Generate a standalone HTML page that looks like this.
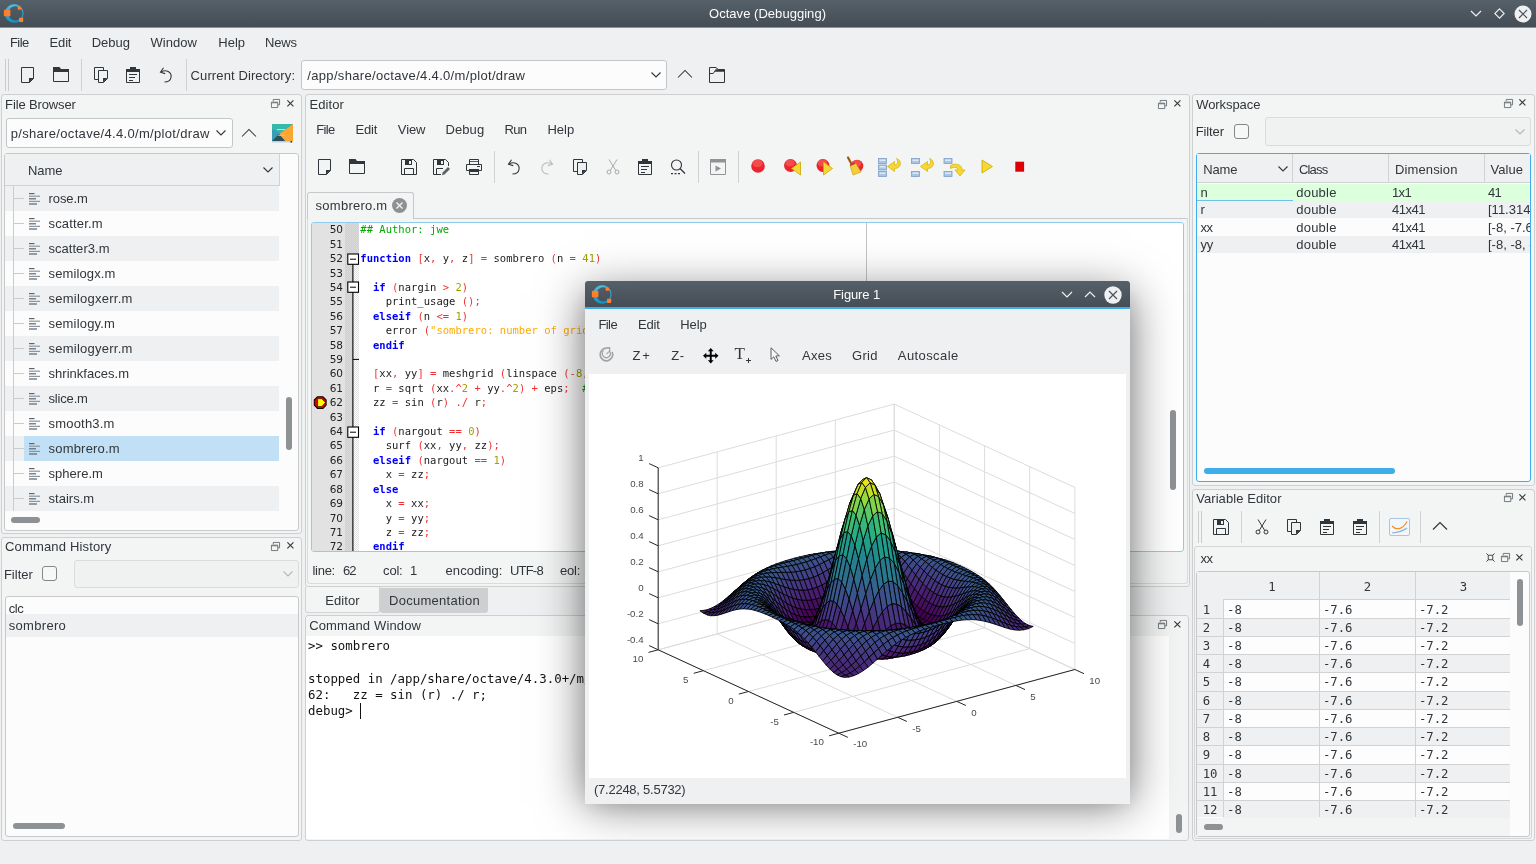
<!DOCTYPE html><html><head><meta charset="utf-8"><title>Octave (Debugging)</title><style>
html,body{margin:0;padding:0;}
body{width:1536px;height:864px;overflow:hidden;background:#eff0f1;position:relative;font-family:"Liberation Sans",sans-serif;font-size:13px;color:#31363b;}
#root{position:absolute;left:0;top:0;width:1536px;height:864px;overflow:hidden;transform:translateZ(0);will-change:transform;}
.t{position:absolute;white-space:pre;}
.m{font-family:"DejaVu Sans Mono","Liberation Mono",monospace;}
.w{color:#fcfcfc;}
.dock{position:absolute;border:1px solid #cdcfd0;border-radius:3px;background:#f3f4f4;box-sizing:border-box;}
.view{position:absolute;border:1px solid #c6c8c9;border-radius:3px;background:#fcfcfc;box-sizing:border-box;overflow:hidden;}
.sep{position:absolute;width:1px;background:#cfd1d2;}
.sb{position:absolute;background:#8f9294;border-radius:3px;}
</style></head><body><div id="root">
<div style="position:absolute;left:0px;top:0px;width:1536px;height:27px;background:linear-gradient(#566069,#444d55);"></div><div style="position:absolute;left:0px;top:27px;width:1536px;height:1px;background:#3daee9;"></div><svg style="position:absolute;left:0px;top:0px" width="28" height="28" viewBox="0 0 28 28"><defs><linearGradient id="olg" x1="0" y1="0" x2="0" y2="1"><stop offset="0" stop-color="#52bde2"/><stop offset="1" stop-color="#0d93c6"/></linearGradient></defs><path fill-rule="evenodd" fill="url(#olg)" d="M14.2,4.2 a9.3,9.3 0 1 0 0.01,0 Z M15.4,6.3 a7.1,7.1 0 1 1 -0.01,0 Z"/><rect x="3.9" y="9.7" width="6.5" height="6.5" rx="0.7" fill="#ff7f2a"/><rect x="17.7" y="6.5" width="3.3" height="3.3" rx="0.8" fill="#ff7f2a"/><rect x="19" y="17.7" width="4.2" height="4.2" rx="0.6" fill="#ff7f2a"/></svg><div class="t w" style="left:709.00px;top:4px;height:20px;line-height:20px;letter-spacing:0.038px;">Octave (Debugging)</div><svg style="position:absolute;left:1470.4px;top:10px;overflow:visible" width="12" height="8" viewBox="0 0 12 8" ><path d="M1,1 L6,6 L11,1" stroke="#eff0f1" stroke-width="1.2" fill="none" /></svg><svg style="position:absolute;left:1494px;top:8px;overflow:visible" width="11" height="11" viewBox="0 0 11 11" ><path d="M5.5,0.8 L10.2,5.5 L5.5,10.2 L0.8,5.5 Z" stroke="#eff0f1" stroke-width="1.1" fill="none" /></svg><svg style="position:absolute;left:1513.6px;top:4.5px;overflow:visible" width="18" height="18" viewBox="0 0 18 18" ><circle cx="9" cy="9" r="8.5" fill="#eff0f1"/><path d="M5,5 L13,13 M13,5 L5,13" stroke="#4a535b" stroke-width="1.2" fill="none" /></svg>
<div class="t " style="left:10.00px;top:33px;height:20px;line-height:20px;letter-spacing:-0.577px;">File</div><div class="t " style="left:49.60px;top:33px;height:20px;line-height:20px;letter-spacing:-0.175px;">Edit</div><div class="t " style="left:91.70px;top:33px;height:20px;line-height:20px;">Debug</div><div class="t " style="left:150.50px;top:33px;height:20px;line-height:20px;letter-spacing:0.044px;">Window</div><div class="t " style="left:218.30px;top:33px;height:20px;line-height:20px;letter-spacing:-0.005px;">Help</div><div class="t " style="left:265.00px;top:33px;height:20px;line-height:20px;letter-spacing:-0.167px;">News</div>
<div style="position:absolute;left:5px;top:59px;width:1px;height:32px;background:#c9cbcd;"></div><div style="position:absolute;left:8px;top:59px;width:1px;height:32px;background:#c9cbcd;"></div><svg style="position:absolute;left:20px;top:67px;overflow:visible" width="16" height="16" viewBox="0 0 16 16" ><path d="M1.5,0.5 H13.5 V11.5 L9.5,15.5 H1.5 Z" stroke="#31363b" stroke-width="1" fill="none" /><path d="M13.5,11 H9 V15.5 Z" fill="#31363b" /><path d="M9.5,15.5 V11.5 H13.5" stroke="#31363b" stroke-width="1" fill="none" /></svg><svg style="position:absolute;left:53px;top:67px;overflow:visible" width="16" height="16" viewBox="0 0 16 16" ><path d="M0,0 H6.5 L8,2 H16 V5 H0 Z" fill="#31363b" /><path d="M0.5,4 V14.5 H15.5 V4" stroke="#31363b" stroke-width="1" fill="none" /></svg><div style="position:absolute;left:81px;top:59px;width:1px;height:32px;background:#cfd1d2;"></div><svg style="position:absolute;left:93px;top:67px;overflow:visible" width="16" height="16" viewBox="0 0 16 16" ><path d="M1.5,0.5 H10.5 V3 M5,12.5 H1.5 V0.5" stroke="#31363b" stroke-width="1" fill="none" /><path d="M5.5,3.5 H14.5 V11.5 L10.5,15.5 H5.5 Z" stroke="#31363b" stroke-width="1" fill="#eff0f1" /><path d="M14.5,11 H10 V15.5 Z" fill="#31363b" /></svg><svg style="position:absolute;left:125px;top:67px;overflow:visible" width="16" height="16" viewBox="0 0 16 16" ><path d="M1.5,2.5 V15.5 H14.5 V2.5" stroke="#31363b" stroke-width="1" fill="none" /><path d="M1,2 H5 V0 H11 V2 H15 V5 H1 Z" fill="#31363b" /><path d="M4,7.5 H12 M4,10.5 H10 M4,13.5 H8" stroke="#31363b" stroke-width="1" fill="none" /></svg><svg style="position:absolute;left:158px;top:67px;overflow:visible" width="16" height="16" viewBox="0 0 16 16" ><path d="M3,5 C8,2 14,5 13,10.5 C12.5,13 10,15 6.5,15" stroke="#31363b" stroke-width="1.1" fill="none" /><path d="M5.5,0.8 L2.5,5.2 L7.2,6.6" stroke="#31363b" stroke-width="1.1" fill="none" /></svg><div style="position:absolute;left:186px;top:59px;width:1px;height:32px;background:#cfd1d2;"></div><div class="t " style="left:190.60px;top:66px;height:20px;line-height:20px;letter-spacing:0.108px;">Current Directory:</div><div style="position:absolute;left:301px;top:60px;width:366px;height:30px;background:#fcfcfc;border:1px solid #c3c5c6;border-radius:3px;box-sizing:border-box;"></div><div class="t " style="left:307.30px;top:66px;height:20px;line-height:20px;letter-spacing:0.324px;">/app/share/octave/4.4.0/m/plot/draw</div><svg style="position:absolute;left:651px;top:72px;overflow:visible" width="10" height="6" viewBox="0 0 10 6" ><path d="M0.5,0.5 L5,5 L9.5,0.5" stroke="#31363b" stroke-width="1.1" fill="none" /></svg><svg style="position:absolute;left:676.5px;top:66.3px;overflow:visible" width="16" height="16" viewBox="0 0 16 16" ><path d="M1,11.5 L8,4.5 L15,11.5" stroke="#31363b" stroke-width="1.05" fill="none" /></svg><svg style="position:absolute;left:709px;top:67px;overflow:visible" width="16" height="16" viewBox="0 0 16 16" ><path d="M0.5,0.5 H7.2 L9.2,2.5 H15.5 V15.5 H0.5 Z" stroke="#31363b" stroke-width="1" fill="none" /><path d="M7.6,2.2 H15.5 V4.8 H5.6 Z" fill="#31363b" /><path d="M7.6,1.6 L4.2,6.5 H0.5" stroke="#31363b" stroke-width="1" fill="none" /></svg>
<div class="dock" style="left:1px;top:94px;width:301px;height:440px"></div><div class="t " style="left:5.10px;top:94.5px;height:20px;line-height:20px;letter-spacing:-0.129px;">File Browser</div><svg style="position:absolute;left:270.8px;top:99px;overflow:visible" width="9" height="9" viewBox="0 0 10 10" ><path d="M2.5,2.5 V0.5 H9.5 V6.5 H7.5" stroke="#686d72" stroke-width="1" fill="none" /><path d="M0.5,3.5 H7.5 V9.5 H0.5 Z" stroke="#686d72" stroke-width="1" fill="none" /><path d="M0.5,4.2 H7.5" stroke="#686d72" stroke-width="1" fill="none" /></svg><svg style="position:absolute;left:286.7px;top:99.7px;overflow:visible" width="6.8" height="6.8" viewBox="0 0 9 9" ><path d="M0.5,0.5 L8.5,8.5 M8.5,0.5 L0.5,8.5" stroke="#33383d" stroke-width="1.5" fill="none" /></svg><div style="position:absolute;left:6px;top:118px;width:227px;height:30px;background:#fcfcfc;border:1px solid #c3c5c6;border-radius:3px;box-sizing:border-box;"></div><div class="t " style="left:10.70px;top:124px;height:20px;line-height:20px;letter-spacing:0.325px;">p/share/octave/4.4.0/m/plot/draw</div><svg style="position:absolute;left:216px;top:130px;overflow:visible" width="10" height="6" viewBox="0 0 10 6" ><path d="M0.5,0.5 L5,5 L9.5,0.5" stroke="#31363b" stroke-width="1.1" fill="none" /></svg><svg style="position:absolute;left:241px;top:124.5px;overflow:visible" width="16" height="16" viewBox="0 0 16 16" ><path d="M1,11.5 L8,4.5 L15,11.5" stroke="#31363b" stroke-width="1.05" fill="none" /></svg><svg style="position:absolute;left:272px;top:124px;overflow:visible" width="21" height="19" viewBox="0 0 21 19" ><rect x="0" y="0" width="21" height="17" fill="#3a9db5"/><path d="M0,0 H21 L8,9 L0,5 Z" fill="#35b9ab"/><path d="M21,0 V17 H13 L7,10 Z" fill="#f9a633"/><path d="M0,17 L7,10 L13,17 Z" fill="#2e4f5e"/><rect x="0" y="17" width="21" height="1.5" fill="#b7d3dd"/><rect x="18.5" y="17" width="1.5" height="1.5" fill="#31363b"/><rect x="5" y="5" width="8" height="1" fill="#d8f0ea" opacity=".8"/><rect x="6" y="11" width="7" height="1" fill="#d8c9a0" opacity=".7"/></svg><div class="view" style="left:4px;top:153px;width:295px;height:378px"></div><div style="position:absolute;left:5px;top:154px;width:274px;height:31px;background:#eff0f1;border-bottom:1px solid #d0d2d3;border-right:1px solid #d0d2d3;box-sizing:content-box;"></div><div class="t " style="left:28.00px;top:161px;height:20px;line-height:20px;letter-spacing:-0.103px;">Name</div><svg style="position:absolute;left:263px;top:167px;overflow:visible" width="10" height="6" viewBox="0 0 10 6" ><path d="M0.5,0.5 L5,5 L9.5,0.5" stroke="#31363b" stroke-width="1.1" fill="none" /></svg><div style="position:absolute;left:5px;top:186px;width:274px;height:25px;background:#eff0f1;"></div><div style="position:absolute;left:14px;top:198px;width:10px;height:1px;background:#c9cbcc;"></div><svg style="position:absolute;left:29px;top:193px;overflow:visible" width="12" height="12" viewBox="0 0 12 12" ><rect x="0" y="0" width="5.5" height="1.2" fill="#5c6670"/><rect x="0" y="2.6" width="11" height="1.2" fill="#8c96a0"/><rect x="0" y="5.2" width="7" height="1.2" fill="#5c6670"/><rect x="0" y="7.8" width="11" height="1.2" fill="#8c96a0"/><rect x="0" y="10.4" width="8" height="1.2" fill="#5c6670"/></svg><div class="t " style="left:48.50px;top:189px;height:20px;line-height:20px;letter-spacing:-0.063px;">rose.m</div><div style="position:absolute;left:14px;top:223px;width:10px;height:1px;background:#c9cbcc;"></div><svg style="position:absolute;left:29px;top:218px;overflow:visible" width="12" height="12" viewBox="0 0 12 12" ><rect x="0" y="0" width="5.5" height="1.2" fill="#5c6670"/><rect x="0" y="2.6" width="11" height="1.2" fill="#8c96a0"/><rect x="0" y="5.2" width="7" height="1.2" fill="#5c6670"/><rect x="0" y="7.8" width="11" height="1.2" fill="#8c96a0"/><rect x="0" y="10.4" width="8" height="1.2" fill="#5c6670"/></svg><div class="t " style="left:48.50px;top:214px;height:20px;line-height:20px;letter-spacing:0.173px;">scatter.m</div><div style="position:absolute;left:5px;top:236px;width:274px;height:25px;background:#eff0f1;"></div><div style="position:absolute;left:14px;top:248px;width:10px;height:1px;background:#c9cbcc;"></div><svg style="position:absolute;left:29px;top:243px;overflow:visible" width="12" height="12" viewBox="0 0 12 12" ><rect x="0" y="0" width="5.5" height="1.2" fill="#5c6670"/><rect x="0" y="2.6" width="11" height="1.2" fill="#8c96a0"/><rect x="0" y="5.2" width="7" height="1.2" fill="#5c6670"/><rect x="0" y="7.8" width="11" height="1.2" fill="#8c96a0"/><rect x="0" y="10.4" width="8" height="1.2" fill="#5c6670"/></svg><div class="t " style="left:48.50px;top:239px;height:20px;line-height:20px;letter-spacing:0.032px;">scatter3.m</div><div style="position:absolute;left:14px;top:273px;width:10px;height:1px;background:#c9cbcc;"></div><svg style="position:absolute;left:29px;top:268px;overflow:visible" width="12" height="12" viewBox="0 0 12 12" ><rect x="0" y="0" width="5.5" height="1.2" fill="#5c6670"/><rect x="0" y="2.6" width="11" height="1.2" fill="#8c96a0"/><rect x="0" y="5.2" width="7" height="1.2" fill="#5c6670"/><rect x="0" y="7.8" width="11" height="1.2" fill="#8c96a0"/><rect x="0" y="10.4" width="8" height="1.2" fill="#5c6670"/></svg><div class="t " style="left:48.50px;top:264px;height:20px;line-height:20px;letter-spacing:0.132px;">semilogx.m</div><div style="position:absolute;left:5px;top:286px;width:274px;height:25px;background:#eff0f1;"></div><div style="position:absolute;left:14px;top:298px;width:10px;height:1px;background:#c9cbcc;"></div><svg style="position:absolute;left:29px;top:293px;overflow:visible" width="12" height="12" viewBox="0 0 12 12" ><rect x="0" y="0" width="5.5" height="1.2" fill="#5c6670"/><rect x="0" y="2.6" width="11" height="1.2" fill="#8c96a0"/><rect x="0" y="5.2" width="7" height="1.2" fill="#5c6670"/><rect x="0" y="7.8" width="11" height="1.2" fill="#8c96a0"/><rect x="0" y="10.4" width="8" height="1.2" fill="#5c6670"/></svg><div class="t " style="left:48.50px;top:289px;height:20px;line-height:20px;letter-spacing:0.248px;">semilogxerr.m</div><div style="position:absolute;left:14px;top:323px;width:10px;height:1px;background:#c9cbcc;"></div><svg style="position:absolute;left:29px;top:318px;overflow:visible" width="12" height="12" viewBox="0 0 12 12" ><rect x="0" y="0" width="5.5" height="1.2" fill="#5c6670"/><rect x="0" y="2.6" width="11" height="1.2" fill="#8c96a0"/><rect x="0" y="5.2" width="7" height="1.2" fill="#5c6670"/><rect x="0" y="7.8" width="11" height="1.2" fill="#8c96a0"/><rect x="0" y="10.4" width="8" height="1.2" fill="#5c6670"/></svg><div class="t " style="left:48.50px;top:314px;height:20px;line-height:20px;letter-spacing:0.177px;">semilogy.m</div><div style="position:absolute;left:5px;top:336px;width:274px;height:25px;background:#eff0f1;"></div><div style="position:absolute;left:14px;top:348px;width:10px;height:1px;background:#c9cbcc;"></div><svg style="position:absolute;left:29px;top:343px;overflow:visible" width="12" height="12" viewBox="0 0 12 12" ><rect x="0" y="0" width="5.5" height="1.2" fill="#5c6670"/><rect x="0" y="2.6" width="11" height="1.2" fill="#8c96a0"/><rect x="0" y="5.2" width="7" height="1.2" fill="#5c6670"/><rect x="0" y="7.8" width="11" height="1.2" fill="#8c96a0"/><rect x="0" y="10.4" width="8" height="1.2" fill="#5c6670"/></svg><div class="t " style="left:48.50px;top:339px;height:20px;line-height:20px;letter-spacing:0.248px;">semilogyerr.m</div><div style="position:absolute;left:14px;top:373px;width:10px;height:1px;background:#c9cbcc;"></div><svg style="position:absolute;left:29px;top:368px;overflow:visible" width="12" height="12" viewBox="0 0 12 12" ><rect x="0" y="0" width="5.5" height="1.2" fill="#5c6670"/><rect x="0" y="2.6" width="11" height="1.2" fill="#8c96a0"/><rect x="0" y="5.2" width="7" height="1.2" fill="#5c6670"/><rect x="0" y="7.8" width="11" height="1.2" fill="#8c96a0"/><rect x="0" y="10.4" width="8" height="1.2" fill="#5c6670"/></svg><div class="t " style="left:48.50px;top:364px;height:20px;line-height:20px;letter-spacing:0.032px;">shrinkfaces.m</div><div style="position:absolute;left:5px;top:386px;width:274px;height:25px;background:#eff0f1;"></div><div style="position:absolute;left:14px;top:398px;width:10px;height:1px;background:#c9cbcc;"></div><svg style="position:absolute;left:29px;top:393px;overflow:visible" width="12" height="12" viewBox="0 0 12 12" ><rect x="0" y="0" width="5.5" height="1.2" fill="#5c6670"/><rect x="0" y="2.6" width="11" height="1.2" fill="#8c96a0"/><rect x="0" y="5.2" width="7" height="1.2" fill="#5c6670"/><rect x="0" y="7.8" width="11" height="1.2" fill="#8c96a0"/><rect x="0" y="10.4" width="8" height="1.2" fill="#5c6670"/></svg><div class="t " style="left:48.50px;top:389px;height:20px;line-height:20px;letter-spacing:-0.172px;">slice.m</div><div style="position:absolute;left:14px;top:423px;width:10px;height:1px;background:#c9cbcc;"></div><svg style="position:absolute;left:29px;top:418px;overflow:visible" width="12" height="12" viewBox="0 0 12 12" ><rect x="0" y="0" width="5.5" height="1.2" fill="#5c6670"/><rect x="0" y="2.6" width="11" height="1.2" fill="#8c96a0"/><rect x="0" y="5.2" width="7" height="1.2" fill="#5c6670"/><rect x="0" y="7.8" width="11" height="1.2" fill="#8c96a0"/><rect x="0" y="10.4" width="8" height="1.2" fill="#5c6670"/></svg><div class="t " style="left:48.50px;top:414px;height:20px;line-height:20px;letter-spacing:0.202px;">smooth3.m</div><div style="position:absolute;left:5px;top:436px;width:274px;height:25px;background:#eff0f1;"></div><div style="position:absolute;left:24px;top:436px;width:255px;height:25px;background:#c2e0f5;"></div><div style="position:absolute;left:14px;top:448px;width:10px;height:1px;background:#c9cbcc;"></div><svg style="position:absolute;left:29px;top:443px;overflow:visible" width="12" height="12" viewBox="0 0 12 12" ><rect x="0" y="0" width="5.5" height="1.2" fill="#5c6670"/><rect x="0" y="2.6" width="11" height="1.2" fill="#8c96a0"/><rect x="0" y="5.2" width="7" height="1.2" fill="#5c6670"/><rect x="0" y="7.8" width="11" height="1.2" fill="#8c96a0"/><rect x="0" y="10.4" width="8" height="1.2" fill="#5c6670"/></svg><div class="t " style="left:48.50px;top:439px;height:20px;line-height:20px;letter-spacing:0.205px;">sombrero.m</div><div style="position:absolute;left:14px;top:473px;width:10px;height:1px;background:#c9cbcc;"></div><svg style="position:absolute;left:29px;top:468px;overflow:visible" width="12" height="12" viewBox="0 0 12 12" ><rect x="0" y="0" width="5.5" height="1.2" fill="#5c6670"/><rect x="0" y="2.6" width="11" height="1.2" fill="#8c96a0"/><rect x="0" y="5.2" width="7" height="1.2" fill="#5c6670"/><rect x="0" y="7.8" width="11" height="1.2" fill="#8c96a0"/><rect x="0" y="10.4" width="8" height="1.2" fill="#5c6670"/></svg><div class="t " style="left:48.50px;top:464px;height:20px;line-height:20px;letter-spacing:0.027px;">sphere.m</div><div style="position:absolute;left:5px;top:486px;width:274px;height:25px;background:#eff0f1;"></div><div style="position:absolute;left:14px;top:498px;width:10px;height:1px;background:#c9cbcc;"></div><svg style="position:absolute;left:29px;top:493px;overflow:visible" width="12" height="12" viewBox="0 0 12 12" ><rect x="0" y="0" width="5.5" height="1.2" fill="#5c6670"/><rect x="0" y="2.6" width="11" height="1.2" fill="#8c96a0"/><rect x="0" y="5.2" width="7" height="1.2" fill="#5c6670"/><rect x="0" y="7.8" width="11" height="1.2" fill="#8c96a0"/><rect x="0" y="10.4" width="8" height="1.2" fill="#5c6670"/></svg><div class="t " style="left:48.50px;top:489px;height:20px;line-height:20px;letter-spacing:0.029px;">stairs.m</div><div style="position:absolute;left:13px;top:186px;width:1px;height:325px;background:#c9cbcc;"></div><div class="sb" style="left:286px;top:397px;width:6px;height:53px"></div><div class="sb" style="left:11px;top:517px;width:29px;height:6px"></div>
<div class="dock" style="left:1px;top:537px;width:301px;height:304px"></div><div class="t " style="left:5.00px;top:537px;height:20px;line-height:20px;letter-spacing:0.164px;">Command History</div><svg style="position:absolute;left:270.8px;top:541.5px;overflow:visible" width="9" height="9" viewBox="0 0 10 10" ><path d="M2.5,2.5 V0.5 H9.5 V6.5 H7.5" stroke="#686d72" stroke-width="1" fill="none" /><path d="M0.5,3.5 H7.5 V9.5 H0.5 Z" stroke="#686d72" stroke-width="1" fill="none" /><path d="M0.5,4.2 H7.5" stroke="#686d72" stroke-width="1" fill="none" /></svg><svg style="position:absolute;left:286.7px;top:542.2px;overflow:visible" width="6.8" height="6.8" viewBox="0 0 9 9" ><path d="M0.5,0.5 L8.5,8.5 M8.5,0.5 L0.5,8.5" stroke="#33383d" stroke-width="1.5" fill="none" /></svg><div class="t " style="left:3.90px;top:565px;height:20px;line-height:20px;letter-spacing:0.028px;">Filter</div><div style="position:absolute;left:42px;top:566px;width:15px;height:15px;border:1px solid #83878a;border-radius:3px;box-sizing:border-box;background:#f6f7f7;"></div><div style="position:absolute;left:74px;top:560px;width:225px;height:28px;background:#f0f1f1;border:1px solid #d9dbdc;border-radius:3px;box-sizing:border-box;"></div><svg style="position:absolute;left:283px;top:571.0px;overflow:visible" width="10" height="6" viewBox="0 0 10 6" ><path d="M0.5,0.5 L5,5 L9.5,0.5" stroke="#b4b7b9" stroke-width="1.1" fill="none" /></svg><div class="view" style="left:5px;top:596px;width:294px;height:241px"></div><div style="position:absolute;left:6px;top:614px;width:292px;height:23px;background:#eff0f1;"></div><div class="t " style="left:8.80px;top:599px;height:20px;line-height:20px;letter-spacing:-0.480px;">clc</div><div class="t " style="left:8.80px;top:616px;height:20px;line-height:20px;letter-spacing:0.296px;">sombrero</div><div class="sb" style="left:13px;top:823px;width:52px;height:6px"></div>
<div class="dock" style="left:305px;top:94px;width:885px;height:493px"></div><div style="position:absolute;left:307px;top:218px;width:881px;height:366px;border:1px solid #d9dbdc;border-top:none;border-radius:0 0 3px 3px;box-sizing:border-box;"></div><div class="t " style="left:309.60px;top:95px;height:20px;line-height:20px;letter-spacing:0.044px;">Editor</div><svg style="position:absolute;left:1158.2px;top:99.5px;overflow:visible" width="9" height="9" viewBox="0 0 10 10" ><path d="M2.5,2.5 V0.5 H9.5 V6.5 H7.5" stroke="#686d72" stroke-width="1" fill="none" /><path d="M0.5,3.5 H7.5 V9.5 H0.5 Z" stroke="#686d72" stroke-width="1" fill="none" /><path d="M0.5,4.2 H7.5" stroke="#686d72" stroke-width="1" fill="none" /></svg><svg style="position:absolute;left:1174.1000000000001px;top:100.2px;overflow:visible" width="6.8" height="6.8" viewBox="0 0 9 9" ><path d="M0.5,0.5 L8.5,8.5 M8.5,0.5 L0.5,8.5" stroke="#33383d" stroke-width="1.5" fill="none" /></svg><div class="t " style="left:316.30px;top:119.5px;height:20px;line-height:20px;letter-spacing:-0.677px;">File</div><div class="t " style="left:355.60px;top:119.5px;height:20px;line-height:20px;letter-spacing:-0.242px;">Edit</div><div class="t " style="left:397.80px;top:119.5px;height:20px;line-height:20px;letter-spacing:-0.083px;">View</div><div class="t " style="left:445.40px;top:119.5px;height:20px;line-height:20px;letter-spacing:0.104px;">Debug</div><div class="t " style="left:504.50px;top:119.5px;height:20px;line-height:20px;letter-spacing:-0.627px;">Run</div><div class="t " style="left:547.40px;top:119.5px;height:20px;line-height:20px;letter-spacing:0.028px;">Help</div><svg style="position:absolute;left:316.5px;top:159px;overflow:visible" width="16" height="16" viewBox="0 0 16 16" ><path d="M1.5,0.5 H13.5 V11.5 L9.5,15.5 H1.5 Z" stroke="#31363b" stroke-width="1" fill="none" /><path d="M13.5,11 H9 V15.5 Z" fill="#31363b" /><path d="M9.5,15.5 V11.5 H13.5" stroke="#31363b" stroke-width="1" fill="none" /></svg><svg style="position:absolute;left:349px;top:159px;overflow:visible" width="16" height="16" viewBox="0 0 16 16" ><path d="M0,0 H6.5 L8,2 H16 V5 H0 Z" fill="#31363b" /><path d="M0.5,4 V14.5 H15.5 V4" stroke="#31363b" stroke-width="1" fill="none" /></svg><svg style="position:absolute;left:401px;top:159px;overflow:visible" width="16" height="16" viewBox="0 0 16 16" ><path d="M0.5,0.5 H12.5 L15.5,3.5 V15.5 H0.5 Z" stroke="#31363b" stroke-width="1" fill="none" /><path d="M3.5,15.5 V9.5 H12.5 V15.5" stroke="#31363b" stroke-width="1" fill="none" /><path d="M4,1 H11 V6 H4 Z M8,2 V5 H10 V2 Z" fill="#31363b" fill-rule="evenodd"/></svg><svg style="position:absolute;left:433px;top:159px;overflow:visible" width="16" height="16" viewBox="0 0 16 16" ><path d="M8,15.5 H0.5 V0.5 H12.5 L15.5,3.5 V7" stroke="#31363b" stroke-width="1" fill="none" /><path d="M3.5,15.5 V9.5 H10" stroke="#31363b" stroke-width="1" fill="none" /><path d="M4,1 H11 V6 H4 Z M8,2 V5 H10 V2 Z" fill="#31363b" fill-rule="evenodd"/><path d="M15,8 L17,10 L11.5,15.5 L9,16.2 L9.6,13.5 Z" fill="#5d6165" /></svg><svg style="position:absolute;left:466px;top:159px;overflow:visible" width="16" height="16" viewBox="0 0 16 16" ><path d="M3.5,5 V0.5 H12.5 V5" stroke="#31363b" stroke-width="1" fill="none" /><path d="M3.5,2.5 H12.5" stroke="#31363b" stroke-width="0.8" fill="none" /><path d="M3.5,11.5 H0.5 V5.5 H15.5 V11.5 H12.5" stroke="#31363b" stroke-width="1" fill="none" /><path d="M3,10 H13 V13 H3 Z" fill="#31363b" /><path d="M3.5,13 V15.5 H12.5 V13" stroke="#31363b" stroke-width="1" fill="none" /><path d="M11,7 H14 V8 H11 Z" fill="#31363b" /></svg><div style="position:absolute;left:494px;top:151px;width:1px;height:32px;background:#cfd1d2;"></div><svg style="position:absolute;left:506px;top:159px;overflow:visible" width="16" height="16" viewBox="0 0 16 16" ><path d="M3,5 C8,2 14,5 13,10.5 C12.5,13 10,15 6.5,15" stroke="#31363b" stroke-width="1.1" fill="none" /><path d="M5.5,0.8 L2.5,5.2 L7.2,6.6" stroke="#31363b" stroke-width="1.1" fill="none" /></svg><svg style="position:absolute;left:539px;top:159px;overflow:visible" width="16" height="16" viewBox="0 0 16 16" ><path d="M13,5 C8,2 2,5 3,10.5 C3.5,13 6,15 9.5,15" stroke="#b9bcbe" stroke-width="1.1" fill="none" /><path d="M10.5,0.8 L13.5,5.2 L8.8,6.6" stroke="#b9bcbe" stroke-width="1.1" fill="none" /></svg><svg style="position:absolute;left:572px;top:159px;overflow:visible" width="16" height="16" viewBox="0 0 16 16" ><path d="M1.5,0.5 H10.5 V3 M5,12.5 H1.5 V0.5" stroke="#31363b" stroke-width="1" fill="none" /><path d="M5.5,3.5 H14.5 V11.5 L10.5,15.5 H5.5 Z" stroke="#31363b" stroke-width="1" fill="#eff0f1" /><path d="M14.5,11 H10 V15.5 Z" fill="#31363b" /></svg><svg style="position:absolute;left:604.5px;top:159px;overflow:visible" width="16" height="16" viewBox="0 0 16 16" ><path d="M4,0.5 L10.8,11.5 M12,0.5 L5.2,11.5" stroke="#a6a9ab" stroke-width="1" fill="none" /><circle cx="4" cy="13" r="2" stroke="#a6a9ab" fill="none"/><circle cx="12" cy="13" r="2" stroke="#a6a9ab" fill="none"/></svg><svg style="position:absolute;left:637px;top:159px;overflow:visible" width="16" height="16" viewBox="0 0 16 16" ><path d="M1.5,2.5 V15.5 H14.5 V2.5" stroke="#31363b" stroke-width="1" fill="none" /><path d="M1,2 H5 V0 H11 V2 H15 V5 H1 Z" fill="#31363b" /><path d="M4,7.5 H12 M4,10.5 H10 M4,13.5 H8" stroke="#31363b" stroke-width="1" fill="none" /></svg><svg style="position:absolute;left:669.5px;top:159px;overflow:visible" width="16" height="16" viewBox="0 0 16 16" ><circle cx="6.5" cy="6" r="5" stroke="#31363b" fill="none" stroke-width="1.1"/><path d="M10,9.5 L15,14.5" stroke="#31363b" stroke-width="1.2" fill="none" /><path d="M1,14 h2 v1.2 h-2 z M4.5,14 h2 v1.2 h-2 z M8,14 h2 v1.2 h-2 z" fill="#31363b" /></svg><div style="position:absolute;left:698px;top:151px;width:1px;height:32px;background:#cfd1d2;"></div><svg style="position:absolute;left:710px;top:159px;overflow:visible" width="16" height="16" viewBox="0 0 16 16" ><path d="M0.5,0.5 H15.5 V15.5 H0.5 Z" stroke="#909396" stroke-width="1" fill="none" /><path d="M0,0 H16 V3.5 H0 Z" fill="#909396" /><path d="M5.5,6.5 V12.5 L11,9.5 Z" fill="#909396" /></svg><div style="position:absolute;left:738px;top:151px;width:1px;height:32px;background:#cfd1d2;"></div><svg style="position:absolute;left:745px;top:155px;overflow:visible" width="290" height="24" viewBox="0 0 290 24" ><circle cx="13" cy="11" r="6.8" fill="#e8262c"/><ellipse cx="12.5" cy="8.5" rx="5.1" ry="3.74" fill="#ff6a6a" opacity=".55"/><circle cx="45.5" cy="10.5" r="6.5" fill="#e8262c"/><ellipse cx="45.0" cy="8.0" rx="4.875" ry="3.575" fill="#ff6a6a" opacity=".55"/><polygon points="55.5,7 55.5,20 46.5,13.5" fill="#f5d832" stroke="#c9a800" stroke-width="0.8" stroke-linejoin="round"/><circle cx="78" cy="10.5" r="6.5" fill="#e8262c"/><ellipse cx="77.5" cy="8.0" rx="4.875" ry="3.575" fill="#ff6a6a" opacity=".55"/><polygon points="78.5,7 78.5,20 87.5,13.5" fill="#f5d832" stroke="#c9a800" stroke-width="0.8" stroke-linejoin="round"/><circle cx="112" cy="11" r="6.3" fill="#e8262c"/><ellipse cx="111.5" cy="8.5" rx="4.725" ry="3.4650000000000003" fill="#ff6a6a" opacity=".55"/><path d="M103,2.5 L107,10" stroke="#a05a14" stroke-width="2.2" stroke-linecap="round"/><path d="M105,10.5 L110.5,8 L116,17 L108,20 Z" fill="#f2cf3a" stroke="#c9a21a" stroke-width="0.7"/><path d="M105.2,10.2 L110.2,8" stroke="#c0392b" stroke-width="1.8"/><rect x="133.5" y="3.5" width="8" height="5" fill="#a9c4e4" stroke="#7f9fc8" stroke-width="0.8"/><rect x="134.5" y="4.5" width="6" height="1.5" fill="#dbe8f6"/><rect x="133.5" y="10" width="8" height="5" fill="#a9c4e4" stroke="#7f9fc8" stroke-width="0.8"/><rect x="134.5" y="11" width="6" height="1.5" fill="#dbe8f6"/><rect x="133.5" y="16.5" width="8" height="5" fill="#a9c4e4" stroke="#7f9fc8" stroke-width="0.8"/><rect x="134.5" y="17.5" width="6" height="1.5" fill="#dbe8f6"/><path d="M151.5,3.5 C157.5,5.5 156.5,13.5 149.5,13.5 L149.5,16.5 L142.5,11.5 L149.5,6.5 L149.5,10.0 C153.0,10.0 153.5,6.5 151.5,3.5 Z" fill="#f5d832" stroke="#d4ae10" stroke-width="0.7" stroke-linejoin="round"/><rect x="166.5" y="3.5" width="8" height="5" fill="#a9c4e4" stroke="#7f9fc8" stroke-width="0.8"/><rect x="167.5" y="4.5" width="6" height="1.5" fill="#dbe8f6"/><rect x="166.5" y="16.5" width="8" height="5" fill="#a9c4e4" stroke="#7f9fc8" stroke-width="0.8"/><rect x="167.5" y="17.5" width="6" height="1.5" fill="#dbe8f6"/><path d="M184.5,3.5 C190.5,5.5 189.5,13.5 182.5,13.5 L182.5,16.5 L175.5,11.5 L182.5,6.5 L182.5,10.0 C186.0,10.0 186.5,6.5 184.5,3.5 Z" fill="#f5d832" stroke="#d4ae10" stroke-width="0.7" stroke-linejoin="round"/><rect x="199" y="3.5" width="8" height="5" fill="#a9c4e4" stroke="#7f9fc8" stroke-width="0.8"/><rect x="200" y="4.5" width="6" height="1.5" fill="#dbe8f6"/><rect x="199" y="16.5" width="8" height="5" fill="#a9c4e4" stroke="#7f9fc8" stroke-width="0.8"/><rect x="200" y="17.5" width="6" height="1.5" fill="#dbe8f6"/><path d="M205.5,10.5 C212.5,7 217.5,11 217.0,15 L220.0,15 L215.0,21 L210.0,15 L213.0,15 C213.0,12.5 209.5,11.5 205.5,13.5 Z" fill="#f5d832" stroke="#d4ae10" stroke-width="0.7" stroke-linejoin="round"/><polygon points="237,5 237,18 247.5,11.5" fill="#f5d832" stroke="#c9a800" stroke-width="0.8" stroke-linejoin="round"/><rect x="270.29999999999995" y="6.699999999999989" width="8.8" height="10" fill="#dd0000"/></svg><div style="position:absolute;left:307px;top:218px;width:880px;height:1px;background:#c6c8c9;"></div><div style="position:absolute;left:307px;top:192px;width:107px;height:27px;border:1px solid #c6c8c9;border-bottom:none;border-radius:3px 3px 0 0;background:#f3f4f4;box-sizing:border-box;"></div><div class="t " style="left:315.60px;top:196px;height:20px;line-height:20px;letter-spacing:0.249px;">sombrero.m</div><svg style="position:absolute;left:392px;top:198px;overflow:visible" width="15" height="15" viewBox="0 0 15 15" ><circle cx="7.5" cy="7.5" r="7.5" fill="#8e9193"/><path d="M4.5,4.5 L10.5,10.5 M10.5,4.5 L4.5,10.5" stroke="#f3f4f4" stroke-width="1.3" fill="none" /></svg><div style="position:absolute;left:311px;top:222px;width:873px;height:330px;border:1px solid #8fcbea;border-radius:3px;box-sizing:border-box;background:#fff;overflow:hidden"><div style="position:absolute;left:0;top:0;width:871px;height:328px;overflow:hidden"><div style="position:absolute;left:0px;top:0px;width:34px;height:330px;background:#e2e2e2;"></div><div style="position:absolute;left:33px;top:0px;width:14px;height:330px;background:repeating-conic-gradient(#cfcfcf 0% 25%, #dadada 0% 50%) 0 0/2px 2px;"></div><div style="position:absolute;left:41px;top:37px;width:6px;height:293px;background:repeating-conic-gradient(#dedede 0% 25%, #ffffff 0% 50%) 0 0/2px 2px;"></div><div style="position:absolute;left:554px;top:0px;width:1px;height:330px;background:#c4c4c4;"></div><div class="t" style="font-family:'DejaVu Sans',sans-serif;left:0;width:31px;text-align:right;top:-1.70px;height:16px;line-height:16px;font-size:10.5px;color:#222">50</div><div class="t m" style="left:48.3px;top:-1.70px;height:16px;line-height:16px;font-size:10.5px;letter-spacing:0.02px;color:#1a1a1a"><span style="color:#00a800">## Author: jwe</span></div><div class="t" style="font-family:'DejaVu Sans',sans-serif;left:0;width:31px;text-align:right;top:12.71px;height:16px;line-height:16px;font-size:10.5px;color:#222">51</div><div class="t" style="font-family:'DejaVu Sans',sans-serif;left:0;width:31px;text-align:right;top:27.12px;height:16px;line-height:16px;font-size:10.5px;color:#222">52</div><div class="t m" style="left:48.3px;top:27.12px;height:16px;line-height:16px;font-size:10.5px;letter-spacing:0.02px;color:#1a1a1a"><b style="color:#0000ff">function</b> <span style="color:#f03030">[</span>x<span style="color:#f03030">,</span> y<span style="color:#f03030">,</span> z<span style="color:#f03030">]</span> <span style="color:#f03030">=</span> sombrero <span style="color:#f03030">(</span>n <span style="color:#f03030">=</span> <span style="color:#a0a000">41</span><span style="color:#f03030">)</span></div><div class="t" style="font-family:'DejaVu Sans',sans-serif;left:0;width:31px;text-align:right;top:41.53px;height:16px;line-height:16px;font-size:10.5px;color:#222">53</div><div class="t" style="font-family:'DejaVu Sans',sans-serif;left:0;width:31px;text-align:right;top:55.94px;height:16px;line-height:16px;font-size:10.5px;color:#222">54</div><div class="t m" style="left:48.3px;top:55.94px;height:16px;line-height:16px;font-size:10.5px;letter-spacing:0.02px;color:#1a1a1a">  <b style="color:#0000ff">if</b> <span style="color:#f03030">(</span>nargin <span style="color:#f03030">&gt;</span> <span style="color:#a0a000">2</span><span style="color:#f03030">)</span></div><div class="t" style="font-family:'DejaVu Sans',sans-serif;left:0;width:31px;text-align:right;top:70.35px;height:16px;line-height:16px;font-size:10.5px;color:#222">55</div><div class="t m" style="left:48.3px;top:70.35px;height:16px;line-height:16px;font-size:10.5px;letter-spacing:0.02px;color:#1a1a1a">    print_usage <span style="color:#f03030">();</span></div><div class="t" style="font-family:'DejaVu Sans',sans-serif;left:0;width:31px;text-align:right;top:84.76px;height:16px;line-height:16px;font-size:10.5px;color:#222">56</div><div class="t m" style="left:48.3px;top:84.76px;height:16px;line-height:16px;font-size:10.5px;letter-spacing:0.02px;color:#1a1a1a">  <b style="color:#0000ff">elseif</b> <span style="color:#f03030">(</span>n <span style="color:#f03030">&lt;=</span> <span style="color:#a0a000">1</span><span style="color:#f03030">)</span></div><div class="t" style="font-family:'DejaVu Sans',sans-serif;left:0;width:31px;text-align:right;top:99.17px;height:16px;line-height:16px;font-size:10.5px;color:#222">57</div><div class="t m" style="left:48.3px;top:99.17px;height:16px;line-height:16px;font-size:10.5px;letter-spacing:0.02px;color:#1a1a1a">    error <span style="color:#f03030">(</span><span style="color:#ffaa00">&quot;sombrero: number of grid points N must be greater than 1&quot;</span><span style="color:#f03030">);</span></div><div class="t" style="font-family:'DejaVu Sans',sans-serif;left:0;width:31px;text-align:right;top:113.58px;height:16px;line-height:16px;font-size:10.5px;color:#222">58</div><div class="t m" style="left:48.3px;top:113.58px;height:16px;line-height:16px;font-size:10.5px;letter-spacing:0.02px;color:#1a1a1a">  <b style="color:#0000ff">endif</b></div><div class="t" style="font-family:'DejaVu Sans',sans-serif;left:0;width:31px;text-align:right;top:127.99px;height:16px;line-height:16px;font-size:10.5px;color:#222">59</div><div class="t" style="font-family:'DejaVu Sans',sans-serif;left:0;width:31px;text-align:right;top:142.40px;height:16px;line-height:16px;font-size:10.5px;color:#222">60</div><div class="t m" style="left:48.3px;top:142.40px;height:16px;line-height:16px;font-size:10.5px;letter-spacing:0.02px;color:#1a1a1a">  <span style="color:#f03030">[</span>xx<span style="color:#f03030">,</span> yy<span style="color:#f03030">]</span> <span style="color:#f03030">=</span> meshgrid <span style="color:#f03030">(</span>linspace <span style="color:#f03030">(-</span><span style="color:#a0a000">8</span><span style="color:#f03030">,</span> <span style="color:#a0a000">8</span><span style="color:#f03030">,</span> n<span style="color:#f03030">));</span></div><div class="t" style="font-family:'DejaVu Sans',sans-serif;left:0;width:31px;text-align:right;top:156.81px;height:16px;line-height:16px;font-size:10.5px;color:#222">61</div><div class="t m" style="left:48.3px;top:156.81px;height:16px;line-height:16px;font-size:10.5px;letter-spacing:0.02px;color:#1a1a1a">  r <span style="color:#f03030">=</span> sqrt <span style="color:#f03030">(</span>xx<span style="color:#f03030">.^</span><span style="color:#a0a000">2</span> <span style="color:#f03030">+</span> yy<span style="color:#f03030">.^</span><span style="color:#a0a000">2</span><span style="color:#f03030">)</span> <span style="color:#f03030">+</span> eps<span style="color:#f03030">;</span>  <span style="color:#00a800"># eps prevents div/0 errors</span></div><div class="t" style="font-family:'DejaVu Sans',sans-serif;left:0;width:31px;text-align:right;top:171.22px;height:16px;line-height:16px;font-size:10.5px;color:#222">62</div><div class="t m" style="left:48.3px;top:171.22px;height:16px;line-height:16px;font-size:10.5px;letter-spacing:0.02px;color:#1a1a1a">  zz <span style="color:#f03030">=</span> sin <span style="color:#f03030">(</span>r<span style="color:#f03030">)</span> <span style="color:#f03030">./</span> r<span style="color:#f03030">;</span></div><div class="t" style="font-family:'DejaVu Sans',sans-serif;left:0;width:31px;text-align:right;top:185.63px;height:16px;line-height:16px;font-size:10.5px;color:#222">63</div><div class="t" style="font-family:'DejaVu Sans',sans-serif;left:0;width:31px;text-align:right;top:200.04px;height:16px;line-height:16px;font-size:10.5px;color:#222">64</div><div class="t m" style="left:48.3px;top:200.04px;height:16px;line-height:16px;font-size:10.5px;letter-spacing:0.02px;color:#1a1a1a">  <b style="color:#0000ff">if</b> <span style="color:#f03030">(</span>nargout <span style="color:#f03030">==</span> <span style="color:#a0a000">0</span><span style="color:#f03030">)</span></div><div class="t" style="font-family:'DejaVu Sans',sans-serif;left:0;width:31px;text-align:right;top:214.45px;height:16px;line-height:16px;font-size:10.5px;color:#222">65</div><div class="t m" style="left:48.3px;top:214.45px;height:16px;line-height:16px;font-size:10.5px;letter-spacing:0.02px;color:#1a1a1a">    surf <span style="color:#f03030">(</span>xx<span style="color:#f03030">,</span> yy<span style="color:#f03030">,</span> zz<span style="color:#f03030">);</span></div><div class="t" style="font-family:'DejaVu Sans',sans-serif;left:0;width:31px;text-align:right;top:228.86px;height:16px;line-height:16px;font-size:10.5px;color:#222">66</div><div class="t m" style="left:48.3px;top:228.86px;height:16px;line-height:16px;font-size:10.5px;letter-spacing:0.02px;color:#1a1a1a">  <b style="color:#0000ff">elseif</b> <span style="color:#f03030">(</span>nargout <span style="color:#f03030">==</span> <span style="color:#a0a000">1</span><span style="color:#f03030">)</span></div><div class="t" style="font-family:'DejaVu Sans',sans-serif;left:0;width:31px;text-align:right;top:243.27px;height:16px;line-height:16px;font-size:10.5px;color:#222">67</div><div class="t m" style="left:48.3px;top:243.27px;height:16px;line-height:16px;font-size:10.5px;letter-spacing:0.02px;color:#1a1a1a">    x <span style="color:#f03030">=</span> zz<span style="color:#f03030">;</span></div><div class="t" style="font-family:'DejaVu Sans',sans-serif;left:0;width:31px;text-align:right;top:257.68px;height:16px;line-height:16px;font-size:10.5px;color:#222">68</div><div class="t m" style="left:48.3px;top:257.68px;height:16px;line-height:16px;font-size:10.5px;letter-spacing:0.02px;color:#1a1a1a">  <b style="color:#0000ff">else</b></div><div class="t" style="font-family:'DejaVu Sans',sans-serif;left:0;width:31px;text-align:right;top:272.09px;height:16px;line-height:16px;font-size:10.5px;color:#222">69</div><div class="t m" style="left:48.3px;top:272.09px;height:16px;line-height:16px;font-size:10.5px;letter-spacing:0.02px;color:#1a1a1a">    x <span style="color:#f03030">=</span> xx<span style="color:#f03030">;</span></div><div class="t" style="font-family:'DejaVu Sans',sans-serif;left:0;width:31px;text-align:right;top:286.50px;height:16px;line-height:16px;font-size:10.5px;color:#222">70</div><div class="t m" style="left:48.3px;top:286.50px;height:16px;line-height:16px;font-size:10.5px;letter-spacing:0.02px;color:#1a1a1a">    y <span style="color:#f03030">=</span> yy<span style="color:#f03030">;</span></div><div class="t" style="font-family:'DejaVu Sans',sans-serif;left:0;width:31px;text-align:right;top:300.91px;height:16px;line-height:16px;font-size:10.5px;color:#222">71</div><div class="t m" style="left:48.3px;top:300.91px;height:16px;line-height:16px;font-size:10.5px;letter-spacing:0.02px;color:#1a1a1a">    z <span style="color:#f03030">=</span> zz<span style="color:#f03030">;</span></div><div class="t" style="font-family:'DejaVu Sans',sans-serif;left:0;width:31px;text-align:right;top:315.32px;height:16px;line-height:16px;font-size:10.5px;color:#222">72</div><div class="t m" style="left:48.3px;top:315.32px;height:16px;line-height:16px;font-size:10.5px;letter-spacing:0.02px;color:#1a1a1a">  <b style="color:#0000ff">endif</b></div><svg style="position:absolute;left:0;top:0" width="60" height="330" viewBox="0 0 60 330"><path d="M40.9,35.1 V330" stroke="#000" stroke-width="1.1"/><path d="M40.9,136.4 H47" stroke="#000" stroke-width="1"/><rect x="35.8" y="31.0" width="10.7" height="10.3" fill="#fff" stroke="#000" stroke-width="1.1"/><path d="M38,36.2 H44" stroke="#000" stroke-width="1"/><rect x="35.8" y="59.0" width="10.7" height="10.3" fill="#fff" stroke="#000" stroke-width="1.1"/><path d="M38,64.2 H44" stroke="#000" stroke-width="1"/><rect x="35.8" y="204.0" width="10.7" height="10.3" fill="#fff" stroke="#000" stroke-width="1.1"/><path d="M38,209.2 H44" stroke="#000" stroke-width="1"/><polygon points="5.6,173.7 10.8,173.7 14.1,177.0 14.1,182.2 10.8,185.5 5.6,185.5 2.3,182.2 2.3,177.0" fill="#dd0000" stroke="#1a0000" stroke-width="1.1" stroke-linejoin="round"/><path d="M5.6,175.72000000000003 H9.799999999999999 L13.399999999999999,179.62000000000003 L9.799999999999999,183.52000000000004 H5.6 Z" fill="#ffff00" stroke="#2a1a00" stroke-width="0.7" stroke-linejoin="round"/></svg><div class="sb" style="left:858px;top:187px;width:6px;height:80px"></div></div></div><div class="t " style="left:312.50px;top:560.7px;height:20px;line-height:20px;letter-spacing:-0.289px;">line:</div><div class="t " style="left:342.90px;top:560.7px;height:20px;line-height:20px;letter-spacing:-0.800px;">62</div><div class="t " style="left:383.10px;top:560.7px;height:20px;line-height:20px;letter-spacing:-0.205px;">col:</div><div class="t " style="left:410.00px;top:560.7px;height:20px;line-height:20px;">1</div><div class="t " style="left:445.60px;top:560.7px;height:20px;line-height:20px;letter-spacing:0.043px;">encoding:</div><div class="t " style="left:510.00px;top:560.7px;height:20px;line-height:20px;letter-spacing:-0.800px;">UTF-8</div><div class="t " style="left:560.00px;top:560.7px;height:20px;line-height:20px;letter-spacing:-0.177px;">eol:</div><div style="position:absolute;left:305px;top:587px;width:75px;height:26px;border:1px solid #d0d2d3;border-top:none;border-radius:0 0 3px 3px;box-sizing:border-box;background:#f3f4f4;"></div><div style="position:absolute;left:380px;top:588px;width:108px;height:25px;border-radius:0 0 3px 3px;background:#cdcfd0;"></div><div class="t " style="left:325.20px;top:591px;height:20px;line-height:20px;letter-spacing:0.094px;">Editor</div><div class="t " style="left:389.10px;top:591px;height:20px;line-height:20px;letter-spacing:0.265px;">Documentation</div><div class="dock" style="left:305px;top:615px;width:884px;height:226px"></div><div class="t " style="left:309.20px;top:615.5px;height:20px;line-height:20px;letter-spacing:0.150px;">Command Window</div><svg style="position:absolute;left:1158.2px;top:620px;overflow:visible" width="9" height="9" viewBox="0 0 10 10" ><path d="M2.5,2.5 V0.5 H9.5 V6.5 H7.5" stroke="#686d72" stroke-width="1" fill="none" /><path d="M0.5,3.5 H7.5 V9.5 H0.5 Z" stroke="#686d72" stroke-width="1" fill="none" /><path d="M0.5,4.2 H7.5" stroke="#686d72" stroke-width="1" fill="none" /></svg><svg style="position:absolute;left:1174.1000000000001px;top:620.7px;overflow:visible" width="6.8" height="6.8" viewBox="0 0 9 9" ><path d="M0.5,0.5 L8.5,8.5 M8.5,0.5 L0.5,8.5" stroke="#33383d" stroke-width="1.5" fill="none" /></svg><div style="position:absolute;left:306px;top:636px;width:880px;height:203px;background:#ffffff;"></div><div style="position:absolute;left:1169px;top:636px;width:17px;height:203px;background:#f3f4f4;"></div><div class="t m" style="left:308px;top:637.0px;height:18px;line-height:18px;font-size:12.4px;color:#111">&gt;&gt; sombrero</div><div class="t m" style="left:308px;top:653.3px;height:18px;line-height:18px;font-size:12.4px;color:#111"></div><div class="t m" style="left:308px;top:669.6px;height:18px;line-height:18px;font-size:12.4px;color:#111">stopped in /app/share/octave/4.3.0+/m/plot/draw/sombrero.m at line 62</div><div class="t m" style="left:308px;top:685.9px;height:18px;line-height:18px;font-size:12.4px;color:#111">62:   zz = sin (r) ./ r;</div><div class="t m" style="left:308px;top:702.2px;height:18px;line-height:18px;font-size:12.4px;color:#111">debug&gt; </div><div style="position:absolute;left:360px;top:703px;width:1px;height:16px;background:#111;"></div><div class="sb" style="left:1176px;top:814px;width:6px;height:19px"></div>
<div class="dock" style="left:1192px;top:94px;width:343px;height:392px"></div><div class="t " style="left:1196.20px;top:95px;height:20px;line-height:20px;letter-spacing:-0.076px;">Workspace</div><svg style="position:absolute;left:1504px;top:98.5px;overflow:visible" width="9" height="9" viewBox="0 0 10 10" ><path d="M2.5,2.5 V0.5 H9.5 V6.5 H7.5" stroke="#686d72" stroke-width="1" fill="none" /><path d="M0.5,3.5 H7.5 V9.5 H0.5 Z" stroke="#686d72" stroke-width="1" fill="none" /><path d="M0.5,4.2 H7.5" stroke="#686d72" stroke-width="1" fill="none" /></svg><svg style="position:absolute;left:1519.3px;top:99.3px;overflow:visible" width="6.8" height="6.8" viewBox="0 0 9 9" ><path d="M0.5,0.5 L8.5,8.5 M8.5,0.5 L0.5,8.5" stroke="#33383d" stroke-width="1.5" fill="none" /></svg><div class="t " style="left:1195.80px;top:122px;height:20px;line-height:20px;letter-spacing:-0.132px;">Filter</div><div style="position:absolute;left:1233.5px;top:124px;width:15px;height:15px;border:1px solid #83878a;border-radius:3px;box-sizing:border-box;background:#f6f7f7;"></div><div style="position:absolute;left:1265px;top:117px;width:266px;height:29px;background:#f0f1f1;border:1px solid #d9dbdc;border-radius:3px;box-sizing:border-box;"></div><svg style="position:absolute;left:1515px;top:128.5px;overflow:visible" width="10" height="6" viewBox="0 0 10 6" ><path d="M0.5,0.5 L5,5 L9.5,0.5" stroke="#b4b7b9" stroke-width="1.1" fill="none" /></svg><div style="position:absolute;left:1196px;top:153px;width:335px;height:329px;border:1px solid #3daee9;border-radius:3px;box-sizing:border-box;background:#fcfcfc;"></div><div style="position:absolute;left:1197px;top:154px;width:333px;height:28px;background:#eff0f1;border-bottom:1px solid #d0d2d3;"></div><div style="position:absolute;left:1292px;top:154px;width:1px;height:28px;background:#d0d2d3;"></div><div style="position:absolute;left:1388px;top:154px;width:1px;height:28px;background:#d0d2d3;"></div><div style="position:absolute;left:1484px;top:154px;width:1px;height:28px;background:#d0d2d3;"></div><div class="t " style="left:1203.20px;top:160px;height:20px;line-height:20px;letter-spacing:-0.137px;">Name</div><div class="t " style="left:1298.90px;top:160px;height:20px;line-height:20px;letter-spacing:-0.775px;">Class</div><div class="t " style="left:1395.00px;top:160px;height:20px;line-height:20px;letter-spacing:0.122px;">Dimension</div><div class="t " style="left:1490.50px;top:160px;height:20px;line-height:20px;letter-spacing:0.049px;">Value</div><svg style="position:absolute;left:1277.5px;top:166px;overflow:visible" width="10" height="6" viewBox="0 0 10 6" ><path d="M0.5,0.5 L5,5 L9.5,0.5" stroke="#31363b" stroke-width="1.1" fill="none" /></svg><div style="position:absolute;left:1197px;top:154px;width:333px;height:327px;overflow:hidden"><div style="position:absolute;left:0px;top:30px;width:333px;height:17px;background:#dcffdc;"></div><div class="t " style="left:3.50px;top:29px;height:20px;line-height:20px;">n</div><div class="t " style="left:99.30px;top:29px;height:20px;line-height:20px;letter-spacing:0.207px;">double</div><div class="t " style="left:195.00px;top:29px;height:20px;line-height:20px;letter-spacing:-0.615px;">1x1</div><div class="t " style="left:291.00px;top:29px;height:20px;line-height:20px;letter-spacing:-0.800px;">41</div><div style="position:absolute;left:0px;top:47px;width:333px;height:17px;background:#eff0f1;"></div><div class="t " style="left:3.50px;top:46.3px;height:20px;line-height:20px;">r</div><div class="t " style="left:99.30px;top:46.3px;height:20px;line-height:20px;letter-spacing:0.207px;">double</div><div class="t " style="left:195.00px;top:46.3px;height:20px;line-height:20px;letter-spacing:-0.456px;">41x41</div><div class="t " style="left:291.00px;top:46.3px;height:20px;line-height:20px;">[11.314, 11.03</div><div class="t " style="left:3.50px;top:63.6px;height:20px;line-height:20px;letter-spacing:-0.600px;">xx</div><div class="t " style="left:99.30px;top:63.6px;height:20px;line-height:20px;letter-spacing:0.207px;">double</div><div class="t " style="left:195.00px;top:63.6px;height:20px;line-height:20px;letter-spacing:-0.456px;">41x41</div><div class="t " style="left:291.00px;top:63.6px;height:20px;line-height:20px;">[-8, -7.6, -7.2</div><div style="position:absolute;left:0px;top:82px;width:333px;height:17px;background:#eff0f1;"></div><div class="t " style="left:3.50px;top:80.9px;height:20px;line-height:20px;letter-spacing:-0.300px;">yy</div><div class="t " style="left:99.30px;top:80.9px;height:20px;line-height:20px;letter-spacing:0.207px;">double</div><div class="t " style="left:195.00px;top:80.9px;height:20px;line-height:20px;letter-spacing:-0.456px;">41x41</div><div class="t " style="left:291.00px;top:80.9px;height:20px;line-height:20px;">[-8, -8, -8, -8</div><div style="position:absolute;left:0px;top:46px;width:96px;height:1px;background:#6fc0ea;"></div></div><div class="sb" style="left:1204px;top:468px;width:191px;height:6px;background:#3daee9"></div><div class="dock" style="left:1192px;top:489px;width:343px;height:352px"></div><div class="t " style="left:1196.20px;top:489px;height:20px;line-height:20px;letter-spacing:0.071px;">Variable Editor</div><svg style="position:absolute;left:1504px;top:492.5px;overflow:visible" width="9" height="9" viewBox="0 0 10 10" ><path d="M2.5,2.5 V0.5 H9.5 V6.5 H7.5" stroke="#686d72" stroke-width="1" fill="none" /><path d="M0.5,3.5 H7.5 V9.5 H0.5 Z" stroke="#686d72" stroke-width="1" fill="none" /><path d="M0.5,4.2 H7.5" stroke="#686d72" stroke-width="1" fill="none" /></svg><svg style="position:absolute;left:1519.3px;top:493.5px;overflow:visible" width="6.8" height="6.8" viewBox="0 0 9 9" ><path d="M0.5,0.5 L8.5,8.5 M8.5,0.5 L0.5,8.5" stroke="#33383d" stroke-width="1.5" fill="none" /></svg><div style="position:absolute;left:1198px;top:511px;width:1px;height:32px;background:#c9cbcd;"></div><div style="position:absolute;left:1201px;top:511px;width:1px;height:32px;background:#c9cbcd;"></div><svg style="position:absolute;left:1213px;top:519px;overflow:visible" width="16" height="16" viewBox="0 0 16 16" ><path d="M0.5,0.5 H12.5 L15.5,3.5 V15.5 H0.5 Z" stroke="#31363b" stroke-width="1" fill="none" /><path d="M3.5,15.5 V9.5 H12.5 V15.5" stroke="#31363b" stroke-width="1" fill="none" /><path d="M4,1 H11 V6 H4 Z M8,2 V5 H10 V2 Z" fill="#31363b" fill-rule="evenodd"/></svg><div style="position:absolute;left:1241px;top:511px;width:1px;height:32px;background:#cfd1d2;"></div><svg style="position:absolute;left:1253.5px;top:519px;overflow:visible" width="16" height="16" viewBox="0 0 16 16" ><path d="M4,0.5 L10.8,11.5 M12,0.5 L5.2,11.5" stroke="#31363b" stroke-width="1" fill="none" /><circle cx="4" cy="13" r="2" stroke="#31363b" fill="none"/><circle cx="12" cy="13" r="2" stroke="#31363b" fill="none"/></svg><svg style="position:absolute;left:1286px;top:519px;overflow:visible" width="16" height="16" viewBox="0 0 16 16" ><path d="M1.5,0.5 H10.5 V3 M5,12.5 H1.5 V0.5" stroke="#31363b" stroke-width="1" fill="none" /><path d="M5.5,3.5 H14.5 V11.5 L10.5,15.5 H5.5 Z" stroke="#31363b" stroke-width="1" fill="#eff0f1" /><path d="M14.5,11 H10 V15.5 Z" fill="#31363b" /></svg><svg style="position:absolute;left:1319px;top:519px;overflow:visible" width="16" height="16" viewBox="0 0 16 16" ><path d="M1.5,2.5 V15.5 H14.5 V2.5" stroke="#31363b" stroke-width="1" fill="none" /><path d="M1,2 H5 V0 H11 V2 H15 V5 H1 Z" fill="#31363b" /><path d="M4,7.5 H12 M4,10.5 H10 M4,13.5 H8" stroke="#31363b" stroke-width="1" fill="none" /></svg><svg style="position:absolute;left:1351.5px;top:519px;overflow:visible" width="16" height="16" viewBox="0 0 16 16" ><path d="M1.5,2.5 V15.5 H14.5 V2.5" stroke="#31363b" stroke-width="1" fill="none" /><path d="M1,2 H5 V0 H11 V2 H15 V5 H1 Z" fill="#31363b" /><path d="M4,7.5 H12 M4,10.5 H10 M4,13.5 H8" stroke="#31363b" stroke-width="1" fill="none" /></svg><div style="position:absolute;left:1379px;top:511px;width:1px;height:32px;background:#cfd1d2;"></div><svg style="position:absolute;left:1389px;top:518px;overflow:visible" width="21" height="18" viewBox="0 0 21 18" ><rect x="0.5" y="0.5" width="20" height="17" rx="1.5" fill="#f1f6fb" stroke="#a9c5e3"/><path d="M3,8 C8,13 14,11 18,3.5" fill="none" stroke="#f08a24" stroke-width="1.2"/><path d="M3,15 C9,14.5 14,13 18,10" fill="none" stroke="#8fb2dc" stroke-width="1.2"/></svg><div style="position:absolute;left:1420px;top:511px;width:1px;height:32px;background:#cfd1d2;"></div><svg style="position:absolute;left:1432px;top:518px;overflow:visible" width="16" height="16" viewBox="0 0 16 16" ><path d="M1,11.5 L8,4.5 L15,11.5" stroke="#31363b" stroke-width="1.2" fill="none" /></svg><div style="position:absolute;left:1194px;top:546px;width:338px;height:293px;border:1px solid #d3d5d6;border-radius:3px;box-sizing:border-box;"></div><div class="t " style="left:1200.40px;top:548.7px;height:20px;line-height:20px;letter-spacing:-0.500px;">xx</div><svg style="position:absolute;left:1486.3px;top:552.5px;overflow:visible" width="9" height="9" viewBox="0 0 10 10" ><path d="M2.5,2.5 H7.5 V7.5 H2.5 Z" stroke="#31363b" stroke-width="1" fill="none" /><path d="M0.5,0.5 L2.5,2.5 M9.5,0.5 L7.5,2.5 M0.5,9.5 L2.5,7.5 M9.5,9.5 L7.5,7.5" stroke="#31363b" stroke-width="1" fill="none" /></svg><svg style="position:absolute;left:1500.5px;top:552.5px;overflow:visible" width="9" height="9" viewBox="0 0 10 10" ><path d="M2.5,2.5 V0.5 H9.5 V6.5 H7.5" stroke="#686d72" stroke-width="1" fill="none" /><path d="M0.5,3.5 H7.5 V9.5 H0.5 Z" stroke="#686d72" stroke-width="1" fill="none" /><path d="M0.5,4.2 H7.5" stroke="#686d72" stroke-width="1" fill="none" /></svg><svg style="position:absolute;left:1516.3px;top:553.5px;overflow:visible" width="6.8" height="6.8" viewBox="0 0 9 9" ><path d="M0.5,0.5 L8.5,8.5 M8.5,0.5 L0.5,8.5" stroke="#33383d" stroke-width="1.5" fill="none" /></svg><div style="position:absolute;left:1196px;top:571px;width:334px;height:266px;border:1px solid #c6c8c9;border-radius:3px;box-sizing:border-box;background:#fcfcfc;"></div><div style="position:absolute;left:1197px;top:572px;width:313px;height:264px;overflow:hidden"><div style="position:absolute;left:0px;top:0px;width:313px;height:27px;background:#eff0f1;"></div><div style="position:absolute;left:0px;top:27px;width:26px;height:218px;background:#eff0f1;"></div><div class="t m" style="left:55px;width:40px;text-align:center;top:5.5px;height:18px;line-height:18px;font-size:12.3px">1</div><div class="t m" style="left:150.5px;width:40px;text-align:center;top:5.5px;height:18px;line-height:18px;font-size:12.3px">2</div><div class="t m" style="left:246.5px;width:40px;text-align:center;top:5.5px;height:18px;line-height:18px;font-size:12.3px">3</div><div style="position:absolute;left:27px;top:28px;width:286px;height:18px;background:#fdfdfd;"></div><div class="t m" style="left:5.7px;top:28.50px;height:18px;line-height:18px;font-size:12.3px">1</div><div class="t m" style="left:30.1px;top:28.50px;height:18px;line-height:18px;font-size:12.3px">-8</div><div class="t m" style="left:125.9px;top:28.50px;height:18px;line-height:18px;font-size:12.3px">-7.6</div><div class="t m" style="left:221.9px;top:28.50px;height:18px;line-height:18px;font-size:12.3px">-7.2</div><div style="position:absolute;left:26px;top:46px;width:287px;height:18px;background:#eff0f1;"></div><div class="t m" style="left:5.7px;top:46.75px;height:18px;line-height:18px;font-size:12.3px">2</div><div class="t m" style="left:30.1px;top:46.75px;height:18px;line-height:18px;font-size:12.3px">-8</div><div class="t m" style="left:125.9px;top:46.75px;height:18px;line-height:18px;font-size:12.3px">-7.6</div><div class="t m" style="left:221.9px;top:46.75px;height:18px;line-height:18px;font-size:12.3px">-7.2</div><div style="position:absolute;left:27px;top:65px;width:286px;height:17px;background:#fdfdfd;"></div><div class="t m" style="left:5.7px;top:64.99px;height:18px;line-height:18px;font-size:12.3px">3</div><div class="t m" style="left:30.1px;top:64.99px;height:18px;line-height:18px;font-size:12.3px">-8</div><div class="t m" style="left:125.9px;top:64.99px;height:18px;line-height:18px;font-size:12.3px">-7.6</div><div class="t m" style="left:221.9px;top:64.99px;height:18px;line-height:18px;font-size:12.3px">-7.2</div><div style="position:absolute;left:26px;top:82px;width:287px;height:18px;background:#eff0f1;"></div><div class="t m" style="left:5.7px;top:83.24px;height:18px;line-height:18px;font-size:12.3px">4</div><div class="t m" style="left:30.1px;top:83.24px;height:18px;line-height:18px;font-size:12.3px">-8</div><div class="t m" style="left:125.9px;top:83.24px;height:18px;line-height:18px;font-size:12.3px">-7.6</div><div class="t m" style="left:221.9px;top:83.24px;height:18px;line-height:18px;font-size:12.3px">-7.2</div><div style="position:absolute;left:27px;top:101px;width:286px;height:18px;background:#fdfdfd;"></div><div class="t m" style="left:5.7px;top:101.48px;height:18px;line-height:18px;font-size:12.3px">5</div><div class="t m" style="left:30.1px;top:101.48px;height:18px;line-height:18px;font-size:12.3px">-8</div><div class="t m" style="left:125.9px;top:101.48px;height:18px;line-height:18px;font-size:12.3px">-7.6</div><div class="t m" style="left:221.9px;top:101.48px;height:18px;line-height:18px;font-size:12.3px">-7.2</div><div style="position:absolute;left:26px;top:119px;width:287px;height:18px;background:#eff0f1;"></div><div class="t m" style="left:5.7px;top:119.73px;height:18px;line-height:18px;font-size:12.3px">6</div><div class="t m" style="left:30.1px;top:119.73px;height:18px;line-height:18px;font-size:12.3px">-8</div><div class="t m" style="left:125.9px;top:119.73px;height:18px;line-height:18px;font-size:12.3px">-7.6</div><div class="t m" style="left:221.9px;top:119.73px;height:18px;line-height:18px;font-size:12.3px">-7.2</div><div style="position:absolute;left:27px;top:138px;width:286px;height:17px;background:#fdfdfd;"></div><div class="t m" style="left:5.7px;top:137.97px;height:18px;line-height:18px;font-size:12.3px">7</div><div class="t m" style="left:30.1px;top:137.97px;height:18px;line-height:18px;font-size:12.3px">-8</div><div class="t m" style="left:125.9px;top:137.97px;height:18px;line-height:18px;font-size:12.3px">-7.6</div><div class="t m" style="left:221.9px;top:137.97px;height:18px;line-height:18px;font-size:12.3px">-7.2</div><div style="position:absolute;left:26px;top:155px;width:287px;height:18px;background:#eff0f1;"></div><div class="t m" style="left:5.7px;top:156.22px;height:18px;line-height:18px;font-size:12.3px">8</div><div class="t m" style="left:30.1px;top:156.22px;height:18px;line-height:18px;font-size:12.3px">-8</div><div class="t m" style="left:125.9px;top:156.22px;height:18px;line-height:18px;font-size:12.3px">-7.6</div><div class="t m" style="left:221.9px;top:156.22px;height:18px;line-height:18px;font-size:12.3px">-7.2</div><div style="position:absolute;left:27px;top:174px;width:286px;height:18px;background:#fdfdfd;"></div><div class="t m" style="left:5.7px;top:174.46px;height:18px;line-height:18px;font-size:12.3px">9</div><div class="t m" style="left:30.1px;top:174.46px;height:18px;line-height:18px;font-size:12.3px">-8</div><div class="t m" style="left:125.9px;top:174.46px;height:18px;line-height:18px;font-size:12.3px">-7.6</div><div class="t m" style="left:221.9px;top:174.46px;height:18px;line-height:18px;font-size:12.3px">-7.2</div><div style="position:absolute;left:26px;top:192px;width:287px;height:18px;background:#eff0f1;"></div><div class="t m" style="left:5.7px;top:192.71px;height:18px;line-height:18px;font-size:12.3px">10</div><div class="t m" style="left:30.1px;top:192.71px;height:18px;line-height:18px;font-size:12.3px">-8</div><div class="t m" style="left:125.9px;top:192.71px;height:18px;line-height:18px;font-size:12.3px">-7.6</div><div class="t m" style="left:221.9px;top:192.71px;height:18px;line-height:18px;font-size:12.3px">-7.2</div><div style="position:absolute;left:27px;top:211px;width:286px;height:17px;background:#fdfdfd;"></div><div class="t m" style="left:5.7px;top:210.95px;height:18px;line-height:18px;font-size:12.3px">11</div><div class="t m" style="left:30.1px;top:210.95px;height:18px;line-height:18px;font-size:12.3px">-8</div><div class="t m" style="left:125.9px;top:210.95px;height:18px;line-height:18px;font-size:12.3px">-7.6</div><div class="t m" style="left:221.9px;top:210.95px;height:18px;line-height:18px;font-size:12.3px">-7.2</div><div style="position:absolute;left:26px;top:228px;width:287px;height:18px;background:#eff0f1;"></div><div class="t m" style="left:5.7px;top:229.20px;height:18px;line-height:18px;font-size:12.3px">12</div><div class="t m" style="left:30.1px;top:229.20px;height:18px;line-height:18px;font-size:12.3px">-8</div><div class="t m" style="left:125.9px;top:229.20px;height:18px;line-height:18px;font-size:12.3px">-7.6</div><div class="t m" style="left:221.9px;top:229.20px;height:18px;line-height:18px;font-size:12.3px">-7.2</div><div style="position:absolute;left:26px;top:27px;width:313px;height:1px;background:#d0d2d4;"></div><div style="position:absolute;left:0px;top:46px;width:313px;height:1px;background:#d0d2d4;"></div><div style="position:absolute;left:0px;top:64px;width:313px;height:1px;background:#d0d2d4;"></div><div style="position:absolute;left:0px;top:82px;width:313px;height:1px;background:#d0d2d4;"></div><div style="position:absolute;left:0px;top:100px;width:313px;height:1px;background:#d0d2d4;"></div><div style="position:absolute;left:0px;top:119px;width:313px;height:1px;background:#d0d2d4;"></div><div style="position:absolute;left:0px;top:137px;width:313px;height:1px;background:#d0d2d4;"></div><div style="position:absolute;left:0px;top:155px;width:313px;height:1px;background:#d0d2d4;"></div><div style="position:absolute;left:0px;top:173px;width:313px;height:1px;background:#d0d2d4;"></div><div style="position:absolute;left:0px;top:192px;width:313px;height:1px;background:#d0d2d4;"></div><div style="position:absolute;left:0px;top:210px;width:313px;height:1px;background:#d0d2d4;"></div><div style="position:absolute;left:0px;top:228px;width:313px;height:1px;background:#d0d2d4;"></div><div style="position:absolute;left:0px;top:246px;width:313px;height:1px;background:#d0d2d4;"></div><div style="position:absolute;left:26px;top:27px;width:1px;height:218px;background:#d0d2d4;"></div><div style="position:absolute;left:122px;top:0px;width:1px;height:245px;background:#d0d2d4;"></div><div style="position:absolute;left:218px;top:0px;width:1px;height:245px;background:#d0d2d4;"></div><div style="position:absolute;left:0px;top:246px;width:313px;height:20px;background:#f3f4f4;"></div></div><div class="sb" style="left:1517px;top:579px;width:6px;height:47px"></div><div class="sb" style="left:1204px;top:824px;width:19px;height:6px"></div>
<div style="position:absolute;left:0;top:0;width:1536px;height:840px;overflow:hidden"><div style="position:absolute;left:585px;top:293px;width:545px;height:511px;box-shadow:0 0 44px rgba(0,0,0,0.56),0 0 20px rgba(0,0,0,0.08);"></div></div><div style="position:absolute;left:585px;top:281px;width:545px;height:523px;background:#eff0f1;border-radius:3px 3px 0 0;"><div style="position:absolute;left:0px;top:0px;width:545px;height:27px;background:linear-gradient(#566069,#444d55);border-radius:3px 3px 0 0;"></div><div style="position:absolute;left:0px;top:26.4px;width:545px;height:1.3px;background:#3daee9;"></div><svg style="position:absolute;left:3px;top:0px" width="28" height="28" viewBox="0 0 28 28"><defs><linearGradient id="olg2" x1="0" y1="0" x2="0" y2="1"><stop offset="0" stop-color="#52bde2"/><stop offset="1" stop-color="#0d93c6"/></linearGradient></defs><path fill-rule="evenodd" fill="url(#olg2)" d="M14.2,4.2 a9.3,9.3 0 1 0 0.01,0 Z M15.4,6.3 a7.1,7.1 0 1 1 -0.01,0 Z"/><rect x="3.9" y="9.7" width="6.5" height="6.5" rx="0.7" fill="#ff7f2a"/><rect x="17.7" y="6.5" width="3.3" height="3.3" rx="0.8" fill="#ff7f2a"/><rect x="19" y="17.7" width="4.2" height="4.2" rx="0.6" fill="#ff7f2a"/></svg><div class="t w" style="left:248.30px;top:4px;height:20px;line-height:20px;letter-spacing:-0.116px;">Figure 1</div><svg style="position:absolute;left:476px;top:10px;overflow:visible" width="12" height="8" viewBox="0 0 12 8" ><path d="M1,1 L6,6 L11,1" stroke="#eff0f1" stroke-width="1.2" fill="none" /></svg><svg style="position:absolute;left:498.5px;top:9px;overflow:visible" width="12" height="8" viewBox="0 0 12 8" ><path d="M1,7 L6,2 L11,7" stroke="#eff0f1" stroke-width="1.2" fill="none" /></svg><svg style="position:absolute;left:518.5px;top:5px;overflow:visible" width="18" height="18" viewBox="0 0 18 18" ><circle cx="9" cy="9" r="8.7" fill="#eff0f1"/><path d="M5,5 L13,13 M13,5 L5,13" stroke="#4a535b" stroke-width="1.2" fill="none" /></svg><div class="t " style="left:13.50px;top:33.5px;height:20px;line-height:20px;letter-spacing:-0.610px;">File</div><div class="t " style="left:52.90px;top:33.5px;height:20px;line-height:20px;letter-spacing:-0.142px;">Edit</div><div class="t " style="left:95.20px;top:33.5px;height:20px;line-height:20px;letter-spacing:-0.072px;">Help</div><svg style="position:absolute;left:13.5px;top:66.39999999999998px;overflow:visible" width="15" height="15" viewBox="0 0 15 15" ><path d="M7.5,1.2 A6.3,6.3 0 1 0 13.2,5" fill="none" stroke="#a2a5a7" stroke-width="1.7"/><path d="M4.6,3.6 A4,4 0 1 0 10.6,4.2 L10.6,0.8 L7,1" fill="none" stroke="#a2a5a7" stroke-width="1.3"/><path d="M7.4,7.2 L10.6,4.2" stroke="#a2a5a7" stroke-width="1.1"/></svg><div class="t " style="left:47.60px;top:64.9px;height:20px;line-height:20px;letter-spacing:1.600px;">Z+</div><div class="t " style="left:86.30px;top:64.9px;height:20px;line-height:20px;letter-spacing:0.515px;">Z-</div><svg style="position:absolute;left:117.5px;top:66.89999999999998px;overflow:visible" width="15.5" height="15.5" viewBox="0 0 16 16" ><path d="M8,0 L11,3.4 H9 V7 H12.6 V5 L16,8 L12.6,11 V9 H9 V12.6 H11 L8,16 L5,12.6 H7 V9 H3.4 V11 L0,8 L3.4,5 V7 H7 V3.4 H5 Z" fill="#000"/></svg><div class="t" style="left:149.5px;top:62.99999999999998px;height:20px;line-height:20px;font-family:'Liberation Serif',serif;font-size:17px;color:#31363b">T</div><svg style="position:absolute;left:161px;top:76.89999999999998px;overflow:visible" width="5" height="5" viewBox="0 0 5 5" ><path d="M0,2.5 H5 M2.5,0 V5" stroke="#31363b" stroke-width="1" fill="none" /></svg><svg style="position:absolute;left:185px;top:66.39999999999998px;overflow:visible" width="11" height="16" viewBox="0 0 11 16" ><path d="M1,0.8 V12.4 L3.8,9.8 L6,14.4 L8,13.5 L5.8,9 L9.4,8.8 Z" fill="#f6f6f6" stroke="#4a4e52" stroke-width="0.9" stroke-linejoin="round"/></svg><div class="t " style="left:217.10px;top:64.9px;height:20px;line-height:20px;letter-spacing:0.225px;">Axes</div><div class="t " style="left:267.00px;top:64.9px;height:20px;line-height:20px;letter-spacing:0.310px;">Grid</div><div class="t " style="left:312.80px;top:64.9px;height:20px;line-height:20px;letter-spacing:0.416px;">Autoscale</div><svg style="position:absolute;left:4px;top:93px;background:#fff" width="537" height="404" viewBox="0 0 537 404"><path d="M249.8,359.2L69.2,275.8" stroke="#dcdcdc" stroke-width="1" fill="none"/><path d="M249.8,359.2L485.9,295.5" stroke="#dcdcdc" stroke-width="1" fill="none"/><path d="M69.2,275.8L69.2,93.8" stroke="#dcdcdc" stroke-width="1" fill="none"/><path d="M485.9,295.5L485.9,113.5" stroke="#dcdcdc" stroke-width="1" fill="none"/><path d="M308.8,343.3L128.2,259.9" stroke="#dcdcdc" stroke-width="1" fill="none"/><path d="M204.6,338.4L440.7,274.6" stroke="#dcdcdc" stroke-width="1" fill="none"/><path d="M128.2,259.9L128.2,77.9" stroke="#dcdcdc" stroke-width="1" fill="none"/><path d="M440.7,274.6L440.7,92.6" stroke="#dcdcdc" stroke-width="1" fill="none"/><path d="M367.8,327.4L187.2,244.0" stroke="#dcdcdc" stroke-width="1" fill="none"/><path d="M159.5,317.5L395.6,253.8" stroke="#dcdcdc" stroke-width="1" fill="none"/><path d="M187.2,244.0L187.2,62.0" stroke="#dcdcdc" stroke-width="1" fill="none"/><path d="M395.6,253.8L395.6,71.8" stroke="#dcdcdc" stroke-width="1" fill="none"/><path d="M426.9,311.4L246.3,228.0" stroke="#dcdcdc" stroke-width="1" fill="none"/><path d="M114.3,296.7L350.4,233.0" stroke="#dcdcdc" stroke-width="1" fill="none"/><path d="M246.3,228.0L246.3,46.0" stroke="#dcdcdc" stroke-width="1" fill="none"/><path d="M350.4,233.0L350.4,51.0" stroke="#dcdcdc" stroke-width="1" fill="none"/><path d="M485.9,295.5L305.3,212.1" stroke="#dcdcdc" stroke-width="1" fill="none"/><path d="M69.2,275.8L305.3,212.1" stroke="#dcdcdc" stroke-width="1" fill="none"/><path d="M305.3,212.1L305.3,30.1" stroke="#dcdcdc" stroke-width="1" fill="none"/><path d="M305.3,212.1L305.3,30.1" stroke="#dcdcdc" stroke-width="1" fill="none"/><path d="M69.2,275.8L305.3,212.1" stroke="#dcdcdc" stroke-width="1" fill="none"/><path d="M305.3,212.1L485.9,295.5" stroke="#dcdcdc" stroke-width="1" fill="none"/><path d="M69.2,249.8L305.3,186.1" stroke="#dcdcdc" stroke-width="1" fill="none"/><path d="M305.3,186.1L485.9,269.5" stroke="#dcdcdc" stroke-width="1" fill="none"/><path d="M69.2,223.8L305.3,160.1" stroke="#dcdcdc" stroke-width="1" fill="none"/><path d="M305.3,160.1L485.9,243.5" stroke="#dcdcdc" stroke-width="1" fill="none"/><path d="M69.2,197.8L305.3,134.1" stroke="#dcdcdc" stroke-width="1" fill="none"/><path d="M305.3,134.1L485.9,217.5" stroke="#dcdcdc" stroke-width="1" fill="none"/><path d="M69.2,171.8L305.3,108.1" stroke="#dcdcdc" stroke-width="1" fill="none"/><path d="M305.3,108.1L485.9,191.5" stroke="#dcdcdc" stroke-width="1" fill="none"/><path d="M69.2,145.8L305.3,82.1" stroke="#dcdcdc" stroke-width="1" fill="none"/><path d="M305.3,82.1L485.9,165.5" stroke="#dcdcdc" stroke-width="1" fill="none"/><path d="M69.2,119.8L305.3,56.1" stroke="#dcdcdc" stroke-width="1" fill="none"/><path d="M305.3,56.1L485.9,139.5" stroke="#dcdcdc" stroke-width="1" fill="none"/><path d="M69.2,93.8L305.3,30.1" stroke="#dcdcdc" stroke-width="1" fill="none"/><path d="M305.3,30.1L485.9,113.5" stroke="#dcdcdc" stroke-width="1" fill="none"/><g stroke="#000" stroke-width="0.85" stroke-linejoin="round"><path d="M298.6,189.5L303.4,188.3L299.8,185.7L295.0,187.9Z" fill="#482374"/><path d="M293.9,189.8L298.6,189.5L295.0,187.9L290.3,189.1Z" fill="#482878"/><path d="M302.3,190.2L307.0,189.9L303.4,188.3L298.6,189.5Z" fill="#482878"/><path d="M289.2,189.2L293.9,189.8L290.3,189.1L285.6,189.5Z" fill="#482878"/><path d="M297.5,189.5L302.3,190.2L298.6,189.5L293.9,189.8Z" fill="#482878"/><path d="M305.9,190.0L310.6,190.7L307.0,189.9L302.3,190.2Z" fill="#482878"/><path d="M284.5,188.0L289.2,189.2L285.6,189.5L280.9,189.2Z" fill="#472d7b"/><path d="M292.8,188.0L297.5,189.5L293.9,189.8L289.2,189.2Z" fill="#472d7b"/><path d="M301.1,188.4L305.9,190.0L302.3,190.2L297.5,189.5Z" fill="#472d7b"/><path d="M309.5,189.2L314.2,190.8L310.6,190.7L305.9,190.0Z" fill="#472d7b"/><path d="M279.8,186.3L284.5,188.0L280.9,189.2L276.1,188.3Z" fill="#453781"/><path d="M288.1,186.0L292.8,188.0L289.2,189.2L284.5,188.0Z" fill="#453781"/><path d="M296.4,186.2L301.1,188.4L297.5,189.5L292.8,188.0Z" fill="#453781"/><path d="M304.8,186.8L309.5,189.2L305.9,190.0L301.1,188.4Z" fill="#453781"/><path d="M313.1,187.9L317.8,190.2L314.2,190.8L309.5,189.2Z" fill="#453781"/><path d="M275.0,184.3L279.8,186.3L276.1,188.3L271.4,186.9Z" fill="#443b84"/><path d="M283.4,183.8L288.1,186.0L284.5,188.0L279.8,186.3Z" fill="#443b84"/><path d="M291.7,183.7L296.4,186.2L292.8,188.0L288.1,186.0Z" fill="#443b84"/><path d="M300.0,184.1L304.8,186.8L301.1,188.4L296.4,186.2Z" fill="#443b84"/><path d="M308.4,185.0L313.1,187.9L309.5,189.2L304.8,186.8Z" fill="#443b84"/><path d="M316.7,186.3L321.4,189.3L317.8,190.2L313.1,187.9Z" fill="#443b84"/><path d="M270.3,182.4L275.0,184.3L271.4,186.9L266.7,185.3Z" fill="#424086"/><path d="M278.6,181.5L283.4,183.8L279.8,186.3L275.0,184.3Z" fill="#404588"/><path d="M287.0,181.2L291.7,183.7L288.1,186.0L283.4,183.8Z" fill="#404588"/><path d="M295.3,181.3L300.0,184.1L296.4,186.2L291.7,183.7Z" fill="#404588"/><path d="M303.6,182.0L308.4,185.0L304.8,186.8L300.0,184.1Z" fill="#404588"/><path d="M265.6,180.6L270.3,182.4L266.7,185.3L262.0,183.7Z" fill="#404588"/><path d="M312.0,183.1L316.7,186.3L313.1,187.9L308.4,185.0Z" fill="#404588"/><path d="M320.3,184.7L325.0,188.1L321.4,189.3L316.7,186.3Z" fill="#424086"/><path d="M273.9,179.5L278.6,181.5L275.0,184.3L270.3,182.4Z" fill="#3e4989"/><path d="M282.3,178.9L287.0,181.2L283.4,183.8L278.6,181.5Z" fill="#3e4989"/><path d="M290.6,178.9L295.3,181.3L291.7,183.7L287.0,181.2Z" fill="#3d4e8a"/><path d="M260.9,179.1L265.6,180.6L262.0,183.7L257.3,182.1Z" fill="#3d4e8a"/><path d="M298.9,179.3L303.6,182.0L300.0,184.1L295.3,181.3Z" fill="#3d4e8a"/><path d="M323.9,183.3L328.6,186.8L325.0,188.1L320.3,184.7Z" fill="#404588"/><path d="M307.3,180.1L312.0,183.1L308.4,185.0L303.6,182.0Z" fill="#3e4989"/><path d="M315.6,181.5L320.3,184.7L316.7,186.3L312.0,183.1Z" fill="#3e4989"/><path d="M269.2,177.9L273.9,179.5L270.3,182.4L265.6,180.6Z" fill="#3d4e8a"/><path d="M277.5,177.2L282.3,178.9L278.6,181.5L273.9,179.5Z" fill="#3a538b"/><path d="M256.1,178.0L260.9,179.1L257.3,182.1L252.5,180.8Z" fill="#3d4e8a"/><path d="M285.9,177.0L290.6,178.9L287.0,181.2L282.3,178.9Z" fill="#3a538b"/><path d="M294.2,177.2L298.9,179.3L295.3,181.3L290.6,178.9Z" fill="#3a538b"/><path d="M327.5,182.2L332.3,185.7L328.6,186.8L323.9,183.3Z" fill="#3d4e8a"/><path d="M302.5,177.7L307.3,180.1L303.6,182.0L298.9,179.3Z" fill="#3a538b"/><path d="M264.5,176.8L269.2,177.9L265.6,180.6L260.9,179.1Z" fill="#3a538b"/><path d="M319.2,180.2L323.9,183.3L320.3,184.7L315.6,181.5Z" fill="#3d4e8a"/><path d="M310.9,178.8L315.6,181.5L312.0,183.1L307.3,180.1Z" fill="#3a538b"/><path d="M272.8,176.1L277.5,177.2L273.9,179.5L269.2,177.9Z" fill="#38588c"/><path d="M251.4,177.4L256.1,178.0L252.5,180.8L247.8,179.8Z" fill="#3a538b"/><path d="M281.1,175.8L285.9,177.0L282.3,178.9L277.5,177.2Z" fill="#38588c"/><path d="M289.5,175.9L294.2,177.2L290.6,178.9L285.9,177.0Z" fill="#38588c"/><path d="M259.8,176.2L264.5,176.8L260.9,179.1L256.1,178.0Z" fill="#38588c"/><path d="M297.8,176.3L302.5,177.7L298.9,179.3L294.2,177.2Z" fill="#38588c"/><path d="M331.1,181.5L335.9,184.8L332.3,185.7L327.5,182.2Z" fill="#3d4e8a"/><path d="M306.1,177.0L310.9,178.8L307.3,180.1L302.5,177.7Z" fill="#38588c"/><path d="M322.8,179.5L327.5,182.2L323.9,183.3L319.2,180.2Z" fill="#3a538b"/><path d="M314.5,178.0L319.2,180.2L315.6,181.5L310.9,178.8Z" fill="#38588c"/><path d="M268.1,175.7L272.8,176.1L269.2,177.9L264.5,176.8Z" fill="#38588c"/><path d="M246.7,177.2L251.4,177.4L247.8,179.8L243.1,179.2Z" fill="#38588c"/><path d="M276.4,175.6L281.1,175.8L277.5,177.2L272.8,176.1Z" fill="#38588c"/><path d="M255.0,176.3L259.8,176.2L256.1,178.0L251.4,177.4Z" fill="#38588c"/><path d="M284.8,175.8L289.5,175.9L285.9,177.0L281.1,175.8Z" fill="#365c8d"/><path d="M293.1,176.1L297.8,176.3L294.2,177.2L289.5,175.9Z" fill="#365c8d"/><path d="M263.4,176.1L268.1,175.7L264.5,176.8L259.8,176.2Z" fill="#365c8d"/><path d="M242.0,177.5L246.7,177.2L243.1,179.2L238.4,178.9Z" fill="#38588c"/><path d="M301.4,176.5L306.1,177.0L302.5,177.7L297.8,176.3Z" fill="#365c8d"/><path d="M334.8,181.3L339.5,184.2L335.9,184.8L331.1,181.5Z" fill="#3a538b"/><path d="M309.8,177.2L314.5,178.0L310.9,178.8L306.1,177.0Z" fill="#38588c"/><path d="M326.4,179.4L331.1,181.5L327.5,182.2L322.8,179.5Z" fill="#38588c"/><path d="M318.1,178.1L322.8,179.5L319.2,180.2L314.5,178.0Z" fill="#38588c"/><path d="M271.7,176.3L276.4,175.6L272.8,176.1L268.1,175.7Z" fill="#365c8d"/><path d="M250.3,176.9L255.0,176.3L251.4,177.4L246.7,177.2Z" fill="#365c8d"/><path d="M280.0,176.7L284.8,175.8L281.1,175.8L276.4,175.6Z" fill="#365c8d"/><path d="M288.4,177.1L293.1,176.1L289.5,175.9L284.8,175.8Z" fill="#365c8d"/><path d="M258.6,177.1L263.4,176.1L259.8,176.2L255.0,176.3Z" fill="#365c8d"/><path d="M237.3,178.1L242.0,177.5L238.4,178.9L233.6,179.0Z" fill="#38588c"/><path d="M296.7,177.5L301.4,176.5L297.8,176.3L293.1,176.1Z" fill="#365c8d"/><path d="M267.0,177.8L271.7,176.3L268.1,175.7L263.4,176.1Z" fill="#365c8d"/><path d="M305.0,177.8L309.8,177.2L306.1,177.0L301.4,176.5Z" fill="#365c8d"/><path d="M245.6,178.0L250.3,176.9L246.7,177.2L242.0,177.5Z" fill="#365c8d"/><path d="M338.4,181.5L343.1,183.9L339.5,184.2L334.8,181.3Z" fill="#38588c"/><path d="M275.3,178.6L280.0,176.7L276.4,175.6L271.7,176.3Z" fill="#38588c"/><path d="M313.4,178.2L318.1,178.1L314.5,178.0L309.8,177.2Z" fill="#365c8d"/><path d="M330.0,179.9L334.8,181.3L331.1,181.5L326.4,179.4Z" fill="#38588c"/><path d="M321.7,178.8L326.4,179.4L322.8,179.5L318.1,178.1Z" fill="#365c8d"/><path d="M283.6,179.4L288.4,177.1L284.8,175.8L280.0,176.7Z" fill="#38588c"/><path d="M253.9,178.8L258.6,177.1L255.0,176.3L250.3,176.9Z" fill="#365c8d"/><path d="M274.5,234.3L279.2,230.1L275.6,222.9L270.9,228.2Z" fill="#440154"/><path d="M232.5,179.0L237.3,178.1L233.6,179.0L228.9,179.4Z" fill="#365c8d"/><path d="M279.2,230.1L283.9,224.5L280.3,216.7L275.6,222.9Z" fill="#470d60"/><path d="M282.8,235.3L287.5,230.9L283.9,224.5L279.2,230.1Z" fill="#440154"/><path d="M292.0,179.9L296.7,177.5L293.1,176.1L288.4,177.1Z" fill="#38588c"/><path d="M270.9,228.2L275.6,222.9L272.0,214.5L267.3,220.3Z" fill="#470d60"/><path d="M266.2,232.4L270.9,228.2L267.3,220.3L262.5,225.2Z" fill="#46075a"/><path d="M287.5,230.9L292.3,224.8L288.6,217.7L283.9,224.5Z" fill="#46075a"/><path d="M262.3,180.1L267.0,177.8L263.4,176.1L258.6,177.1Z" fill="#38588c"/><path d="M269.8,237.2L274.5,234.3L270.9,228.2L266.2,232.4Z" fill="#440154"/><path d="M278.1,237.9L282.8,235.3L279.2,230.1L274.5,234.3Z" fill="#440154"/><path d="M291.2,235.7L295.9,230.8L292.3,224.8L287.5,230.9Z" fill="#440154"/><path d="M283.9,224.5L288.6,217.7L285.0,209.8L280.3,216.7Z" fill="#471365"/><path d="M275.6,222.9L280.3,216.7L276.7,208.2L272.0,214.5Z" fill="#48186a"/><path d="M270.6,181.5L275.3,178.6L271.7,176.3L267.0,177.8Z" fill="#38588c"/><path d="M300.3,180.2L305.0,177.8L301.4,176.5L296.7,177.5Z" fill="#38588c"/><path d="M261.4,235.6L266.2,232.4L262.5,225.2L257.8,229.4Z" fill="#440154"/><path d="M286.4,238.3L291.2,235.7L287.5,230.9L282.8,235.3Z" fill="#440154"/><path d="M240.9,179.4L245.6,178.0L242.0,177.5L237.3,178.1Z" fill="#365c8d"/><path d="M278.9,182.7L283.6,179.4L280.0,176.7L275.3,178.6Z" fill="#3a538b"/><path d="M262.5,225.2L267.3,220.3L263.6,211.2L258.9,216.3Z" fill="#471365"/><path d="M295.9,230.8L300.6,224.1L297.0,217.5L292.3,224.8Z" fill="#470d60"/><path d="M292.3,224.8L297.0,217.5L293.4,210.2L288.6,217.7Z" fill="#471365"/><path d="M267.3,220.3L272.0,214.5L268.4,205.5L263.6,211.2Z" fill="#481d6f"/><path d="M257.8,229.4L262.5,225.2L258.9,216.3L254.2,220.8Z" fill="#470d60"/><path d="M280.3,216.7L285.0,209.8L281.4,201.6L276.7,208.2Z" fill="#482374"/><path d="M308.6,180.2L313.4,178.2L309.8,177.2L305.0,177.8Z" fill="#38588c"/><path d="M265.0,238.8L269.8,237.2L266.2,232.4L261.4,235.6Z" fill="#440154"/><path d="M287.3,183.6L292.0,179.9L288.4,177.1L283.6,179.4Z" fill="#3a538b"/><path d="M272.0,214.5L276.7,208.2L273.1,199.6L268.4,205.5Z" fill="#482374"/><path d="M288.6,217.7L293.4,210.2L289.8,202.6L285.0,209.8Z" fill="#481d6f"/><path d="M299.5,235.5L304.2,229.8L300.6,224.1L295.9,230.8Z" fill="#440154"/><path d="M294.8,238.7L299.5,235.5L295.9,230.8L291.2,235.7Z" fill="#440154"/><path d="M249.2,180.9L253.9,178.8L250.3,176.9L245.6,178.0Z" fill="#38588c"/><path d="M273.4,238.8L278.1,237.9L274.5,234.3L269.8,237.2Z" fill="#440154"/><path d="M256.7,238.0L261.4,235.6L257.8,229.4L253.1,232.7Z" fill="#440154"/><path d="M253.1,232.7L257.8,229.4L254.2,220.8L249.5,224.7Z" fill="#46075a"/><path d="M257.5,182.9L262.3,180.1L258.6,177.1L253.9,178.8Z" fill="#38588c"/><path d="M317.0,180.2L321.7,178.8L318.1,178.1L313.4,178.2Z" fill="#365c8d"/><path d="M265.9,185.0L270.6,181.5L267.0,177.8L262.3,180.1Z" fill="#3a538b"/><path d="M274.2,186.9L278.9,182.7L275.3,178.6L270.6,181.5Z" fill="#3d4e8a"/><path d="M295.6,184.0L300.3,180.2L296.7,177.5L292.0,179.9Z" fill="#3a538b"/><path d="M276.7,208.2L281.4,201.6L277.8,193.8L273.1,199.6Z" fill="#472d7b"/><path d="M227.8,180.2L232.5,179.0L228.9,179.4L224.2,180.0Z" fill="#365c8d"/><path d="M285.0,209.8L289.8,202.6L286.1,195.1L281.4,201.6Z" fill="#472d7b"/><path d="M342.0,182.2L346.7,184.0L343.1,183.9L338.4,181.5Z" fill="#38588c"/><path d="M281.7,238.8L286.4,238.3L282.8,235.3L278.1,237.9Z" fill="#440154"/><path d="M325.3,180.3L330.0,179.9L326.4,179.4L321.7,178.8Z" fill="#365c8d"/><path d="M282.5,188.3L287.3,183.6L283.6,179.4L278.9,182.7Z" fill="#3d4e8a"/><path d="M258.9,216.3L263.6,211.2L260.0,201.8L255.3,206.7Z" fill="#482374"/><path d="M300.6,224.1L305.3,216.1L301.7,209.4L297.0,217.5Z" fill="#48186a"/><path d="M263.6,211.2L268.4,205.5L264.8,196.8L260.0,201.8Z" fill="#472d7b"/><path d="M333.6,180.9L338.4,181.5L334.8,181.3L330.0,179.9Z" fill="#365c8d"/><path d="M297.0,217.5L301.7,209.4L298.1,202.4L293.4,210.2Z" fill="#482374"/><path d="M254.2,220.8L258.9,216.3L255.3,206.7L250.6,211.2Z" fill="#481d6f"/><path d="M268.4,205.5L273.1,199.6L269.5,191.7L264.8,196.8Z" fill="#46327e"/><path d="M304.2,229.8L308.9,222.2L305.3,216.1L300.6,224.1Z" fill="#470d60"/><path d="M281.4,201.6L286.1,195.1L282.5,188.3L277.8,193.8Z" fill="#443b84"/><path d="M277.8,193.8L282.5,188.3L278.9,182.7L274.2,186.9Z" fill="#404588"/><path d="M303.1,238.7L307.8,234.4L304.2,229.8L299.5,235.5Z" fill="#440154"/><path d="M273.1,199.6L277.8,193.8L274.2,186.9L269.5,191.7Z" fill="#443b84"/><path d="M269.5,191.7L274.2,186.9L270.6,181.5L265.9,185.0Z" fill="#3e4989"/><path d="M293.4,210.2L298.1,202.4L294.5,195.5L289.8,202.6Z" fill="#472d7b"/><path d="M290.0,239.2L294.8,238.7L291.2,235.7L286.4,238.3Z" fill="#440154"/><path d="M248.4,235.4L253.1,232.7L249.5,224.7L244.8,227.9Z" fill="#46075a"/><path d="M290.9,189.1L295.6,184.0L292.0,179.9L287.3,183.6Z" fill="#3d4e8a"/><path d="M303.9,183.9L308.6,180.2L305.0,177.8L300.3,180.2Z" fill="#3a538b"/><path d="M286.1,195.1L290.9,189.1L287.3,183.6L282.5,188.3Z" fill="#404588"/><path d="M261.1,189.0L265.9,185.0L262.3,180.1L257.5,182.9Z" fill="#3d4e8a"/><path d="M289.8,202.6L294.5,195.5L290.9,189.1L286.1,195.1Z" fill="#453781"/><path d="M260.3,239.6L265.0,238.8L261.4,235.6L256.7,238.0Z" fill="#440154"/><path d="M252.0,239.7L256.7,238.0L253.1,232.7L248.4,235.4Z" fill="#440154"/><path d="M249.5,224.7L254.2,220.8L250.6,211.2L245.9,215.1Z" fill="#48186a"/><path d="M236.1,181.1L240.9,179.4L237.3,178.1L232.5,179.0Z" fill="#38588c"/><path d="M264.8,196.8L269.5,191.7L265.9,185.0L261.1,189.0Z" fill="#424086"/><path d="M307.8,234.4L312.5,227.6L308.9,222.2L304.2,229.8Z" fill="#46075a"/><path d="M252.8,186.0L257.5,182.9L253.9,178.8L249.2,180.9Z" fill="#3a538b"/><path d="M244.5,183.2L249.2,180.9L245.6,178.0L240.9,179.4Z" fill="#38588c"/><path d="M260.0,201.8L264.8,196.8L261.1,189.0L256.4,193.2Z" fill="#443b84"/><path d="M298.4,240.0L303.1,238.7L299.5,235.5L294.8,238.7Z" fill="#440154"/><path d="M294.5,195.5L299.2,189.1L295.6,184.0L290.9,189.1Z" fill="#404588"/><path d="M299.2,189.1L303.9,183.9L300.3,180.2L295.6,184.0Z" fill="#3d4e8a"/><path d="M268.7,238.4L273.4,238.8L269.8,237.2L265.0,238.8Z" fill="#440154"/><path d="M312.3,183.4L317.0,180.2L313.4,178.2L308.6,180.2Z" fill="#38588c"/><path d="M255.3,206.7L260.0,201.8L256.4,193.2L251.7,197.4Z" fill="#46327e"/><path d="M256.4,193.2L261.1,189.0L257.5,182.9L252.8,186.0Z" fill="#3e4989"/><path d="M244.8,227.9L249.5,224.7L245.9,215.1L241.1,218.5Z" fill="#471365"/><path d="M298.1,202.4L302.8,195.0L299.2,189.1L294.5,195.5Z" fill="#443b84"/><path d="M301.7,209.4L306.4,201.2L302.8,195.0L298.1,202.4Z" fill="#472d7b"/><path d="M305.3,216.1L310.0,207.5L306.4,201.2L301.7,209.4Z" fill="#482374"/><path d="M250.6,211.2L255.3,206.7L251.7,197.4L247.0,201.4Z" fill="#472d7b"/><path d="M243.6,237.5L248.4,235.4L244.8,227.9L240.0,230.5Z" fill="#440154"/><path d="M308.9,222.2L313.7,213.5L310.0,207.5L305.3,216.1Z" fill="#481d6f"/><path d="M223.1,181.5L227.8,180.2L224.2,180.0L219.5,180.8Z" fill="#365c8d"/><path d="M311.4,238.0L316.2,232.1L312.5,227.6L307.8,234.4Z" fill="#440154"/><path d="M306.7,240.8L311.4,238.0L307.8,234.4L303.1,238.7Z" fill="#440154"/><path d="M320.6,182.8L325.3,180.3L321.7,178.8L317.0,180.2Z" fill="#38588c"/><path d="M302.8,195.0L307.5,188.5L303.9,183.9L299.2,189.1Z" fill="#404588"/><path d="M307.5,188.5L312.3,183.4L308.6,180.2L303.9,183.9Z" fill="#3d4e8a"/><path d="M248.1,189.3L252.8,186.0L249.2,180.9L244.5,183.2Z" fill="#3d4e8a"/><path d="M277.0,237.3L281.7,238.8L278.1,237.9L273.4,238.8Z" fill="#46075a"/><path d="M251.7,197.4L256.4,193.2L252.8,186.0L248.1,189.3Z" fill="#424086"/><path d="M245.9,215.1L250.6,211.2L247.0,201.4L242.3,205.1Z" fill="#482878"/><path d="M247.3,241.0L252.0,239.7L248.4,235.4L243.6,237.5Z" fill="#440154"/><path d="M312.5,227.6L317.3,219.1L313.7,213.5L308.9,222.2Z" fill="#471365"/><path d="M240.0,230.5L244.8,227.9L241.1,218.5L236.4,221.2Z" fill="#470d60"/><path d="M255.6,239.9L260.3,239.6L256.7,238.0L252.0,239.7Z" fill="#440154"/><path d="M239.8,185.7L244.5,183.2L240.9,179.4L236.1,181.1Z" fill="#3a538b"/><path d="M231.4,182.9L236.1,181.1L232.5,179.0L227.8,180.2Z" fill="#38588c"/><path d="M328.9,182.3L333.6,180.9L330.0,179.9L325.3,180.3Z" fill="#365c8d"/><path d="M306.4,201.2L311.1,193.7L307.5,188.5L302.8,195.0Z" fill="#443b84"/><path d="M247.0,201.4L251.7,197.4L248.1,189.3L243.4,192.7Z" fill="#443b84"/><path d="M285.3,237.0L290.0,239.2L286.4,238.3L281.7,238.8Z" fill="#46075a"/><path d="M345.6,183.2L350.3,184.5L346.7,184.0L342.0,182.2Z" fill="#38588c"/><path d="M337.3,182.4L342.0,182.2L338.4,181.5L333.6,180.9Z" fill="#365c8d"/><path d="M241.1,218.5L245.9,215.1L242.3,205.1L237.5,208.3Z" fill="#482374"/><path d="M316.2,232.1L320.9,224.0L317.3,219.1L312.5,227.6Z" fill="#470d60"/><path d="M310.0,207.5L314.8,199.1L311.1,193.7L306.4,201.2Z" fill="#46327e"/><path d="M315.9,187.4L320.6,182.8L317.0,180.2L312.3,183.4Z" fill="#3a538b"/><path d="M238.9,239.2L243.6,237.5L240.0,230.5L235.3,232.5Z" fill="#440154"/><path d="M243.4,192.7L248.1,189.3L244.5,183.2L239.8,185.7Z" fill="#3e4989"/><path d="M293.7,238.0L298.4,240.0L294.8,238.7L290.0,239.2Z" fill="#46075a"/><path d="M311.1,193.7L315.9,187.4L312.3,183.4L307.5,188.5Z" fill="#3e4989"/><path d="M315.0,240.7L319.8,235.8L316.2,232.1L311.4,238.0Z" fill="#440154"/><path d="M313.7,213.5L318.4,204.6L314.8,199.1L310.0,207.5Z" fill="#472d7b"/><path d="M302.0,240.0L306.7,240.8L303.1,238.7L298.4,240.0Z" fill="#440154"/><path d="M242.3,205.1L247.0,201.4L243.4,192.7L238.6,195.8Z" fill="#453781"/><path d="M263.9,237.2L268.7,238.4L265.0,238.8L260.3,239.6Z" fill="#46075a"/><path d="M235.3,232.5L240.0,230.5L236.4,221.2L231.7,223.4Z" fill="#470d60"/><path d="M218.4,182.8L223.1,181.5L219.5,180.8L214.8,181.9Z" fill="#365c8d"/><path d="M242.5,242.2L247.3,241.0L243.6,237.5L238.9,239.2Z" fill="#440154"/><path d="M236.4,221.2L241.1,218.5L237.5,208.3L232.8,211.0Z" fill="#481d6f"/><path d="M235.0,188.2L239.8,185.7L236.1,181.1L231.4,182.9Z" fill="#3a538b"/><path d="M317.3,219.1L322.0,209.8L318.4,204.6L313.7,213.5Z" fill="#482374"/><path d="M310.3,242.0L315.0,240.7L311.4,238.0L306.7,240.8Z" fill="#440154"/><path d="M319.8,235.8L324.5,228.3L320.9,224.0L316.2,232.1Z" fill="#46075a"/><path d="M324.2,186.0L328.9,182.3L325.3,180.3L320.6,182.8Z" fill="#38588c"/><path d="M314.8,199.1L319.5,191.7L315.9,187.4L311.1,193.7Z" fill="#424086"/><path d="M238.6,195.8L243.4,192.7L239.8,185.7L235.0,188.2Z" fill="#404588"/><path d="M226.7,184.7L231.4,182.9L227.8,180.2L223.1,181.5Z" fill="#38588c"/><path d="M237.5,208.3L242.3,205.1L238.6,195.8L233.9,198.6Z" fill="#453781"/><path d="M250.9,240.1L255.6,239.9L252.0,239.7L247.3,241.0Z" fill="#46075a"/><path d="M319.5,191.7L324.2,186.0L320.6,182.8L315.9,187.4Z" fill="#3d4e8a"/><path d="M320.9,224.0L325.6,214.7L322.0,209.8L317.3,219.1Z" fill="#481d6f"/><path d="M234.2,240.6L238.9,239.2L235.3,232.5L230.6,234.1Z" fill="#440154"/><path d="M318.4,204.6L323.1,196.4L319.5,191.7L314.8,199.1Z" fill="#443b84"/><path d="M332.5,184.8L337.3,182.4L333.6,180.9L328.9,182.3Z" fill="#38588c"/><path d="M272.3,234.3L277.0,237.3L273.4,238.8L268.7,238.4Z" fill="#471365"/><path d="M318.7,242.8L323.4,238.9L319.8,235.8L315.0,240.7Z" fill="#440154"/><path d="M231.7,223.4L236.4,221.2L232.8,211.0L228.1,213.1Z" fill="#481d6f"/><path d="M230.6,234.1L235.3,232.5L231.7,223.4L227.0,225.0Z" fill="#470d60"/><path d="M233.9,198.6L238.6,195.8L235.0,188.2L230.3,190.5Z" fill="#404588"/><path d="M230.3,190.5L235.0,188.2L231.4,182.9L226.7,184.7Z" fill="#3d4e8a"/><path d="M323.4,238.9L328.1,231.8L324.5,228.3L319.8,235.8Z" fill="#46075a"/><path d="M340.9,184.2L345.6,183.2L342.0,182.2L337.3,182.4Z" fill="#365c8d"/><path d="M232.8,211.0L237.5,208.3L233.9,198.6L229.2,201.1Z" fill="#46327e"/><path d="M349.2,184.6L353.9,185.3L350.3,184.5L345.6,183.2Z" fill="#365c8d"/><path d="M213.6,184.1L218.4,182.8L214.8,181.9L210.0,183.0Z" fill="#365c8d"/><path d="M237.8,243.4L242.5,242.2L238.9,239.2L234.2,240.6Z" fill="#440154"/><path d="M324.5,228.3L329.2,219.0L325.6,214.7L320.9,224.0Z" fill="#48186a"/><path d="M322.0,209.8L326.7,201.0L323.1,196.4L318.4,204.6Z" fill="#46327e"/><path d="M323.1,196.4L327.8,189.6L324.2,186.0L319.5,191.7Z" fill="#3e4989"/><path d="M327.8,189.6L332.5,184.8L328.9,182.3L324.2,186.0Z" fill="#3a538b"/><path d="M222.0,186.4L226.7,184.7L223.1,181.5L218.4,182.8Z" fill="#38588c"/><path d="M280.6,232.6L285.3,237.0L281.7,238.8L277.0,237.3Z" fill="#48186a"/><path d="M259.2,235.6L263.9,237.2L260.3,239.6L255.6,239.9Z" fill="#470d60"/><path d="M313.9,242.7L318.7,242.8L315.0,240.7L310.3,242.0Z" fill="#440154"/><path d="M305.6,239.1L310.3,242.0L306.7,240.8L302.0,240.0Z" fill="#46075a"/><path d="M229.5,241.8L234.2,240.6L230.6,234.1L225.9,235.1Z" fill="#440154"/><path d="M246.2,240.6L250.9,240.1L247.3,241.0L242.5,242.2Z" fill="#46075a"/><path d="M229.2,201.1L233.9,198.6L230.3,190.5L225.6,192.6Z" fill="#424086"/><path d="M325.6,214.7L330.3,205.3L326.7,201.0L322.0,209.8Z" fill="#472d7b"/><path d="M297.3,235.5L302.0,240.0L298.4,240.0L293.7,238.0Z" fill="#471365"/><path d="M288.9,233.0L293.7,238.0L290.0,239.2L285.3,237.0Z" fill="#48186a"/><path d="M227.0,225.0L231.7,223.4L228.1,213.1L223.4,214.7Z" fill="#481d6f"/><path d="M228.1,213.1L232.8,211.0L229.2,201.1L224.5,203.1Z" fill="#46327e"/><path d="M225.6,192.6L230.3,190.5L226.7,184.7L222.0,186.4Z" fill="#3d4e8a"/><path d="M328.1,231.8L332.8,222.8L329.2,219.0L324.5,228.3Z" fill="#471365"/><path d="M326.7,201.0L331.4,193.3L327.8,189.6L323.1,196.4Z" fill="#424086"/><path d="M336.2,187.6L340.9,184.2L337.3,182.4L332.5,184.8Z" fill="#38588c"/><path d="M225.9,235.1L230.6,234.1L227.0,225.0L222.3,225.9Z" fill="#470d60"/><path d="M322.3,244.5L327.0,241.4L323.4,238.9L318.7,242.8Z" fill="#440154"/><path d="M327.0,241.4L331.7,234.8L328.1,231.8L323.4,238.9Z" fill="#440154"/><path d="M208.9,185.4L213.6,184.1L210.0,183.0L205.3,184.2Z" fill="#365c8d"/><path d="M233.1,244.7L237.8,243.4L234.2,240.6L229.5,241.8Z" fill="#440154"/><path d="M331.4,193.3L336.2,187.6L332.5,184.8L327.8,189.6Z" fill="#3d4e8a"/><path d="M217.3,187.9L222.0,186.4L218.4,182.8L213.6,184.1Z" fill="#38588c"/><path d="M329.2,219.0L333.9,209.4L330.3,205.3L325.6,214.7Z" fill="#482878"/><path d="M344.5,186.2L349.2,184.6L345.6,183.2L340.9,184.2Z" fill="#38588c"/><path d="M224.5,203.1L229.2,201.1L225.6,192.6L220.9,194.4Z" fill="#424086"/><path d="M352.8,186.1L357.5,186.3L353.9,185.3L349.2,184.6Z" fill="#365c8d"/><path d="M330.3,205.3L335.0,197.0L331.4,193.3L326.7,201.0Z" fill="#443b84"/><path d="M267.5,230.6L272.3,234.3L268.7,238.4L263.9,237.2Z" fill="#481d6f"/><path d="M223.4,214.7L228.1,213.1L224.5,203.1L219.8,204.6Z" fill="#472d7b"/><path d="M220.9,194.4L225.6,192.6L222.0,186.4L217.3,187.9Z" fill="#3d4e8a"/><path d="M331.7,234.8L336.4,225.9L332.8,222.8L328.1,231.8Z" fill="#470d60"/><path d="M241.4,241.6L246.2,240.6L242.5,242.2L237.8,243.4Z" fill="#46075a"/><path d="M222.3,225.9L227.0,225.0L223.4,214.7L218.6,215.7Z" fill="#481d6f"/><path d="M224.8,242.6L229.5,241.8L225.9,235.1L221.1,235.6Z" fill="#440154"/><path d="M317.5,243.3L322.3,244.5L318.7,242.8L313.9,242.7Z" fill="#46075a"/><path d="M254.5,234.4L259.2,235.6L255.6,239.9L250.9,240.1Z" fill="#48186a"/><path d="M332.8,222.8L337.5,213.0L333.9,209.4L329.2,219.0Z" fill="#482374"/><path d="M339.8,190.4L344.5,186.2L340.9,184.2L336.2,187.6Z" fill="#3a538b"/><path d="M330.6,243.5L335.3,237.3L331.7,234.8L327.0,241.4Z" fill="#440154"/><path d="M221.1,235.6L225.9,235.1L222.3,225.9L217.5,226.3Z" fill="#470d60"/><path d="M335.0,197.0L339.8,190.4L336.2,187.6L331.4,193.3Z" fill="#3e4989"/><path d="M204.2,186.7L208.9,185.4L205.3,184.2L200.6,185.5Z" fill="#365c8d"/><path d="M228.4,246.1L233.1,244.7L229.5,241.8L224.8,242.6Z" fill="#440154"/><path d="M325.9,246.1L330.6,243.5L327.0,241.4L322.3,244.5Z" fill="#440154"/><path d="M212.5,189.3L217.3,187.9L213.6,184.1L208.9,185.4Z" fill="#38588c"/><path d="M309.2,238.0L313.9,242.7L310.3,242.0L305.6,239.1Z" fill="#470d60"/><path d="M333.9,209.4L338.7,200.5L335.0,197.0L330.3,205.3Z" fill="#453781"/><path d="M219.8,204.6L224.5,203.1L220.9,194.4L216.1,195.8Z" fill="#424086"/><path d="M216.1,195.8L220.9,194.4L217.3,187.9L212.5,189.3Z" fill="#3d4e8a"/><path d="M218.6,215.7L223.4,214.7L219.8,204.6L215.0,205.6Z" fill="#46327e"/><path d="M348.1,188.4L352.8,186.1L349.2,184.6L344.5,186.2Z" fill="#38588c"/><path d="M275.9,226.7L280.6,232.6L277.0,237.3L272.3,234.3Z" fill="#482374"/><path d="M236.7,243.1L241.4,241.6L237.8,243.4L233.1,244.7Z" fill="#46075a"/><path d="M335.3,237.3L340.0,228.5L336.4,225.9L331.7,234.8Z" fill="#470d60"/><path d="M336.4,225.9L341.2,216.1L337.5,213.0L332.8,222.8Z" fill="#481d6f"/><path d="M300.9,232.1L305.6,239.1L302.0,240.0L297.3,235.5Z" fill="#481d6f"/><path d="M217.5,226.3L222.3,225.9L218.6,215.7L213.9,216.1Z" fill="#481d6f"/><path d="M356.4,187.8L361.2,187.5L357.5,186.3L352.8,186.1Z" fill="#365c8d"/><path d="M220.0,243.0L224.8,242.6L221.1,235.6L216.4,235.6Z" fill="#46075a"/><path d="M338.7,200.5L343.4,193.3L339.8,190.4L335.0,197.0Z" fill="#404588"/><path d="M337.5,213.0L342.3,203.7L338.7,200.5L333.9,209.4Z" fill="#453781"/><path d="M199.5,187.9L204.2,186.7L200.6,185.5L195.9,186.9Z" fill="#365c8d"/><path d="M343.4,193.3L348.1,188.4L344.5,186.2L339.8,190.4Z" fill="#3a538b"/><path d="M207.8,190.5L212.5,189.3L208.9,185.4L204.2,186.7Z" fill="#38588c"/><path d="M223.7,247.3L228.4,246.1L224.8,242.6L220.0,243.0Z" fill="#440154"/><path d="M284.2,225.6L288.9,233.0L285.3,237.0L280.6,232.6Z" fill="#482878"/><path d="M334.2,245.3L338.9,239.2L335.3,237.3L330.6,243.5Z" fill="#440154"/><path d="M292.5,227.5L297.3,235.5L293.7,238.0L288.9,233.0Z" fill="#482374"/><path d="M249.8,234.0L254.5,234.4L250.9,240.1L246.2,240.6Z" fill="#48186a"/><path d="M215.0,205.6L219.8,204.6L216.1,195.8L211.4,196.9Z" fill="#424086"/><path d="M321.2,244.1L325.9,246.1L322.3,244.5L317.5,243.3Z" fill="#46075a"/><path d="M216.4,235.6L221.1,235.6L217.5,226.3L212.8,226.1Z" fill="#471365"/><path d="M329.5,247.8L334.2,245.3L330.6,243.5L325.9,246.1Z" fill="#440154"/><path d="M211.4,196.9L216.1,195.8L212.5,189.3L207.8,190.5Z" fill="#3d4e8a"/><path d="M232.0,245.2L236.7,243.1L233.1,244.7L228.4,246.1Z" fill="#46075a"/><path d="M262.8,226.9L267.5,230.6L263.9,237.2L259.2,235.6Z" fill="#482878"/><path d="M213.9,216.1L218.6,215.7L215.0,205.6L210.3,206.2Z" fill="#46327e"/><path d="M340.0,228.5L344.8,218.6L341.2,216.1L336.4,225.9Z" fill="#481d6f"/><path d="M338.9,239.2L343.7,230.5L340.0,228.5L335.3,237.3Z" fill="#470d60"/><path d="M351.7,190.6L356.4,187.8L352.8,186.1L348.1,188.4Z" fill="#38588c"/><path d="M342.3,203.7L347.0,196.0L343.4,193.3L338.7,200.5Z" fill="#404588"/><path d="M341.2,216.1L345.9,206.6L342.3,203.7L337.5,213.0Z" fill="#46327e"/><path d="M312.8,237.2L317.5,243.3L313.9,242.7L309.2,238.0Z" fill="#48186a"/><path d="M194.8,189.1L199.5,187.9L195.9,186.9L191.1,188.5Z" fill="#365c8d"/><path d="M212.8,226.1L217.5,226.3L213.9,216.1L209.2,215.9Z" fill="#482374"/><path d="M347.0,196.0L351.7,190.6L348.1,188.4L343.4,193.3Z" fill="#3d4e8a"/><path d="M203.1,191.5L207.8,190.5L204.2,186.7L199.5,187.9Z" fill="#38588c"/><path d="M360.0,189.5L364.8,188.9L361.2,187.5L356.4,187.8Z" fill="#365c8d"/><path d="M215.3,242.9L220.0,243.0L216.4,235.6L211.7,234.9Z" fill="#46075a"/><path d="M218.9,248.2L223.7,247.3L220.0,243.0L215.3,242.9Z" fill="#440154"/><path d="M210.3,206.2L215.0,205.6L211.4,196.9L206.7,197.7Z" fill="#424086"/><path d="M227.3,247.6L232.0,245.2L228.4,246.1L223.7,247.3Z" fill="#440154"/><path d="M245.0,234.6L249.8,234.0L246.2,240.6L241.4,241.6Z" fill="#48186a"/><path d="M337.8,246.9L342.5,240.6L338.9,239.2L334.2,245.3Z" fill="#440154"/><path d="M206.7,197.7L211.4,196.9L207.8,190.5L203.1,191.5Z" fill="#3d4e8a"/><path d="M324.8,245.5L329.5,247.8L325.9,246.1L321.2,244.1Z" fill="#46075a"/><path d="M333.1,249.5L337.8,246.9L334.2,245.3L329.5,247.8Z" fill="#440154"/><path d="M211.7,234.9L216.4,235.6L212.8,226.1L208.1,225.3Z" fill="#48186a"/><path d="M345.9,206.6L350.6,198.5L347.0,196.0L342.3,203.7Z" fill="#424086"/><path d="M343.7,230.5L348.4,220.6L344.8,218.6L340.0,228.5Z" fill="#481d6f"/><path d="M344.8,218.6L349.5,209.0L345.9,206.6L341.2,216.1Z" fill="#46327e"/><path d="M209.2,215.9L213.9,216.1L210.3,206.2L205.6,206.3Z" fill="#453781"/><path d="M190.0,190.4L194.8,189.1L191.1,188.5L186.4,190.2Z" fill="#365c8d"/><path d="M355.3,192.7L360.0,189.5L356.4,187.8L351.7,190.6Z" fill="#38588c"/><path d="M304.5,228.8L309.2,238.0L305.6,239.1L300.9,232.1Z" fill="#482878"/><path d="M342.5,240.6L347.3,231.8L343.7,230.5L338.9,239.2Z" fill="#470d60"/><path d="M271.2,220.2L275.9,226.7L272.3,234.3L267.5,230.6Z" fill="#453781"/><path d="M198.4,192.3L203.1,191.5L199.5,187.9L194.8,189.1Z" fill="#38588c"/><path d="M350.6,198.5L355.3,192.7L351.7,190.6L347.0,196.0Z" fill="#3d4e8a"/><path d="M222.5,249.8L227.3,247.6L223.7,247.3L218.9,248.2Z" fill="#440154"/><path d="M240.3,236.5L245.0,234.6L241.4,241.6L236.7,243.1Z" fill="#48186a"/><path d="M363.7,191.2L368.4,190.5L364.8,188.9L360.0,189.5Z" fill="#365c8d"/><path d="M258.1,223.9L262.8,226.9L259.2,235.6L254.5,234.4Z" fill="#472d7b"/><path d="M208.1,225.3L212.8,226.1L209.2,215.9L204.5,215.3Z" fill="#482878"/><path d="M205.6,206.3L210.3,206.2L206.7,197.7L202.0,198.1Z" fill="#404588"/><path d="M214.2,248.4L218.9,248.2L215.3,242.9L210.6,242.1Z" fill="#440154"/><path d="M316.4,237.1L321.2,244.1L317.5,243.3L312.8,237.2Z" fill="#48186a"/><path d="M202.0,198.1L206.7,197.7L203.1,191.5L198.4,192.3Z" fill="#3d4e8a"/><path d="M210.6,242.1L215.3,242.9L211.7,234.9L207.0,233.6Z" fill="#470d60"/><path d="M185.3,191.8L190.0,190.4L186.4,190.2L181.7,192.1Z" fill="#365c8d"/><path d="M341.4,248.1L346.2,241.5L342.5,240.6L337.8,246.9Z" fill="#440154"/><path d="M349.5,209.0L354.2,200.7L350.6,198.5L345.9,206.6Z" fill="#424086"/><path d="M328.4,247.5L333.1,249.5L329.5,247.8L324.8,245.5Z" fill="#46075a"/><path d="M336.7,251.2L341.4,248.1L337.8,246.9L333.1,249.5Z" fill="#440154"/><path d="M296.2,221.4L300.9,232.1L297.3,235.5L292.5,227.5Z" fill="#453781"/><path d="M348.4,220.6L353.1,210.9L349.5,209.0L344.8,218.6Z" fill="#472d7b"/><path d="M347.3,231.8L352.0,222.0L348.4,220.6L343.7,230.5Z" fill="#481d6f"/><path d="M279.5,216.5L284.2,225.6L280.6,232.6L275.9,226.7Z" fill="#443b84"/><path d="M235.6,239.5L240.3,236.5L236.7,243.1L232.0,245.2Z" fill="#48186a"/><path d="M193.6,193.1L198.4,192.3L194.8,189.1L190.0,190.4Z" fill="#38588c"/><path d="M358.9,194.6L363.7,191.2L360.0,189.5L355.3,192.7Z" fill="#38588c"/><path d="M217.8,251.6L222.5,249.8L218.9,248.2L214.2,248.4Z" fill="#440154"/><path d="M207.0,233.6L211.7,234.9L208.1,225.3L203.4,223.9Z" fill="#481d6f"/><path d="M204.5,215.3L209.2,215.9L205.6,206.3L200.9,206.0Z" fill="#453781"/><path d="M354.2,200.7L358.9,194.6L355.3,192.7L350.6,198.5Z" fill="#3d4e8a"/><path d="M287.8,216.9L292.5,227.5L288.9,233.0L284.2,225.6Z" fill="#443b84"/><path d="M346.2,241.5L350.9,232.6L347.3,231.8L342.5,240.6Z" fill="#470d60"/><path d="M180.6,193.4L185.3,191.8L181.7,192.1L177.0,194.3Z" fill="#38588c"/><path d="M367.3,192.9L372.0,192.1L368.4,190.5L363.7,191.2Z" fill="#365c8d"/><path d="M230.9,243.3L235.6,239.5L232.0,245.2L227.3,247.6Z" fill="#470d60"/><path d="M200.9,206.0L205.6,206.3L202.0,198.1L197.3,198.4Z" fill="#404588"/><path d="M197.3,198.4L202.0,198.1L198.4,192.3L193.6,193.1Z" fill="#3a538b"/><path d="M353.1,210.9L357.8,202.5L354.2,200.7L349.5,209.0Z" fill="#424086"/><path d="M203.4,223.9L208.1,225.3L204.5,215.3L199.8,214.1Z" fill="#472d7b"/><path d="M209.5,247.7L214.2,248.4L210.6,242.1L205.9,240.5Z" fill="#46075a"/><path d="M332.0,249.9L336.7,251.2L333.1,249.5L328.4,247.5Z" fill="#46075a"/><path d="M320.0,238.2L324.8,245.5L321.2,244.1L316.4,237.1Z" fill="#48186a"/><path d="M253.4,222.4L258.1,223.9L254.5,234.4L249.8,234.0Z" fill="#453781"/><path d="M308.1,226.3L312.8,237.2L309.2,238.0L304.5,228.8Z" fill="#472d7b"/><path d="M188.9,193.8L193.6,193.1L190.0,190.4L185.3,191.8Z" fill="#38588c"/><path d="M226.2,247.4L230.9,243.3L227.3,247.6L222.5,249.8Z" fill="#46075a"/><path d="M340.3,252.8L345.0,248.9L341.4,248.1L336.7,251.2Z" fill="#440154"/><path d="M352.0,222.0L356.7,212.3L353.1,210.9L348.4,220.6Z" fill="#46327e"/><path d="M345.0,248.9L349.8,241.9L346.2,241.5L341.4,248.1Z" fill="#46075a"/><path d="M205.9,240.5L210.6,242.1L207.0,233.6L202.3,231.6Z" fill="#471365"/><path d="M213.1,252.5L217.8,251.6L214.2,248.4L209.5,247.7Z" fill="#440154"/><path d="M175.9,195.3L180.6,193.4L177.0,194.3L172.3,196.7Z" fill="#38588c"/><path d="M362.5,196.4L367.3,192.9L363.7,191.2L358.9,194.6Z" fill="#38588c"/><path d="M350.9,232.6L355.6,222.8L352.0,222.0L347.3,231.8Z" fill="#481d6f"/><path d="M357.8,202.5L362.5,196.4L358.9,194.6L354.2,200.7Z" fill="#3d4e8a"/><path d="M266.4,214.1L271.2,220.2L267.5,230.6L262.8,226.9Z" fill="#404588"/><path d="M199.8,214.1L204.5,215.3L200.9,206.0L196.1,205.4Z" fill="#443b84"/><path d="M221.4,251.2L226.2,247.4L222.5,249.8L217.8,251.6Z" fill="#440154"/><path d="M202.3,231.6L207.0,233.6L203.4,223.9L198.6,222.0Z" fill="#482374"/><path d="M370.9,194.5L375.6,193.8L372.0,192.1L367.3,192.9Z" fill="#365c8d"/><path d="M192.5,198.4L197.3,198.4L193.6,193.1L188.9,193.8Z" fill="#3a538b"/><path d="M349.8,241.9L354.5,232.8L350.9,232.6L346.2,241.5Z" fill="#471365"/><path d="M196.1,205.4L200.9,206.0L197.3,198.4L192.5,198.4Z" fill="#3e4989"/><path d="M171.1,197.6L175.9,195.3L172.3,196.7L167.5,199.6Z" fill="#38588c"/><path d="M184.2,194.7L188.9,193.8L185.3,191.8L180.6,193.4Z" fill="#365c8d"/><path d="M335.6,252.7L340.3,252.8L336.7,251.2L332.0,249.9Z" fill="#440154"/><path d="M356.7,212.3L361.4,204.0L357.8,202.5L353.1,210.9Z" fill="#424086"/><path d="M323.7,240.4L328.4,247.5L324.8,245.5L320.0,238.2Z" fill="#48186a"/><path d="M248.7,222.7L253.4,222.4L249.8,234.0L245.0,234.6Z" fill="#453781"/><path d="M216.7,254.1L221.4,251.2L217.8,251.6L213.1,252.5Z" fill="#440154"/><path d="M355.6,222.8L360.3,213.3L356.7,212.3L352.0,222.0Z" fill="#46327e"/><path d="M198.6,222.0L203.4,223.9L199.8,214.1L195.0,212.7Z" fill="#46327e"/><path d="M343.9,254.1L348.7,249.2L345.0,248.9L340.3,252.8Z" fill="#440154"/><path d="M366.2,198.0L370.9,194.5L367.3,192.9L362.5,196.4Z" fill="#38588c"/><path d="M166.4,200.3L171.1,197.6L167.5,199.6L162.8,202.8Z" fill="#3a538b"/><path d="M204.8,246.1L209.5,247.7L205.9,240.5L201.2,238.1Z" fill="#470d60"/><path d="M208.4,252.1L213.1,252.5L209.5,247.7L204.8,246.1Z" fill="#440154"/><path d="M361.4,204.0L366.2,198.0L362.5,196.4L357.8,202.5Z" fill="#3d4e8a"/><path d="M299.8,215.7L304.5,228.8L300.9,232.1L296.2,221.4Z" fill="#404588"/><path d="M348.7,249.2L353.4,241.6L349.8,241.9L345.0,248.9Z" fill="#46075a"/><path d="M354.5,232.8L359.2,223.0L355.6,222.8L350.9,232.6Z" fill="#482374"/><path d="M187.8,198.5L192.5,198.4L188.9,193.8L184.2,194.7Z" fill="#38588c"/><path d="M179.5,195.9L184.2,194.7L180.6,193.4L175.9,195.3Z" fill="#365c8d"/><path d="M201.2,238.1L205.9,240.5L202.3,231.6L197.5,229.0Z" fill="#481d6f"/><path d="M311.7,225.1L316.4,237.1L312.8,237.2L308.1,226.3Z" fill="#453781"/><path d="M374.5,196.1L379.2,195.6L375.6,193.8L370.9,194.5Z" fill="#365c8d"/><path d="M161.7,203.5L166.4,200.3L162.8,202.8L158.1,206.3Z" fill="#3d4e8a"/><path d="M195.0,212.7L199.8,214.1L196.1,205.4L191.4,204.6Z" fill="#424086"/><path d="M339.2,255.3L343.9,254.1L340.3,252.8L335.6,252.7Z" fill="#440154"/><path d="M274.8,207.1L279.5,216.5L275.9,226.7L271.2,220.2Z" fill="#3a538b"/><path d="M327.3,243.8L332.0,249.9L328.4,247.5L323.7,240.4Z" fill="#48186a"/><path d="M243.9,224.9L248.7,222.7L245.0,234.6L240.3,236.5Z" fill="#453781"/><path d="M212.0,255.7L216.7,254.1L213.1,252.5L208.4,252.1Z" fill="#440154"/><path d="M191.4,204.6L196.1,205.4L192.5,198.4L187.8,198.5Z" fill="#3d4e8a"/><path d="M157.0,207.1L161.7,203.5L158.1,206.3L153.4,210.2Z" fill="#3d4e8a"/><path d="M360.3,213.3L365.0,205.2L361.4,204.0L356.7,212.3Z" fill="#424086"/><path d="M353.4,241.6L358.1,232.4L354.5,232.8L349.8,241.9Z" fill="#48186a"/><path d="M197.5,229.0L202.3,231.6L198.6,222.0L193.9,219.7Z" fill="#472d7b"/><path d="M152.3,211.1L157.0,207.1L153.4,210.2L148.6,214.3Z" fill="#404588"/><path d="M291.4,207.9L296.2,221.4L292.5,227.5L287.8,216.9Z" fill="#3a538b"/><path d="M174.8,197.3L179.5,195.9L175.9,195.3L171.1,197.6Z" fill="#365c8d"/><path d="M369.8,199.3L374.5,196.1L370.9,194.5L366.2,198.0Z" fill="#38588c"/><path d="M239.2,229.0L243.9,224.9L240.3,236.5L235.6,239.5Z" fill="#472d7b"/><path d="M261.7,209.3L266.4,214.1L262.8,226.9L258.1,223.9Z" fill="#3d4e8a"/><path d="M365.0,205.2L369.8,199.3L366.2,198.0L361.4,204.0Z" fill="#3d4e8a"/><path d="M147.5,215.5L152.3,211.1L148.6,214.3L143.9,218.4Z" fill="#424086"/><path d="M359.2,223.0L363.9,213.8L360.3,213.3L355.6,222.8Z" fill="#453781"/><path d="M283.1,204.8L287.8,216.9L284.2,225.6L279.5,216.5Z" fill="#38588c"/><path d="M330.9,248.0L335.6,252.7L332.0,249.9L327.3,243.8Z" fill="#470d60"/><path d="M234.5,234.5L239.2,229.0L235.6,239.5L230.9,243.3Z" fill="#482878"/><path d="M347.6,254.7L352.3,248.8L348.7,249.2L343.9,254.1Z" fill="#440154"/><path d="M183.1,198.7L187.8,198.5L184.2,194.7L179.5,195.9Z" fill="#38588c"/><path d="M229.8,240.8L234.5,234.5L230.9,243.3L226.2,247.4Z" fill="#481d6f"/><path d="M225.0,247.0L229.8,240.8L226.2,247.4L221.4,251.2Z" fill="#471365"/><path d="M142.8,220.0L147.5,215.5L143.9,218.4L139.2,222.6Z" fill="#443b84"/><path d="M193.9,219.7L198.6,222.0L195.0,212.7L190.3,211.0Z" fill="#443b84"/><path d="M220.3,252.5L225.0,247.0L221.4,251.2L216.7,254.1Z" fill="#46075a"/><path d="M378.1,197.8L382.8,197.5L379.2,195.6L374.5,196.1Z" fill="#365c8d"/><path d="M203.7,250.4L208.4,252.1L204.8,246.1L200.0,243.3Z" fill="#470d60"/><path d="M138.1,224.5L142.8,220.0L139.2,222.6L134.5,226.5Z" fill="#453781"/><path d="M342.8,257.5L347.6,254.7L343.9,254.1L339.2,255.3Z" fill="#440154"/><path d="M200.0,243.3L204.8,246.1L201.2,238.1L196.4,234.9Z" fill="#48186a"/><path d="M352.3,248.8L357.0,240.7L353.4,241.6L348.7,249.2Z" fill="#470d60"/><path d="M170.0,199.3L174.8,197.3L171.1,197.6L166.4,200.3Z" fill="#38588c"/><path d="M358.1,232.4L362.8,222.7L359.2,223.0L354.5,232.8Z" fill="#482878"/><path d="M207.3,255.7L212.0,255.7L208.4,252.1L203.7,250.4Z" fill="#440154"/><path d="M315.3,225.8L320.0,238.2L316.4,237.1L311.7,225.1Z" fill="#453781"/><path d="M186.7,203.9L191.4,204.6L187.8,198.5L183.1,198.7Z" fill="#3a538b"/><path d="M133.4,228.7L138.1,224.5L134.5,226.5L129.8,230.0Z" fill="#472d7b"/><path d="M215.6,256.6L220.3,252.5L216.7,254.1L212.0,255.7Z" fill="#440154"/><path d="M190.3,211.0L195.0,212.7L191.4,204.6L186.7,203.9Z" fill="#3e4989"/><path d="M334.5,252.5L339.2,255.3L335.6,252.7L330.9,248.0Z" fill="#46075a"/><path d="M363.9,213.8L368.7,206.0L365.0,205.2L360.3,213.3Z" fill="#404588"/><path d="M196.4,234.9L201.2,238.1L197.5,229.0L192.8,225.9Z" fill="#482374"/><path d="M128.6,232.5L133.4,228.7L129.8,230.0L125.0,232.8Z" fill="#482878"/><path d="M373.4,200.6L378.1,197.8L374.5,196.1L369.8,199.3Z" fill="#38588c"/><path d="M178.4,199.2L183.1,198.7L179.5,195.9L174.8,197.3Z" fill="#365c8d"/><path d="M165.3,201.7L170.0,199.3L166.4,200.3L161.7,203.5Z" fill="#38588c"/><path d="M368.7,206.0L373.4,200.6L369.8,199.3L365.0,205.2Z" fill="#3d4e8a"/><path d="M303.4,211.2L308.1,226.3L304.5,228.8L299.8,215.7Z" fill="#3d4e8a"/><path d="M357.0,240.7L361.7,231.4L358.1,232.4L353.4,241.6Z" fill="#481d6f"/><path d="M210.9,258.7L215.6,256.6L212.0,255.7L207.3,255.7Z" fill="#440154"/><path d="M381.7,199.4L386.4,199.6L382.8,197.5L378.1,197.8Z" fill="#365c8d"/><path d="M192.8,225.9L197.5,229.0L193.9,219.7L189.2,217.1Z" fill="#46327e"/><path d="M123.9,235.6L128.6,232.5L125.0,232.8L120.3,235.0Z" fill="#482878"/><path d="M362.8,222.7L367.6,213.9L363.9,213.8L359.2,223.0Z" fill="#453781"/><path d="M338.1,256.7L342.8,257.5L339.2,255.3L334.5,252.5Z" fill="#440154"/><path d="M160.6,204.8L165.3,201.7L161.7,203.5L157.0,207.1Z" fill="#3a538b"/><path d="M351.2,254.4L355.9,247.6L352.3,248.8L347.6,254.7Z" fill="#46075a"/><path d="M318.9,228.5L323.7,240.4L320.0,238.2L315.3,225.8Z" fill="#453781"/><path d="M346.4,258.8L351.2,254.4L347.6,254.7L342.8,257.5Z" fill="#440154"/><path d="M257.0,206.5L261.7,209.3L258.1,223.9L253.4,222.4Z" fill="#38588c"/><path d="M182.0,203.2L186.7,203.9L183.1,198.7L178.4,199.2Z" fill="#38588c"/><path d="M189.2,217.1L193.9,219.7L190.3,211.0L185.6,209.4Z" fill="#424086"/><path d="M155.9,208.4L160.6,204.8L157.0,207.1L152.3,211.1Z" fill="#3d4e8a"/><path d="M173.6,200.1L178.4,199.2L174.8,197.3L170.0,199.3Z" fill="#365c8d"/><path d="M185.6,209.4L190.3,211.0L186.7,203.9L182.0,203.2Z" fill="#3d4e8a"/><path d="M198.9,247.4L203.7,250.4L200.0,243.3L195.3,239.6Z" fill="#471365"/><path d="M202.5,253.8L207.3,255.7L203.7,250.4L198.9,247.4Z" fill="#46075a"/><path d="M119.2,237.9L123.9,235.6L120.3,235.0L115.6,236.3Z" fill="#482374"/><path d="M151.1,212.6L155.9,208.4L152.3,211.1L147.5,215.5Z" fill="#3e4989"/><path d="M355.9,247.6L360.6,239.1L357.0,240.7L352.3,248.8Z" fill="#471365"/><path d="M361.7,231.4L366.4,222.0L362.8,222.7L358.1,232.4Z" fill="#472d7b"/><path d="M270.0,198.4L274.8,207.1L271.2,220.2L266.4,214.1Z" fill="#32648e"/><path d="M377.0,201.7L381.7,199.4L378.1,197.8L373.4,200.6Z" fill="#38588c"/><path d="M367.6,213.9L372.3,206.6L368.7,206.0L363.9,213.8Z" fill="#404588"/><path d="M146.4,217.2L151.1,212.6L147.5,215.5L142.8,220.0Z" fill="#404588"/><path d="M195.3,239.6L200.0,243.3L196.4,234.9L191.7,231.2Z" fill="#482374"/><path d="M385.3,201.2L390.0,201.9L386.4,199.6L381.7,199.4Z" fill="#365c8d"/><path d="M141.7,222.0L146.4,217.2L142.8,220.0L138.1,224.5Z" fill="#443b84"/><path d="M341.7,260.0L346.4,258.8L342.8,257.5L338.1,256.7Z" fill="#440154"/><path d="M206.2,258.6L210.9,258.7L207.3,255.7L202.5,253.8Z" fill="#440154"/><path d="M322.5,233.0L327.3,243.8L323.7,240.4L318.9,228.5Z" fill="#472d7b"/><path d="M372.3,206.6L377.0,201.7L373.4,200.6L368.7,206.0Z" fill="#3a538b"/><path d="M219.2,254.9L223.9,247.9L220.3,252.5L215.6,256.6Z" fill="#46075a"/><path d="M137.0,226.8L141.7,222.0L138.1,224.5L133.4,228.7Z" fill="#453781"/><path d="M214.5,259.6L219.2,254.9L215.6,256.6L210.9,258.7Z" fill="#440154"/><path d="M132.3,231.3L137.0,226.8L133.4,228.7L128.6,232.5Z" fill="#472d7b"/><path d="M168.9,201.6L173.6,200.1L170.0,199.3L165.3,201.7Z" fill="#365c8d"/><path d="M223.9,247.9L228.7,239.5L225.0,247.0L220.3,252.5Z" fill="#48186a"/><path d="M191.7,231.2L196.4,234.9L192.8,225.9L188.1,222.6Z" fill="#472d7b"/><path d="M177.3,203.0L182.0,203.2L178.4,199.2L173.6,200.1Z" fill="#38588c"/><path d="M114.5,239.2L119.2,237.9L115.6,236.3L110.9,236.7Z" fill="#482374"/><path d="M295.0,199.6L299.8,215.7L296.2,221.4L291.4,207.9Z" fill="#32648e"/><path d="M326.2,238.8L330.9,248.0L327.3,243.8L322.5,233.0Z" fill="#482878"/><path d="M127.5,235.3L132.3,231.3L128.6,232.5L123.9,235.6Z" fill="#482878"/><path d="M360.6,239.1L365.3,229.9L361.7,231.4L357.0,240.7Z" fill="#482374"/><path d="M366.4,222.0L371.2,213.7L367.6,213.9L362.8,222.7Z" fill="#443b84"/><path d="M252.3,206.4L257.0,206.5L253.4,222.4L248.7,222.7Z" fill="#38588c"/><path d="M188.1,222.6L192.8,225.9L189.2,217.1L184.5,214.6Z" fill="#443b84"/><path d="M350.1,258.8L354.8,253.2L351.2,254.4L346.4,258.8Z" fill="#440154"/><path d="M228.7,239.5L233.4,230.4L229.8,240.8L225.0,247.0Z" fill="#482374"/><path d="M329.8,245.5L334.5,252.5L330.9,248.0L326.2,238.8Z" fill="#481d6f"/><path d="M307.0,208.9L311.7,225.1L308.1,226.3L303.4,211.2Z" fill="#38588c"/><path d="M209.8,261.6L214.5,259.6L210.9,258.7L206.2,258.6Z" fill="#440154"/><path d="M164.2,203.7L168.9,201.6L165.3,201.7L160.6,204.8Z" fill="#38588c"/><path d="M380.6,202.9L385.3,201.2L381.7,199.4L377.0,201.7Z" fill="#38588c"/><path d="M180.9,207.9L185.6,209.4L182.0,203.2L177.3,203.0Z" fill="#3a538b"/><path d="M388.9,203.3L393.7,204.5L390.0,201.9L385.3,201.2Z" fill="#38588c"/><path d="M122.8,238.6L127.5,235.3L123.9,235.6L119.2,237.9Z" fill="#482878"/><path d="M354.8,253.2L359.5,245.6L355.9,247.6L351.2,254.4Z" fill="#470d60"/><path d="M184.5,214.6L189.2,217.1L185.6,209.4L180.9,207.9Z" fill="#3e4989"/><path d="M333.4,252.1L338.1,256.7L334.5,252.5L329.8,245.5Z" fill="#471365"/><path d="M345.3,262.0L350.1,258.8L346.4,258.8L341.7,260.0Z" fill="#440154"/><path d="M278.4,192.4L283.1,204.8L279.5,216.5L274.8,207.1Z" fill="#2f6c8e"/><path d="M371.2,213.7L375.9,207.1L372.3,206.6L367.6,213.9Z" fill="#3e4989"/><path d="M375.9,207.1L380.6,202.9L377.0,201.7L372.3,206.6Z" fill="#3a538b"/><path d="M233.4,230.4L238.1,221.7L234.5,234.5L229.8,240.8Z" fill="#453781"/><path d="M159.5,206.7L164.2,203.7L160.6,204.8L155.9,208.4Z" fill="#38588c"/><path d="M286.7,192.8L291.4,207.9L287.8,216.9L283.1,204.8Z" fill="#2f6c8e"/><path d="M365.3,229.9L370.1,221.0L366.4,222.0L361.7,231.4Z" fill="#46327e"/><path d="M337.0,258.1L341.7,260.0L338.1,256.7L333.4,252.1Z" fill="#46075a"/><path d="M197.8,250.3L202.5,253.8L198.9,247.4L194.2,243.2Z" fill="#471365"/><path d="M172.5,203.3L177.3,203.0L173.6,200.1L168.9,201.6Z" fill="#365c8d"/><path d="M247.5,209.1L252.3,206.4L248.7,222.7L243.9,224.9Z" fill="#38588c"/><path d="M201.4,256.3L206.2,258.6L202.5,253.8L197.8,250.3Z" fill="#470d60"/><path d="M118.1,240.9L122.8,238.6L119.2,237.9L114.5,239.2Z" fill="#482374"/><path d="M194.2,243.2L198.9,247.4L195.3,239.6L190.6,235.3Z" fill="#481d6f"/><path d="M359.5,245.6L364.2,236.9L360.6,239.1L355.9,247.6Z" fill="#481d6f"/><path d="M154.8,210.3L159.5,206.7L155.9,208.4L151.1,212.6Z" fill="#3a538b"/><path d="M238.1,221.7L242.8,214.4L239.2,229.0L234.5,234.5Z" fill="#404588"/><path d="M242.8,214.4L247.5,209.1L243.9,224.9L239.2,229.0Z" fill="#3d4e8a"/><path d="M392.6,205.6L397.3,207.4L393.7,204.5L388.9,203.3Z" fill="#38588c"/><path d="M190.6,235.3L195.3,239.6L191.7,231.2L187.0,227.1Z" fill="#472d7b"/><path d="M150.0,214.6L154.8,210.3L151.1,212.6L146.4,217.2Z" fill="#3e4989"/><path d="M218.1,258.4L222.8,250.9L219.2,254.9L214.5,259.6Z" fill="#46075a"/><path d="M145.3,219.4L150.0,214.6L146.4,217.2L141.7,222.0Z" fill="#404588"/><path d="M205.0,261.0L209.8,261.6L206.2,258.6L201.4,256.3Z" fill="#440154"/><path d="M384.2,204.2L388.9,203.3L385.3,201.2L380.6,202.9Z" fill="#365c8d"/><path d="M340.6,262.5L345.3,262.0L341.7,260.0L337.0,258.1Z" fill="#440154"/><path d="M140.6,224.5L145.3,219.4L141.7,222.0L137.0,226.8Z" fill="#443b84"/><path d="M213.4,262.9L218.1,258.4L214.5,259.6L209.8,261.6Z" fill="#440154"/><path d="M135.9,229.5L140.6,224.5L137.0,226.8L132.3,231.3Z" fill="#453781"/><path d="M176.1,206.9L180.9,207.9L177.3,203.0L172.5,203.3Z" fill="#38588c"/><path d="M370.1,221.0L374.8,213.3L371.2,213.7L366.4,222.0Z" fill="#424086"/><path d="M131.1,234.3L135.9,229.5L132.3,231.3L127.5,235.3Z" fill="#472d7b"/><path d="M187.0,227.1L191.7,231.2L188.1,222.6L183.4,219.3Z" fill="#443b84"/><path d="M167.8,204.3L172.5,203.3L168.9,201.6L164.2,203.7Z" fill="#365c8d"/><path d="M265.3,191.6L270.0,198.4L266.4,214.1L261.7,209.3Z" fill="#2d708e"/><path d="M364.2,236.9L368.9,228.0L365.3,229.9L360.6,239.1Z" fill="#472d7b"/><path d="M310.6,209.2L315.3,225.8L311.7,225.1L307.0,208.9Z" fill="#38588c"/><path d="M126.4,238.4L131.1,234.3L127.5,235.3L122.8,238.6Z" fill="#482878"/><path d="M222.8,250.9L227.5,240.9L223.9,247.9L219.2,254.9Z" fill="#48186a"/><path d="M353.7,257.5L358.4,250.8L354.8,253.2L350.1,258.8Z" fill="#470d60"/><path d="M348.9,262.4L353.7,257.5L350.1,258.8L345.3,262.0Z" fill="#440154"/><path d="M183.4,219.3L188.1,222.6L184.5,214.6L179.8,212.4Z" fill="#404588"/><path d="M179.8,212.4L184.5,214.6L180.9,207.9L176.1,206.9Z" fill="#3d4e8a"/><path d="M379.5,207.6L384.2,204.2L380.6,202.9L375.9,207.1Z" fill="#38588c"/><path d="M374.8,213.3L379.5,207.6L375.9,207.1L371.2,213.7Z" fill="#3d4e8a"/><path d="M396.2,208.2L400.9,210.6L397.3,207.4L392.6,205.6Z" fill="#38588c"/><path d="M208.7,264.2L213.4,262.9L209.8,261.6L205.0,261.0Z" fill="#440154"/><path d="M121.7,241.7L126.4,238.4L122.8,238.6L118.1,240.9Z" fill="#482878"/><path d="M358.4,250.8L363.1,242.8L359.5,245.6L354.8,253.2Z" fill="#48186a"/><path d="M163.1,206.2L167.8,204.3L164.2,203.7L159.5,206.7Z" fill="#38588c"/><path d="M344.2,265.0L348.9,262.4L345.3,262.0L340.6,262.5Z" fill="#440154"/><path d="M387.8,205.7L392.6,205.6L388.9,203.3L384.2,204.2Z" fill="#365c8d"/><path d="M368.9,228.0L373.7,219.7L370.1,221.0L365.3,229.9Z" fill="#443b84"/><path d="M171.4,206.6L176.1,206.9L172.5,203.3L167.8,204.3Z" fill="#38588c"/><path d="M298.7,193.2L303.4,211.2L299.8,215.7L295.0,199.6Z" fill="#2d708e"/><path d="M227.5,240.9L232.3,229.3L228.7,239.5L223.9,247.9Z" fill="#482878"/><path d="M158.4,209.0L163.1,206.2L159.5,206.7L154.8,210.3Z" fill="#38588c"/><path d="M196.7,252.2L201.4,256.3L197.8,250.3L193.1,245.5Z" fill="#48186a"/><path d="M399.8,211.3L404.5,214.2L400.9,210.6L396.2,208.2Z" fill="#3a538b"/><path d="M193.1,245.5L197.8,250.3L194.2,243.2L189.5,238.2Z" fill="#482374"/><path d="M314.2,212.2L318.9,228.5L315.3,225.8L310.6,209.2Z" fill="#38588c"/><path d="M363.1,242.8L367.8,234.2L364.2,236.9L359.5,245.6Z" fill="#482374"/><path d="M332.3,253.1L337.0,258.1L333.4,252.1L328.7,244.2Z" fill="#48186a"/><path d="M335.9,260.4L340.6,262.5L337.0,258.1L332.3,253.1Z" fill="#46075a"/><path d="M217.0,262.9L221.7,255.9L218.1,258.4L213.4,262.9Z" fill="#440154"/><path d="M189.5,238.2L194.2,243.2L190.6,235.3L185.9,230.6Z" fill="#472d7b"/><path d="M200.3,257.8L205.0,261.0L201.4,256.3L196.7,252.2Z" fill="#470d60"/><path d="M153.6,212.6L158.4,209.0L154.8,210.3L150.0,214.6Z" fill="#3a538b"/><path d="M373.7,219.7L378.4,212.9L374.8,213.3L370.1,221.0Z" fill="#3e4989"/><path d="M383.1,208.2L387.8,205.7L384.2,204.2L379.5,207.6Z" fill="#38588c"/><path d="M328.7,244.2L333.4,252.1L329.8,245.5L325.1,234.8Z" fill="#482374"/><path d="M212.3,266.3L217.0,262.9L213.4,262.9L208.7,264.2Z" fill="#440154"/><path d="M175.0,210.7L179.8,212.4L176.1,206.9L171.4,206.6Z" fill="#3a538b"/><path d="M185.9,230.6L190.6,235.3L187.0,227.1L182.3,223.1Z" fill="#453781"/><path d="M148.9,217.1L153.6,212.6L150.0,214.6L145.3,219.4Z" fill="#3d4e8a"/><path d="M339.5,265.5L344.2,265.0L340.6,262.5L335.9,260.4Z" fill="#440154"/><path d="M139.5,227.4L144.2,222.1L140.6,224.5L135.9,229.5Z" fill="#443b84"/><path d="M144.2,222.1L148.9,217.1L145.3,219.4L140.6,224.5Z" fill="#404588"/><path d="M134.8,232.7L139.5,227.4L135.9,229.5L131.1,234.3Z" fill="#453781"/><path d="M378.4,212.9L383.1,208.2L379.5,207.6L374.8,213.3Z" fill="#3a538b"/><path d="M391.4,207.6L396.2,208.2L392.6,205.6L387.8,205.7Z" fill="#365c8d"/><path d="M317.8,217.9L322.5,233.0L318.9,228.5L314.2,212.2Z" fill="#3d4e8a"/><path d="M130.0,237.6L134.8,232.7L131.1,234.3L126.4,238.4Z" fill="#472d7b"/><path d="M325.1,234.8L329.8,245.5L326.2,238.8L321.4,225.7Z" fill="#453781"/><path d="M182.3,223.1L187.0,227.1L183.4,219.3L178.7,216.4Z" fill="#404588"/><path d="M178.7,216.4L183.4,219.3L179.8,212.4L175.0,210.7Z" fill="#3d4e8a"/><path d="M203.9,262.4L208.7,264.2L205.0,261.0L200.3,257.8Z" fill="#46075a"/><path d="M221.7,255.9L226.4,245.4L222.8,250.9L218.1,258.4Z" fill="#471365"/><path d="M403.4,214.9L408.1,218.1L404.5,214.2L399.8,211.3Z" fill="#3d4e8a"/><path d="M352.6,260.9L357.3,254.9L353.7,257.5L348.9,262.4Z" fill="#46075a"/><path d="M166.7,207.2L171.4,206.6L167.8,204.3L163.1,206.2Z" fill="#365c8d"/><path d="M321.4,225.7L326.2,238.8L322.5,233.0L317.8,217.9Z" fill="#404588"/><path d="M125.3,241.7L130.0,237.6L126.4,238.4L121.7,241.7Z" fill="#482878"/><path d="M367.8,234.2L372.6,225.8L368.9,228.0L364.2,236.9Z" fill="#46327e"/><path d="M347.8,265.3L352.6,260.9L348.9,262.4L344.2,265.0Z" fill="#440154"/><path d="M260.6,187.6L265.3,191.6L261.7,209.3L257.0,206.5Z" fill="#2a778e"/><path d="M357.3,254.9L362.0,247.5L358.4,250.8L353.7,257.5Z" fill="#471365"/><path d="M232.3,229.3L237.0,217.3L233.4,230.4L228.7,239.5Z" fill="#443b84"/><path d="M273.7,181.1L278.4,192.4L274.8,207.1L270.0,198.4Z" fill="#277f8e"/><path d="M407.0,218.9L411.7,222.4L408.1,218.1L403.4,214.9Z" fill="#3d4e8a"/><path d="M207.5,266.0L212.3,266.3L208.7,264.2L203.9,262.4Z" fill="#440154"/><path d="M343.1,267.9L347.8,265.3L344.2,265.0L339.5,265.5Z" fill="#440154"/><path d="M162.0,208.9L166.7,207.2L163.1,206.2L158.4,209.0Z" fill="#365c8d"/><path d="M362.0,247.5L366.7,239.4L363.1,242.8L358.4,250.8Z" fill="#482374"/><path d="M395.1,209.9L399.8,211.3L396.2,208.2L391.4,207.6Z" fill="#38588c"/><path d="M372.6,225.8L377.3,218.4L373.7,219.7L368.9,228.0Z" fill="#424086"/><path d="M386.7,209.0L391.4,207.6L387.8,205.7L383.1,208.2Z" fill="#365c8d"/><path d="M290.3,181.9L295.0,199.6L291.4,207.9L286.7,192.8Z" fill="#277f8e"/><path d="M170.3,209.9L175.0,210.7L171.4,206.6L166.7,207.2Z" fill="#38588c"/><path d="M215.9,267.5L220.6,262.1L217.0,262.9L212.3,266.3Z" fill="#440154"/><path d="M410.6,223.4L415.3,226.9L411.7,222.4L407.0,218.9Z" fill="#404588"/><path d="M226.4,245.4L231.2,232.2L227.5,240.9L222.8,250.9Z" fill="#482374"/><path d="M377.3,218.4L382.0,212.7L378.4,212.9L373.7,219.7Z" fill="#3d4e8a"/><path d="M382.0,212.7L386.7,209.0L383.1,208.2L378.4,212.9Z" fill="#38588c"/><path d="M282.0,177.6L286.7,192.8L283.1,204.8L278.4,192.4Z" fill="#24868e"/><path d="M220.6,262.1L225.3,252.5L221.7,255.9L217.0,262.9Z" fill="#46075a"/><path d="M157.3,211.6L162.0,208.9L158.4,209.0L153.6,212.6Z" fill="#38588c"/><path d="M334.8,263.9L339.5,265.5L335.9,260.4L331.2,256.0Z" fill="#46075a"/><path d="M237.0,217.3L241.7,206.0L238.1,221.7L233.4,230.4Z" fill="#3a538b"/><path d="M366.7,239.4L371.4,231.2L367.8,234.2L363.1,242.8Z" fill="#472d7b"/><path d="M173.9,214.2L178.7,216.4L175.0,210.7L170.3,209.9Z" fill="#3a538b"/><path d="M192.0,246.7L196.7,252.2L193.1,245.5L188.4,240.0Z" fill="#482374"/><path d="M302.3,189.6L307.0,208.9L303.4,211.2L298.7,193.2Z" fill="#2a778e"/><path d="M414.2,228.1L418.9,231.4L415.3,226.9L410.6,223.4Z" fill="#424086"/><path d="M188.4,240.0L193.1,245.5L189.5,238.2L184.8,233.0Z" fill="#472d7b"/><path d="M331.2,256.0L335.9,260.4L332.3,253.1L327.6,245.6Z" fill="#48186a"/><path d="M195.6,252.8L200.3,257.8L196.7,252.2L192.0,246.7Z" fill="#481d6f"/><path d="M211.2,268.7L215.9,267.5L212.3,266.3L207.5,266.0Z" fill="#440154"/><path d="M152.5,215.4L157.3,211.6L153.6,212.6L148.9,217.1Z" fill="#3a538b"/><path d="M398.7,212.8L403.4,214.9L399.8,211.3L395.1,209.9Z" fill="#38588c"/><path d="M184.8,233.0L189.5,238.2L185.9,230.6L181.2,226.1Z" fill="#443b84"/><path d="M133.7,236.3L138.4,230.8L134.8,232.7L130.0,237.6Z" fill="#453781"/><path d="M338.4,268.9L343.1,267.9L339.5,265.5L334.8,263.9Z" fill="#440154"/><path d="M138.4,230.8L143.1,225.3L139.5,227.4L134.8,232.7Z" fill="#443b84"/><path d="M177.5,219.7L182.3,223.1L178.7,216.4L173.9,214.2Z" fill="#3d4e8a"/><path d="M128.9,241.2L133.7,236.3L130.0,237.6L125.3,241.7Z" fill="#472d7b"/><path d="M255.9,187.1L260.6,187.6L257.0,206.5L252.3,206.4Z" fill="#297b8e"/><path d="M147.8,220.0L152.5,215.4L148.9,217.1L144.2,222.1Z" fill="#3d4e8a"/><path d="M181.2,226.1L185.9,230.6L182.3,223.1L177.5,219.7Z" fill="#404588"/><path d="M143.1,225.3L147.8,220.0L144.2,222.1L139.5,227.4Z" fill="#404588"/><path d="M199.2,258.2L203.9,262.4L200.3,257.8L195.6,252.8Z" fill="#471365"/><path d="M390.3,210.3L395.1,209.9L391.4,207.6L386.7,209.0Z" fill="#365c8d"/><path d="M351.4,263.4L356.2,257.8L352.6,260.9L347.8,265.3Z" fill="#470d60"/><path d="M165.6,210.2L170.3,209.9L166.7,207.2L162.0,208.9Z" fill="#365c8d"/><path d="M417.8,233.0L422.6,236.0L418.9,231.4L414.2,228.1Z" fill="#443b84"/><path d="M356.2,257.8L360.9,251.1L357.3,254.9L352.6,260.9Z" fill="#471365"/><path d="M371.4,231.2L376.2,223.7L372.6,225.8L367.8,234.2Z" fill="#443b84"/><path d="M346.7,267.7L351.4,263.4L347.8,265.3L343.1,267.9Z" fill="#440154"/><path d="M327.6,245.6L332.3,253.1L328.7,244.2L323.9,233.6Z" fill="#482878"/><path d="M241.7,206.0L246.4,196.7L242.8,214.4L238.1,221.7Z" fill="#32648e"/><path d="M402.3,216.2L407.0,218.9L403.4,214.9L398.7,212.8Z" fill="#3a538b"/><path d="M202.8,262.7L207.5,266.0L203.9,262.4L199.2,258.2Z" fill="#470d60"/><path d="M225.3,252.5L230.0,239.3L226.4,245.4L221.7,255.9Z" fill="#481d6f"/><path d="M421.4,237.9L426.2,240.3L422.6,236.0L417.8,233.0Z" fill="#453781"/><path d="M360.9,251.1L365.6,243.5L362.0,247.5L357.3,254.9Z" fill="#481d6f"/><path d="M219.5,268.1L224.2,260.9L220.6,262.1L215.9,267.5Z" fill="#440154"/><path d="M251.2,190.2L255.9,187.1L252.3,206.4L247.5,209.1Z" fill="#2a778e"/><path d="M385.6,212.8L390.3,210.3L386.7,209.0L382.0,212.7Z" fill="#38588c"/><path d="M376.2,223.7L380.9,217.4L377.3,218.4L372.6,225.8Z" fill="#3e4989"/><path d="M342.0,270.5L346.7,267.7L343.1,267.9L338.4,268.9Z" fill="#440154"/><path d="M231.2,232.2L235.9,217.5L232.3,229.3L227.5,240.9Z" fill="#443b84"/><path d="M214.8,270.8L219.5,268.1L215.9,267.5L211.2,268.7Z" fill="#440154"/><path d="M160.9,211.8L165.6,210.2L162.0,208.9L157.3,211.6Z" fill="#365c8d"/><path d="M246.4,196.7L251.2,190.2L247.5,209.1L242.8,214.4Z" fill="#2d708e"/><path d="M169.2,213.0L173.9,214.2L170.3,209.9L165.6,210.2Z" fill="#38588c"/><path d="M380.9,217.4L385.6,212.8L382.0,212.7L377.3,218.4Z" fill="#3a538b"/><path d="M405.9,220.3L410.6,223.4L407.0,218.9L402.3,216.2Z" fill="#3d4e8a"/><path d="M425.1,242.5L429.8,244.1L426.2,240.3L421.4,237.9Z" fill="#472d7b"/><path d="M393.9,212.2L398.7,212.8L395.1,209.9L390.3,210.3Z" fill="#365c8d"/><path d="M206.4,266.4L211.2,268.7L207.5,266.0L202.8,262.7Z" fill="#46075a"/><path d="M365.6,243.5L370.3,235.8L366.7,239.4L362.0,247.5Z" fill="#472d7b"/><path d="M333.7,268.4L338.4,268.9L334.8,263.9L330.1,261.0Z" fill="#440154"/><path d="M323.9,233.6L328.7,244.2L325.1,234.8L320.3,221.2Z" fill="#443b84"/><path d="M224.2,260.9L228.9,249.2L225.3,252.5L220.6,262.1Z" fill="#470d60"/><path d="M156.2,214.5L160.9,211.8L157.3,211.6L152.5,215.4Z" fill="#38588c"/><path d="M330.1,261.0L334.8,263.9L331.2,256.0L326.4,250.1Z" fill="#471365"/><path d="M305.9,189.4L310.6,209.2L307.0,208.9L302.3,189.6Z" fill="#297b8e"/><path d="M172.8,217.1L177.5,219.7L173.9,214.2L169.2,213.0Z" fill="#3a538b"/><path d="M268.9,172.4L273.7,181.1L270.0,198.4L265.3,191.6Z" fill="#218e8d"/><path d="M409.5,224.8L414.2,228.1L410.6,223.4L405.9,220.3Z" fill="#3e4989"/><path d="M132.5,240.2L137.3,234.7L133.7,236.3L128.9,241.2Z" fill="#46327e"/><path d="M137.3,234.7L142.0,229.0L138.4,230.8L133.7,236.3Z" fill="#443b84"/><path d="M428.7,246.7L433.4,247.4L429.8,244.1L425.1,242.5Z" fill="#482878"/><path d="M337.3,272.2L342.0,270.5L338.4,268.9L333.7,268.4Z" fill="#440154"/><path d="M151.4,218.5L156.2,214.5L152.5,215.4L147.8,220.0Z" fill="#3a538b"/><path d="M142.0,229.0L146.7,223.4L143.1,225.3L138.4,230.8Z" fill="#404588"/><path d="M370.3,235.8L375.1,228.3L371.4,231.2L366.7,239.4Z" fill="#443b84"/><path d="M146.7,223.4L151.4,218.5L147.8,220.0L143.1,225.3Z" fill="#3e4989"/><path d="M176.4,222.2L181.2,226.1L177.5,219.7L172.8,217.1Z" fill="#3d4e8a"/><path d="M180.0,228.1L184.8,233.0L181.2,226.1L176.4,222.2Z" fill="#404588"/><path d="M413.1,229.8L417.8,233.0L414.2,228.1L409.5,224.8Z" fill="#404588"/><path d="M210.0,269.5L214.8,270.8L211.2,268.7L206.4,266.4Z" fill="#46075a"/><path d="M397.6,214.8L402.3,216.2L398.7,212.8L393.9,212.2Z" fill="#38588c"/><path d="M183.7,234.3L188.4,240.0L184.8,233.0L180.0,228.1Z" fill="#443b84"/><path d="M389.2,213.5L393.9,212.2L390.3,210.3L385.6,212.8Z" fill="#365c8d"/><path d="M187.3,240.6L192.0,246.7L188.4,240.0L183.7,234.3Z" fill="#46327e"/><path d="M164.5,213.2L169.2,213.0L165.6,210.2L160.9,211.8Z" fill="#365c8d"/><path d="M218.4,272.6L223.1,268.7L219.5,268.1L214.8,270.8Z" fill="#440154"/><path d="M190.9,246.6L195.6,252.8L192.0,246.7L187.3,240.6Z" fill="#472d7b"/><path d="M320.3,221.2L325.1,234.8L321.4,225.7L316.7,209.6Z" fill="#3a538b"/><path d="M223.1,268.7L227.8,260.1L224.2,260.9L219.5,268.1Z" fill="#46075a"/><path d="M350.3,264.9L355.1,259.6L351.4,263.4L346.7,267.7Z" fill="#470d60"/><path d="M355.1,259.6L359.8,253.4L356.2,257.8L351.4,263.4Z" fill="#48186a"/><path d="M375.1,228.3L379.8,221.8L376.2,223.7L371.4,231.2Z" fill="#404588"/><path d="M194.5,252.2L199.2,258.2L195.6,252.8L190.9,246.6Z" fill="#482374"/><path d="M293.9,173.6L298.7,193.2L295.0,199.6L290.3,181.9Z" fill="#218e8d"/><path d="M326.4,250.1L331.2,256.0L327.6,245.6L322.8,236.6Z" fill="#482374"/><path d="M416.7,235.0L421.4,237.9L417.8,233.0L413.1,229.8Z" fill="#443b84"/><path d="M230.0,239.3L234.8,223.2L231.2,232.2L226.4,245.4Z" fill="#453781"/><path d="M432.3,250.2L437.0,249.9L433.4,247.4L428.7,246.7Z" fill="#482878"/><path d="M345.6,269.1L350.3,264.9L346.7,267.7L342.0,270.5Z" fill="#46075a"/><path d="M384.5,216.8L389.2,213.5L385.6,212.8L380.9,217.4Z" fill="#38588c"/><path d="M309.5,192.9L314.2,212.2L310.6,209.2L305.9,189.4Z" fill="#2a778e"/><path d="M359.8,253.4L364.5,246.5L360.9,251.1L356.2,257.8Z" fill="#482374"/><path d="M379.8,221.8L384.5,216.8L380.9,217.4L376.2,223.7Z" fill="#3d4e8a"/><path d="M235.9,217.5L240.6,202.6L237.0,217.3L232.3,229.3Z" fill="#38588c"/><path d="M198.1,257.1L202.8,262.7L199.2,258.2L194.5,252.2Z" fill="#481d6f"/><path d="M420.3,240.2L425.1,242.5L421.4,237.9L416.7,235.0Z" fill="#453781"/><path d="M401.2,218.1L405.9,220.3L402.3,216.2L397.6,214.8Z" fill="#38588c"/><path d="M332.6,273.0L337.3,272.2L333.7,268.4L328.9,267.2Z" fill="#440154"/><path d="M316.7,209.6L321.4,225.7L317.8,217.9L313.1,199.8Z" fill="#32648e"/><path d="M328.9,267.2L333.7,268.4L330.1,261.0L325.3,257.2Z" fill="#46075a"/><path d="M159.8,214.8L164.5,213.2L160.9,211.8L156.2,214.5Z" fill="#365c8d"/><path d="M168.1,215.8L172.8,217.1L169.2,213.0L164.5,213.2Z" fill="#38588c"/><path d="M340.9,272.3L345.6,269.1L342.0,270.5L337.3,272.2Z" fill="#440154"/><path d="M213.7,272.0L218.4,272.6L214.8,270.8L210.0,269.5Z" fill="#440154"/><path d="M313.1,199.8L317.8,217.9L314.2,212.2L309.5,192.9Z" fill="#2d708e"/><path d="M364.5,246.5L369.2,239.3L365.6,243.5L360.9,251.1Z" fill="#472d7b"/><path d="M228.9,249.2L233.7,233.5L230.0,239.3L225.3,252.5Z" fill="#482878"/><path d="M392.8,214.9L397.6,214.8L393.9,212.2L389.2,213.5Z" fill="#365c8d"/><path d="M424.0,245.1L428.7,246.7L425.1,242.5L420.3,240.2Z" fill="#472d7b"/><path d="M201.7,261.4L206.4,266.4L202.8,262.7L198.1,257.1Z" fill="#48186a"/><path d="M222.0,274.2L226.7,269.6L223.1,268.7L218.4,272.6Z" fill="#440154"/><path d="M435.9,252.9L440.6,251.6L437.0,249.9L432.3,250.2Z" fill="#482374"/><path d="M227.8,260.1L232.5,246.7L228.9,249.2L224.2,260.9Z" fill="#48186a"/><path d="M404.8,222.1L409.5,224.8L405.9,220.3L401.2,218.1Z" fill="#3a538b"/><path d="M155.0,217.8L159.8,214.8L156.2,214.5L151.4,218.5Z" fill="#38588c"/><path d="M136.2,239.0L140.9,233.1L137.3,234.7L132.5,240.2Z" fill="#453781"/><path d="M277.3,164.1L282.0,177.6L278.4,192.4L273.7,181.1Z" fill="#1f9e89"/><path d="M140.9,233.1L145.6,227.3L142.0,229.0L137.3,234.7Z" fill="#424086"/><path d="M369.2,239.3L373.9,232.2L370.3,235.8L365.6,243.5Z" fill="#453781"/><path d="M171.7,219.6L176.4,222.2L172.8,217.1L168.1,215.8Z" fill="#3a538b"/><path d="M150.3,222.1L155.0,217.8L151.4,218.5L146.7,223.4Z" fill="#3a538b"/><path d="M226.7,269.6L231.4,260.0L227.8,260.1L223.1,268.7Z" fill="#46075a"/><path d="M145.6,227.3L150.3,222.1L146.7,223.4L142.0,229.0Z" fill="#3e4989"/><path d="M336.2,274.7L340.9,272.3L337.3,272.2L332.6,273.0Z" fill="#440154"/><path d="M325.3,257.2L330.1,261.0L326.4,250.1L321.7,243.6Z" fill="#481d6f"/><path d="M322.8,236.6L327.6,245.6L323.9,233.6L319.2,221.5Z" fill="#443b84"/><path d="M427.6,249.5L432.3,250.2L428.7,246.7L424.0,245.1Z" fill="#482878"/><path d="M285.6,164.4L290.3,181.9L286.7,192.8L282.0,177.6Z" fill="#1f9e89"/><path d="M408.4,226.8L413.1,229.8L409.5,224.8L404.8,222.1Z" fill="#3e4989"/><path d="M205.3,265.0L210.0,269.5L206.4,266.4L201.7,261.4Z" fill="#471365"/><path d="M388.1,216.9L392.8,214.9L389.2,213.5L384.5,216.8Z" fill="#38588c"/><path d="M175.3,224.2L180.0,228.1L176.4,222.2L171.7,219.6Z" fill="#3d4e8a"/><path d="M217.3,274.1L222.0,274.2L218.4,272.6L213.7,272.0Z" fill="#440154"/><path d="M373.9,232.2L378.7,225.8L375.1,228.3L370.3,235.8Z" fill="#404588"/><path d="M327.8,273.3L332.6,273.0L328.9,267.2L324.2,265.7Z" fill="#440154"/><path d="M163.4,216.1L168.1,215.8L164.5,213.2L159.8,214.8Z" fill="#365c8d"/><path d="M264.2,167.2L268.9,172.4L265.3,191.6L260.6,187.6Z" fill="#1f9a8a"/><path d="M396.4,217.2L401.2,218.1L397.6,214.8L392.8,214.9Z" fill="#38588c"/><path d="M412.0,232.0L416.7,235.0L413.1,229.8L408.4,226.8Z" fill="#404588"/><path d="M178.9,229.3L183.7,234.3L180.0,228.1L175.3,224.2Z" fill="#3e4989"/><path d="M378.7,225.8L383.4,220.6L379.8,221.8L375.1,228.3Z" fill="#3d4e8a"/><path d="M383.4,220.6L388.1,216.9L384.5,216.8L379.8,221.8Z" fill="#3a538b"/><path d="M431.2,253.1L435.9,252.9L432.3,250.2L427.6,249.5Z" fill="#482878"/><path d="M439.5,254.6L444.2,252.4L440.6,251.6L435.9,252.9Z" fill="#482374"/><path d="M240.6,202.6L245.3,188.8L241.7,206.0L237.0,217.3Z" fill="#2f6c8e"/><path d="M182.5,234.8L187.3,240.6L183.7,234.3L178.9,229.3Z" fill="#424086"/><path d="M225.6,275.8L230.3,271.0L226.7,269.6L222.0,274.2Z" fill="#440154"/><path d="M415.6,237.5L420.3,240.2L416.7,235.0L412.0,232.0Z" fill="#443b84"/><path d="M331.4,276.4L336.2,274.7L332.6,273.0L327.8,273.3Z" fill="#440154"/><path d="M324.2,265.7L328.9,267.2L325.3,257.2L320.6,253.5Z" fill="#470d60"/><path d="M186.2,240.3L190.9,246.6L187.3,240.6L182.5,234.8Z" fill="#443b84"/><path d="M234.8,223.2L239.5,205.5L235.9,217.5L231.2,232.2Z" fill="#3a538b"/><path d="M353.9,260.3L358.7,254.6L355.1,259.6L350.3,264.9Z" fill="#481d6f"/><path d="M349.2,265.2L353.9,260.3L350.3,264.9L345.6,269.1Z" fill="#471365"/><path d="M208.9,268.0L213.7,272.0L210.0,269.5L205.3,265.0Z" fill="#470d60"/><path d="M419.2,242.9L424.0,245.1L420.3,240.2L415.6,237.5Z" fill="#453781"/><path d="M158.7,217.9L163.4,216.1L159.8,214.8L155.0,217.8Z" fill="#38588c"/><path d="M358.7,254.6L363.4,248.3L359.8,253.4L355.1,259.6Z" fill="#482374"/><path d="M189.8,245.5L194.5,252.2L190.9,246.6L186.2,240.3Z" fill="#46327e"/><path d="M344.5,269.4L349.2,265.2L345.6,269.1L340.9,272.3Z" fill="#470d60"/><path d="M400.1,220.4L404.8,222.1L401.2,218.1L396.4,217.2Z" fill="#38588c"/><path d="M230.3,271.0L235.1,261.1L231.4,260.0L226.7,269.6Z" fill="#46075a"/><path d="M167.0,218.4L171.7,219.6L168.1,215.8L163.4,216.1Z" fill="#38588c"/><path d="M231.4,260.0L236.2,245.5L232.5,246.7L227.8,260.1Z" fill="#48186a"/><path d="M220.9,275.9L225.6,275.8L222.0,274.2L217.3,274.1Z" fill="#440154"/><path d="M297.5,168.8L302.3,189.6L298.7,193.2L293.9,173.6Z" fill="#1f9a8a"/><path d="M363.4,248.3L368.1,241.7L364.5,246.5L359.8,253.4Z" fill="#472d7b"/><path d="M391.7,217.9L396.4,217.2L392.8,214.9L388.1,216.9Z" fill="#365c8d"/><path d="M422.8,248.1L427.6,249.5L424.0,245.1L419.2,242.9Z" fill="#472d7b"/><path d="M139.8,237.8L144.5,231.7L140.9,233.1L136.2,239.0Z" fill="#443b84"/><path d="M321.7,243.6L326.4,250.1L322.8,236.6L318.1,227.1Z" fill="#453781"/><path d="M193.4,250.4L198.1,257.1L194.5,252.2L189.8,245.5Z" fill="#472d7b"/><path d="M153.9,221.4L158.7,217.9L155.0,217.8L150.3,222.1Z" fill="#38588c"/><path d="M319.2,221.5L323.9,233.6L320.3,221.2L315.6,206.1Z" fill="#38588c"/><path d="M323.1,273.5L327.8,273.3L324.2,265.7L319.5,264.4Z" fill="#46075a"/><path d="M434.8,255.8L439.5,254.6L435.9,252.9L431.2,253.1Z" fill="#482374"/><path d="M339.8,272.7L344.5,269.4L340.9,272.3L336.2,274.7Z" fill="#46075a"/><path d="M144.5,231.7L149.2,226.1L145.6,227.3L140.9,233.1Z" fill="#404588"/><path d="M149.2,226.1L153.9,221.4L150.3,222.1L145.6,227.3Z" fill="#3d4e8a"/><path d="M232.5,246.7L237.3,229.1L233.7,233.5L228.9,249.2Z" fill="#472d7b"/><path d="M326.7,277.7L331.4,276.4L327.8,273.3L323.1,273.5Z" fill="#440154"/><path d="M233.7,233.5L238.4,214.9L234.8,223.2L230.0,239.3Z" fill="#404588"/><path d="M403.7,224.4L408.4,226.8L404.8,222.1L400.1,220.4Z" fill="#3a538b"/><path d="M368.1,241.7L372.8,235.1L369.2,239.3L364.5,246.5Z" fill="#443b84"/><path d="M229.2,277.5L233.9,272.9L230.3,271.0L225.6,275.8Z" fill="#440154"/><path d="M212.6,270.4L217.3,274.1L213.7,272.0L208.9,268.0Z" fill="#470d60"/><path d="M426.5,252.6L431.2,253.1L427.6,249.5L422.8,248.1Z" fill="#482878"/><path d="M197.0,254.7L201.7,261.4L198.1,257.1L193.4,250.4Z" fill="#482878"/><path d="M170.6,221.7L175.3,224.2L171.7,219.6L167.0,218.4Z" fill="#38588c"/><path d="M387.0,220.2L391.7,217.9L388.1,216.9L383.4,220.6Z" fill="#38588c"/><path d="M259.5,166.2L264.2,167.2L260.6,187.6L255.9,187.1Z" fill="#1f9e89"/><path d="M245.3,188.8L250.0,177.5L246.4,196.7L241.7,206.0Z" fill="#277f8e"/><path d="M372.8,235.1L377.6,229.1L373.9,232.2L369.2,239.3Z" fill="#404588"/><path d="M335.1,275.4L339.8,272.7L336.2,274.7L331.4,276.4Z" fill="#46075a"/><path d="M320.6,253.5L325.3,257.2L321.7,243.6L317.0,237.4Z" fill="#482878"/><path d="M407.3,229.3L412.0,232.0L408.4,226.8L403.7,224.4Z" fill="#3d4e8a"/><path d="M162.3,219.0L167.0,218.4L163.4,216.1L158.7,217.9Z" fill="#365c8d"/><path d="M233.9,272.9L238.7,263.4L235.1,261.1L230.3,271.0Z" fill="#46075a"/><path d="M377.6,229.1L382.3,224.0L378.7,225.8L373.9,232.2Z" fill="#3d4e8a"/><path d="M382.3,224.0L387.0,220.2L383.4,220.6L378.7,225.8Z" fill="#3a538b"/><path d="M395.3,219.9L400.1,220.4L396.4,217.2L391.7,217.9Z" fill="#365c8d"/><path d="M319.5,264.4L324.2,265.7L320.6,253.5L315.9,250.6Z" fill="#48186a"/><path d="M224.5,277.4L229.2,277.5L225.6,275.8L220.9,275.9Z" fill="#440154"/><path d="M174.2,225.6L178.9,229.3L175.3,224.2L170.6,221.7Z" fill="#3a538b"/><path d="M410.9,234.7L415.6,237.5L412.0,232.0L407.3,229.3Z" fill="#404588"/><path d="M200.6,258.5L205.3,265.0L201.7,261.4L197.0,254.7Z" fill="#482374"/><path d="M430.1,256.2L434.8,255.8L431.2,253.1L426.5,252.6Z" fill="#482878"/><path d="M322.0,278.9L326.7,277.7L323.1,273.5L318.4,273.9Z" fill="#440154"/><path d="M318.4,273.9L323.1,273.5L319.5,264.4L314.8,264.0Z" fill="#46075a"/><path d="M414.5,240.4L419.2,242.9L415.6,237.5L410.9,234.7Z" fill="#443b84"/><path d="M235.1,261.1L239.8,246.2L236.2,245.5L231.4,260.0Z" fill="#48186a"/><path d="M330.3,277.5L335.1,275.4L331.4,276.4L326.7,277.7Z" fill="#440154"/><path d="M216.2,272.3L220.9,275.9L217.3,274.1L212.6,270.4Z" fill="#470d60"/><path d="M232.8,279.2L237.6,275.4L233.9,272.9L229.2,277.5Z" fill="#440154"/><path d="M250.0,177.5L254.8,169.7L251.2,190.2L246.4,196.7Z" fill="#218e8d"/><path d="M177.8,230.0L182.5,234.8L178.9,229.3L174.2,225.6Z" fill="#3d4e8a"/><path d="M254.8,169.7L259.5,166.2L255.9,187.1L251.2,190.2Z" fill="#1f9a8a"/><path d="M157.5,221.4L162.3,219.0L158.7,217.9L153.9,221.4Z" fill="#38588c"/><path d="M418.1,246.1L422.8,248.1L419.2,242.9L414.5,240.4Z" fill="#453781"/><path d="M315.6,206.1L320.3,221.2L316.7,209.6L312.0,191.9Z" fill="#2f6c8e"/><path d="M143.4,236.6L148.1,230.6L144.5,231.7L139.8,237.8Z" fill="#404588"/><path d="M398.9,223.0L403.7,224.4L400.1,220.4L395.3,219.9Z" fill="#38588c"/><path d="M237.6,275.4L242.3,266.8L238.7,263.4L233.9,272.9Z" fill="#46075a"/><path d="M204.2,261.6L208.9,268.0L205.3,265.0L200.6,258.5Z" fill="#481d6f"/><path d="M181.4,234.6L186.2,240.3L182.5,234.8L177.8,230.0Z" fill="#3e4989"/><path d="M152.8,225.4L157.5,221.4L153.9,221.4L149.2,226.1Z" fill="#3a538b"/><path d="M165.9,220.9L170.6,221.7L167.0,218.4L162.3,219.0Z" fill="#365c8d"/><path d="M148.1,230.6L152.8,225.4L149.2,226.1L144.5,231.7Z" fill="#3d4e8a"/><path d="M272.5,153.5L277.3,164.1L273.7,181.1L268.9,172.4Z" fill="#2ab07f"/><path d="M421.7,251.4L426.5,252.6L422.8,248.1L418.1,246.1Z" fill="#472d7b"/><path d="M390.6,220.9L395.3,219.9L391.7,217.9L387.0,220.2Z" fill="#365c8d"/><path d="M301.2,168.2L305.9,189.4L302.3,189.6L297.5,168.8Z" fill="#1f9e89"/><path d="M239.5,205.5L244.2,187.8L240.6,202.6L235.9,217.5Z" fill="#2f6c8e"/><path d="M318.1,227.1L322.8,236.6L319.2,221.5L314.5,209.1Z" fill="#3a538b"/><path d="M352.8,259.7L357.6,254.5L353.9,260.3L349.2,265.2Z" fill="#482374"/><path d="M357.6,254.5L362.3,248.9L358.7,254.6L353.9,260.3Z" fill="#472d7b"/><path d="M317.3,280.1L322.0,278.9L318.4,273.9L313.7,274.9Z" fill="#440154"/><path d="M228.1,278.7L232.8,279.2L229.2,277.5L224.5,277.4Z" fill="#440154"/><path d="M348.1,264.2L352.8,259.7L349.2,265.2L344.5,269.4Z" fill="#481d6f"/><path d="M325.6,279.2L330.3,277.5L326.7,277.7L322.0,278.9Z" fill="#440154"/><path d="M185.0,239.2L189.8,245.5L186.2,240.3L181.4,234.6Z" fill="#424086"/><path d="M362.3,248.9L367.0,243.0L363.4,248.3L358.7,254.6Z" fill="#46327e"/><path d="M236.2,245.5L240.9,226.7L237.3,229.1L232.5,246.7Z" fill="#453781"/><path d="M313.7,274.9L318.4,273.9L314.8,264.0L310.1,264.6Z" fill="#46075a"/><path d="M402.6,227.2L407.3,229.3L403.7,224.4L398.9,223.0Z" fill="#3a538b"/><path d="M425.3,255.9L430.1,256.2L426.5,252.6L421.7,251.4Z" fill="#482878"/><path d="M289.2,154.3L293.9,173.6L290.3,181.9L285.6,164.4Z" fill="#2ab07f"/><path d="M343.4,268.1L348.1,264.2L344.5,269.4L339.8,272.7Z" fill="#48186a"/><path d="M238.7,263.4L243.4,248.9L239.8,246.2L235.1,261.1Z" fill="#48186a"/><path d="M236.4,280.8L241.2,278.2L237.6,275.4L232.8,279.2Z" fill="#440154"/><path d="M314.8,264.0L319.5,264.4L315.9,250.6L311.2,249.1Z" fill="#48186a"/><path d="M385.9,223.3L390.6,220.9L387.0,220.2L382.3,224.0Z" fill="#38588c"/><path d="M367.0,243.0L371.7,237.2L368.1,241.7L363.4,248.3Z" fill="#443b84"/><path d="M219.8,273.7L224.5,277.4L220.9,275.9L216.2,272.3Z" fill="#470d60"/><path d="M241.2,278.2L245.9,270.9L242.3,266.8L237.6,275.4Z" fill="#440154"/><path d="M188.7,243.6L193.4,250.4L189.8,245.5L185.0,239.2Z" fill="#443b84"/><path d="M169.5,223.6L174.2,225.6L170.6,221.7L165.9,220.9Z" fill="#38588c"/><path d="M207.8,264.2L212.6,270.4L208.9,268.0L204.2,261.6Z" fill="#481d6f"/><path d="M312.0,191.9L316.7,209.6L313.1,199.8L308.4,180.2Z" fill="#277f8e"/><path d="M371.7,237.2L376.4,231.7L372.8,235.1L368.1,241.7Z" fill="#404588"/><path d="M406.2,232.2L410.9,234.7L407.3,229.3L402.6,227.2Z" fill="#3d4e8a"/><path d="M161.2,222.2L165.9,220.9L162.3,219.0L157.5,221.4Z" fill="#365c8d"/><path d="M338.7,271.3L343.4,268.1L339.8,272.7L335.1,275.4Z" fill="#471365"/><path d="M381.2,227.0L385.9,223.3L382.3,224.0L377.6,229.1Z" fill="#3a538b"/><path d="M315.9,250.6L320.6,253.5L317.0,237.4L312.3,232.6Z" fill="#472d7b"/><path d="M317.0,237.4L321.7,243.6L318.1,227.1L313.4,218.4Z" fill="#404588"/><path d="M376.4,231.7L381.2,227.0L377.6,229.1L372.8,235.1Z" fill="#3d4e8a"/><path d="M394.2,222.8L398.9,223.0L395.3,219.9L390.6,220.9Z" fill="#365c8d"/><path d="M312.6,281.4L317.3,280.1L313.7,274.9L308.9,276.5Z" fill="#440154"/><path d="M320.9,280.6L325.6,279.2L322.0,278.9L317.3,280.1Z" fill="#440154"/><path d="M409.8,237.9L414.5,240.4L410.9,234.7L406.2,232.2Z" fill="#404588"/><path d="M304.8,172.1L309.5,192.9L305.9,189.4L301.2,168.2Z" fill="#1f9a8a"/><path d="M280.9,148.8L285.6,164.4L282.0,177.6L277.3,164.1Z" fill="#35b779"/><path d="M192.3,247.6L197.0,254.7L193.4,250.4L188.7,243.6Z" fill="#453781"/><path d="M237.3,229.1L242.0,208.4L238.4,214.9L233.7,233.5Z" fill="#3d4e8a"/><path d="M238.4,214.9L243.1,194.7L239.5,205.5L234.8,223.2Z" fill="#32648e"/><path d="M308.9,276.5L313.7,274.9L310.1,264.6L305.3,266.5Z" fill="#46075a"/><path d="M242.3,266.8L247.0,253.3L243.4,248.9L238.7,263.4Z" fill="#48186a"/><path d="M413.4,243.8L418.1,246.1L414.5,240.4L409.8,237.9Z" fill="#443b84"/><path d="M244.8,280.8L249.5,275.4L245.9,270.9L241.2,278.2Z" fill="#440154"/><path d="M308.4,180.2L313.1,199.8L309.5,192.9L304.8,172.1Z" fill="#218e8d"/><path d="M156.4,225.3L161.2,222.2L157.5,221.4L152.8,225.4Z" fill="#38588c"/><path d="M231.7,279.5L236.4,280.8L232.8,279.2L228.1,278.7Z" fill="#46075a"/><path d="M173.1,226.8L177.8,230.0L174.2,225.6L169.5,223.6Z" fill="#38588c"/><path d="M333.9,273.9L338.7,271.3L335.1,275.4L330.3,277.5Z" fill="#470d60"/><path d="M147.0,235.7L151.7,229.9L148.1,230.6L143.4,236.6Z" fill="#3e4989"/><path d="M417.0,249.7L421.7,251.4L418.1,246.1L413.4,243.8Z" fill="#453781"/><path d="M240.1,282.1L244.8,280.8L241.2,278.2L236.4,280.8Z" fill="#440154"/><path d="M151.7,229.9L156.4,225.3L152.8,225.4L148.1,230.6Z" fill="#3d4e8a"/><path d="M310.1,264.6L314.8,264.0L311.2,249.1L306.4,249.4Z" fill="#48186a"/><path d="M211.4,266.1L216.2,272.3L212.6,270.4L207.8,264.2Z" fill="#481d6f"/><path d="M245.9,270.9L250.6,259.2L247.0,253.3L242.3,266.8Z" fill="#470d60"/><path d="M195.9,251.2L200.6,258.5L197.0,254.7L192.3,247.6Z" fill="#453781"/><path d="M223.4,274.6L228.1,278.7L224.5,277.4L219.8,273.7Z" fill="#470d60"/><path d="M397.8,226.0L402.6,227.2L398.9,223.0L394.2,222.8Z" fill="#38588c"/><path d="M420.6,255.0L425.3,255.9L421.7,251.4L417.0,249.7Z" fill="#472d7b"/><path d="M307.8,282.8L312.6,281.4L308.9,276.5L304.2,278.6Z" fill="#440154"/><path d="M304.2,278.6L308.9,276.5L305.3,266.5L300.6,269.5Z" fill="#46075a"/><path d="M316.2,281.8L320.9,280.6L317.3,280.1L312.6,281.4Z" fill="#440154"/><path d="M389.5,223.8L394.2,222.8L390.6,220.9L385.9,223.3Z" fill="#365c8d"/><path d="M164.8,223.6L169.5,223.6L165.9,220.9L161.2,222.2Z" fill="#365c8d"/><path d="M239.8,246.2L244.5,227.0L240.9,226.7L236.2,245.5Z" fill="#453781"/><path d="M176.7,230.3L181.4,234.6L177.8,230.0L173.1,226.8Z" fill="#3a538b"/><path d="M248.4,283.0L253.1,279.6L249.5,275.4L244.8,280.8Z" fill="#440154"/><path d="M249.5,275.4L254.2,265.9L250.6,259.2L245.9,270.9Z" fill="#46075a"/><path d="M329.2,275.9L333.9,273.9L330.3,277.5L325.6,279.2Z" fill="#470d60"/><path d="M314.5,209.1L319.2,221.5L315.6,206.1L310.9,191.0Z" fill="#2f6c8e"/><path d="M253.1,279.6L257.8,272.5L254.2,265.9L249.5,275.4Z" fill="#440154"/><path d="M244.2,187.8L248.9,171.7L245.3,188.8L240.6,202.6Z" fill="#24868e"/><path d="M401.4,230.3L406.2,232.2L402.6,227.2L397.8,226.0Z" fill="#3a538b"/><path d="M299.5,280.9L304.2,278.6L300.6,269.5L295.9,273.3Z" fill="#440154"/><path d="M199.5,254.3L204.2,261.6L200.6,258.5L195.9,251.2Z" fill="#46327e"/><path d="M384.8,226.1L389.5,223.8L385.9,223.3L381.2,227.0Z" fill="#38588c"/><path d="M305.3,266.5L310.1,264.6L306.4,249.4L301.7,251.6Z" fill="#48186a"/><path d="M303.1,284.0L307.8,282.8L304.2,278.6L299.5,280.9Z" fill="#440154"/><path d="M180.3,234.1L185.0,239.2L181.4,234.6L176.7,230.3Z" fill="#3d4e8a"/><path d="M243.7,282.7L248.4,283.0L244.8,280.8L240.1,282.1Z" fill="#440154"/><path d="M235.3,279.8L240.1,282.1L236.4,280.8L231.7,279.5Z" fill="#46075a"/><path d="M256.7,283.0L261.4,278.4L257.8,272.5L253.1,279.6Z" fill="#440154"/><path d="M311.2,249.1L315.9,250.6L312.3,232.6L307.6,229.9Z" fill="#453781"/><path d="M405.1,235.6L409.8,237.9L406.2,232.2L401.4,230.3Z" fill="#3e4989"/><path d="M160.0,225.7L164.8,223.6L161.2,222.2L156.4,225.3Z" fill="#38588c"/><path d="M311.4,282.6L316.2,281.8L312.6,281.4L307.8,282.8Z" fill="#440154"/><path d="M267.8,147.1L272.5,153.5L268.9,172.4L264.2,167.2Z" fill="#3bbb75"/><path d="M215.1,267.5L219.8,273.7L216.2,272.3L211.4,266.1Z" fill="#481d6f"/><path d="M324.5,277.4L329.2,275.9L325.6,279.2L320.9,280.6Z" fill="#470d60"/><path d="M294.8,283.2L299.5,280.9L295.9,273.3L291.2,277.4Z" fill="#440154"/><path d="M380.1,229.4L384.8,226.1L381.2,227.0L376.4,231.7Z" fill="#3a538b"/><path d="M168.4,225.6L173.1,226.8L169.5,223.6L164.8,223.6Z" fill="#365c8d"/><path d="M356.5,253.4L361.2,248.5L357.6,254.5L352.8,259.7Z" fill="#46327e"/><path d="M252.0,284.2L256.7,283.0L253.1,279.6L248.4,283.0Z" fill="#440154"/><path d="M361.2,248.5L365.9,243.5L362.3,248.9L357.6,254.5Z" fill="#443b84"/><path d="M408.7,241.6L413.4,243.8L409.8,237.9L405.1,235.6Z" fill="#404588"/><path d="M393.1,225.8L397.8,226.0L394.2,222.8L389.5,223.8Z" fill="#365c8d"/><path d="M351.7,257.9L356.5,253.4L352.8,259.7L348.1,264.2Z" fill="#472d7b"/><path d="M365.9,243.5L370.6,238.4L367.0,243.0L362.3,248.9Z" fill="#424086"/><path d="M375.3,233.6L380.1,229.4L376.4,231.7L371.7,237.2Z" fill="#3d4e8a"/><path d="M370.6,238.4L375.3,233.6L371.7,237.2L367.0,243.0Z" fill="#3e4989"/><path d="M300.6,269.5L305.3,266.5L301.7,251.6L297.0,255.7Z" fill="#48186a"/><path d="M155.3,229.7L160.0,225.7L156.4,225.3L151.7,229.9Z" fill="#3a538b"/><path d="M412.3,247.7L417.0,249.7L413.4,243.8L408.7,241.6Z" fill="#443b84"/><path d="M227.0,275.0L231.7,279.5L228.1,278.7L223.4,274.6Z" fill="#471365"/><path d="M243.4,248.9L248.1,230.1L244.5,227.0L239.8,246.2Z" fill="#453781"/><path d="M150.6,235.1L155.3,229.7L151.7,229.9L147.0,235.7Z" fill="#3d4e8a"/><path d="M183.9,237.8L188.7,243.6L185.0,239.2L180.3,234.1Z" fill="#3e4989"/><path d="M261.4,278.4L266.2,270.9L262.6,262.0L257.8,272.5Z" fill="#46075a"/><path d="M347.0,261.8L351.7,257.9L348.1,264.2L343.4,268.1Z" fill="#482878"/><path d="M265.1,282.9L269.8,278.2L266.2,270.9L261.4,278.4Z" fill="#440154"/><path d="M415.9,253.6L420.6,255.0L417.0,249.7L412.3,247.7Z" fill="#46327e"/><path d="M260.3,285.0L265.1,282.9L261.4,278.4L256.7,283.0Z" fill="#440154"/><path d="M295.9,273.3L300.6,269.5L297.0,255.7L292.3,261.2Z" fill="#470d60"/><path d="M298.4,284.8L303.1,284.0L299.5,280.9L294.8,283.2Z" fill="#440154"/><path d="M290.1,284.9L294.8,283.2L291.2,277.4L286.4,281.2Z" fill="#440154"/><path d="M291.2,277.4L295.9,273.3L292.3,261.2L287.6,267.4Z" fill="#46075a"/><path d="M286.4,281.2L291.2,277.4L287.6,267.4L282.8,273.7Z" fill="#440154"/><path d="M203.1,256.9L207.8,264.2L204.2,261.6L199.5,254.3Z" fill="#46327e"/><path d="M257.8,272.5L262.6,262.0L258.9,252.6L254.2,265.9Z" fill="#471365"/><path d="M281.7,284.1L286.4,281.2L282.8,273.7L278.1,279.2Z" fill="#440154"/><path d="M273.4,283.3L278.1,279.2L274.5,271.3L269.8,278.2Z" fill="#440154"/><path d="M312.3,232.6L317.0,237.4L313.4,218.4L308.7,211.6Z" fill="#3d4e8a"/><path d="M342.3,265.2L347.0,261.8L343.4,268.1L338.7,271.3Z" fill="#482374"/><path d="M313.4,218.4L318.1,227.1L314.5,209.1L309.8,197.8Z" fill="#32648e"/><path d="M292.8,148.3L297.5,168.8L293.9,173.6L289.2,154.3Z" fill="#3bbb75"/><path d="M268.7,285.4L273.4,283.3L269.8,278.2L265.1,282.9Z" fill="#440154"/><path d="M240.9,226.7L245.6,204.9L242.0,208.4L237.3,229.1Z" fill="#38588c"/><path d="M269.8,278.2L274.5,271.3L270.9,260.9L266.2,270.9Z" fill="#46075a"/><path d="M247.0,253.3L251.7,235.7L248.1,230.1L243.4,248.9Z" fill="#472d7b"/><path d="M319.8,278.4L324.5,277.4L320.9,280.6L316.2,281.8Z" fill="#470d60"/><path d="M278.1,279.2L282.8,273.7L279.2,262.8L274.5,271.3Z" fill="#46075a"/><path d="M306.7,283.0L311.4,282.6L307.8,282.8L303.1,284.0Z" fill="#46075a"/><path d="M254.2,265.9L258.9,252.6L255.3,243.5L250.6,259.2Z" fill="#481d6f"/><path d="M396.7,229.2L401.4,230.3L397.8,226.0L393.1,225.8Z" fill="#38588c"/><path d="M172.0,228.1L176.7,230.3L173.1,226.8L168.4,225.6Z" fill="#38588c"/><path d="M187.5,241.3L192.3,247.6L188.7,243.6L183.9,237.8Z" fill="#404588"/><path d="M277.0,285.8L281.7,284.1L278.1,279.2L273.4,283.3Z" fill="#440154"/><path d="M250.6,259.2L255.3,243.5L251.7,235.7L247.0,253.3Z" fill="#482878"/><path d="M388.4,226.7L393.1,225.8L389.5,223.8L384.8,226.1Z" fill="#365c8d"/><path d="M247.3,282.5L252.0,284.2L248.4,283.0L243.7,282.7Z" fill="#46075a"/><path d="M163.7,226.7L168.4,225.6L164.8,223.6L160.0,225.7Z" fill="#365c8d"/><path d="M285.3,285.8L290.1,284.9L286.4,281.2L281.7,284.1Z" fill="#440154"/><path d="M337.6,267.9L342.3,265.2L338.7,271.3L333.9,273.9Z" fill="#481d6f"/><path d="M255.6,284.3L260.3,285.0L256.7,283.0L252.0,284.2Z" fill="#440154"/><path d="M238.9,279.4L243.7,282.7L240.1,282.1L235.3,279.8Z" fill="#470d60"/><path d="M306.4,249.4L311.2,249.1L307.6,229.9L302.8,229.8Z" fill="#453781"/><path d="M218.7,268.3L223.4,274.6L219.8,273.7L215.1,267.5Z" fill="#481d6f"/><path d="M293.7,285.1L298.4,284.8L294.8,283.2L290.1,284.9Z" fill="#440154"/><path d="M282.8,273.7L287.6,267.4L283.9,253.8L279.2,262.8Z" fill="#471365"/><path d="M248.9,171.7L253.7,158.6L250.0,177.5L245.3,188.8Z" fill="#1f9e89"/><path d="M400.3,233.9L405.1,235.6L401.4,230.3L396.7,229.2Z" fill="#3a538b"/><path d="M263.9,285.3L268.7,285.4L265.1,282.9L260.3,285.0Z" fill="#440154"/><path d="M243.1,194.7L247.8,174.6L244.2,187.8L239.5,205.5Z" fill="#277f8e"/><path d="M266.2,270.9L270.9,260.9L267.3,248.9L262.6,262.0Z" fill="#48186a"/><path d="M206.7,258.8L211.4,266.1L207.8,264.2L203.1,256.9Z" fill="#472d7b"/><path d="M310.9,191.0L315.6,206.1L312.0,191.9L307.3,174.5Z" fill="#24868e"/><path d="M191.2,244.5L195.9,251.2L192.3,247.6L187.5,241.3Z" fill="#404588"/><path d="M158.9,229.9L163.7,226.7L160.0,225.7L155.3,229.7Z" fill="#38588c"/><path d="M272.3,285.7L277.0,285.8L273.4,283.3L268.7,285.4Z" fill="#440154"/><path d="M230.6,274.7L235.3,279.8L231.7,279.5L227.0,275.0Z" fill="#48186a"/><path d="M404.0,239.5L408.7,241.6L405.1,235.6L400.3,233.9Z" fill="#3e4989"/><path d="M175.6,230.9L180.3,234.1L176.7,230.3L172.0,228.1Z" fill="#38588c"/><path d="M383.7,228.7L388.4,226.7L384.8,226.1L380.1,229.4Z" fill="#38588c"/><path d="M242.0,208.4L246.7,186.3L243.1,194.7L238.4,214.9Z" fill="#2d708e"/><path d="M274.5,271.3L279.2,262.8L275.6,249.3L270.9,260.9Z" fill="#48186a"/><path d="M332.8,270.1L337.6,267.9L333.9,273.9L329.2,275.9Z" fill="#481d6f"/><path d="M154.2,234.9L158.9,229.9L155.3,229.7L150.6,235.1Z" fill="#3d4e8a"/><path d="M315.1,279.0L319.8,278.4L316.2,281.8L311.4,282.6Z" fill="#470d60"/><path d="M407.6,245.8L412.3,247.7L408.7,241.6L404.0,239.5Z" fill="#424086"/><path d="M263.1,145.8L267.8,147.1L264.2,167.2L259.5,166.2Z" fill="#42be71"/><path d="M302.0,282.9L306.7,283.0L303.1,284.0L298.4,284.8Z" fill="#46075a"/><path d="M287.6,267.4L292.3,261.2L288.7,245.1L283.9,253.8Z" fill="#481d6f"/><path d="M411.2,252.0L415.9,253.6L412.3,247.7L407.6,245.8Z" fill="#453781"/><path d="M280.6,285.5L285.3,285.8L281.7,284.1L277.0,285.8Z" fill="#440154"/><path d="M301.7,251.6L306.4,249.4L302.8,229.8L298.1,232.4Z" fill="#453781"/><path d="M392.0,229.0L396.7,229.2L393.1,225.8L388.4,226.7Z" fill="#38588c"/><path d="M378.9,231.5L383.7,228.7L380.1,229.4L375.3,233.6Z" fill="#38588c"/><path d="M167.3,228.2L172.0,228.1L168.4,225.6L163.7,226.7Z" fill="#365c8d"/><path d="M292.3,261.2L297.0,255.7L293.4,237.7L288.7,245.1Z" fill="#482878"/><path d="M288.9,284.4L293.7,285.1L290.1,284.9L285.3,285.8Z" fill="#46075a"/><path d="M276.2,136.7L280.9,148.8L277.3,164.1L272.5,153.5Z" fill="#5ac864"/><path d="M194.8,247.4L199.5,254.3L195.9,251.2L191.2,244.5Z" fill="#424086"/><path d="M262.6,262.0L267.3,248.9L263.7,236.5L258.9,252.6Z" fill="#482374"/><path d="M297.0,255.7L301.7,251.6L298.1,232.4L293.4,237.7Z" fill="#472d7b"/><path d="M374.2,235.0L378.9,231.5L375.3,233.6L370.6,238.4Z" fill="#3a538b"/><path d="M179.2,233.7L183.9,237.8L180.3,234.1L175.6,230.9Z" fill="#3a538b"/><path d="M328.1,271.7L332.8,270.1L329.2,275.9L324.5,277.4Z" fill="#481d6f"/><path d="M253.7,158.6L258.4,149.7L254.8,169.7L250.0,177.5Z" fill="#2ab07f"/><path d="M250.9,281.2L255.6,284.3L252.0,284.2L247.3,282.5Z" fill="#470d60"/><path d="M244.5,227.0L249.2,204.7L245.6,204.9L240.9,226.7Z" fill="#38588c"/><path d="M222.3,268.5L227.0,275.0L223.4,274.6L218.7,268.3Z" fill="#482374"/><path d="M259.2,283.0L263.9,285.3L260.3,285.0L255.6,284.3Z" fill="#470d60"/><path d="M284.5,137.1L289.2,154.3L285.6,164.4L280.9,148.8Z" fill="#5ac864"/><path d="M369.5,239.0L374.2,235.0L370.6,238.4L365.9,243.5Z" fill="#3d4e8a"/><path d="M210.3,260.2L215.1,267.5L211.4,266.1L206.7,258.8Z" fill="#46327e"/><path d="M258.4,149.7L263.1,145.8L259.5,166.2L254.8,169.7Z" fill="#3bbb75"/><path d="M242.6,278.2L247.3,282.5L243.7,282.7L238.9,279.4Z" fill="#471365"/><path d="M364.8,243.2L369.5,239.0L365.9,243.5L361.2,248.5Z" fill="#3e4989"/><path d="M395.6,232.8L400.3,233.9L396.7,229.2L392.0,229.0Z" fill="#38588c"/><path d="M267.6,283.9L272.3,285.7L268.7,285.4L263.9,285.3Z" fill="#46075a"/><path d="M307.6,229.9L312.3,232.6L308.7,211.6L303.9,207.6Z" fill="#38588c"/><path d="M310.3,278.9L315.1,279.0L311.4,282.6L306.7,283.0Z" fill="#471365"/><path d="M360.1,247.4L364.8,243.2L361.2,248.5L356.5,253.4Z" fill="#424086"/><path d="M296.4,147.3L301.2,168.2L297.5,168.8L292.8,148.3Z" fill="#42be71"/><path d="M279.2,262.8L283.9,253.8L280.3,237.3L275.6,249.3Z" fill="#482374"/><path d="M162.5,230.6L167.3,228.2L163.7,226.7L158.9,229.9Z" fill="#38588c"/><path d="M297.3,282.1L302.0,282.9L298.4,284.8L293.7,285.1Z" fill="#470d60"/><path d="M355.3,251.4L360.1,247.4L356.5,253.4L351.7,257.9Z" fill="#443b84"/><path d="M387.3,229.6L392.0,229.0L388.4,226.7L383.7,228.7Z" fill="#365c8d"/><path d="M270.9,260.9L275.6,249.3L272.0,234.2L267.3,248.9Z" fill="#482878"/><path d="M275.9,283.8L280.6,285.5L277.0,285.8L272.3,285.7Z" fill="#470d60"/><path d="M307.3,174.5L312.0,191.9L308.4,180.2L303.7,160.9Z" fill="#1f9e89"/><path d="M399.2,237.9L404.0,239.5L400.3,233.9L395.6,232.8Z" fill="#3d4e8a"/><path d="M170.9,230.0L175.6,230.9L172.0,228.1L167.3,228.2Z" fill="#365c8d"/><path d="M182.8,236.6L187.5,241.3L183.9,237.8L179.2,233.7Z" fill="#3a538b"/><path d="M234.2,273.8L238.9,279.4L235.3,279.8L230.6,274.7Z" fill="#481d6f"/><path d="M157.8,235.0L162.5,230.6L158.9,229.9L154.2,234.9Z" fill="#3a538b"/><path d="M350.6,255.1L355.3,251.4L351.7,257.9L347.0,261.8Z" fill="#453781"/><path d="M198.4,249.8L203.1,256.9L199.5,254.3L194.8,247.4Z" fill="#424086"/><path d="M258.9,252.6L263.7,236.5L260.1,224.9L255.3,243.5Z" fill="#453781"/><path d="M323.4,272.6L328.1,271.7L324.5,277.4L319.8,278.4Z" fill="#481d6f"/><path d="M402.8,243.9L407.6,245.8L404.0,239.5L399.2,237.9Z" fill="#404588"/><path d="M406.5,250.4L411.2,252.0L407.6,245.8L402.8,243.9Z" fill="#443b84"/><path d="M309.8,197.8L314.5,209.1L310.9,191.0L306.2,177.4Z" fill="#277f8e"/><path d="M284.2,282.8L288.9,284.4L285.3,285.8L280.6,285.5Z" fill="#470d60"/><path d="M345.9,258.3L350.6,255.1L347.0,261.8L342.3,265.2Z" fill="#453781"/><path d="M248.1,230.1L252.8,208.2L249.2,204.7L244.5,227.0Z" fill="#38588c"/><path d="M382.6,231.2L387.3,229.6L383.7,228.7L378.9,231.5Z" fill="#365c8d"/><path d="M308.7,211.6L313.4,218.4L309.8,197.8L305.1,189.1Z" fill="#2d708e"/><path d="M213.9,261.0L218.7,268.3L215.1,267.5L210.3,260.2Z" fill="#46327e"/><path d="M255.3,243.5L260.1,224.9L256.4,215.1L251.7,235.7Z" fill="#404588"/><path d="M390.9,232.4L395.6,232.8L392.0,229.0L387.3,229.6Z" fill="#38588c"/><path d="M305.6,278.3L310.3,278.9L306.7,283.0L302.0,282.9Z" fill="#48186a"/><path d="M300.0,151.6L304.8,172.1L301.2,168.2L296.4,147.3Z" fill="#3bbb75"/><path d="M186.4,239.3L191.2,244.5L187.5,241.3L182.8,236.6Z" fill="#3d4e8a"/><path d="M283.9,253.8L288.7,245.1L285.1,226.0L280.3,237.3Z" fill="#453781"/><path d="M303.7,160.9L308.4,180.2L304.8,172.1L300.0,151.6Z" fill="#2ab07f"/><path d="M225.9,268.0L230.6,274.7L227.0,275.0L222.3,268.5Z" fill="#482878"/><path d="M341.2,261.0L345.9,258.3L342.3,265.2L337.6,267.9Z" fill="#46327e"/><path d="M251.7,235.7L256.4,215.1L252.8,208.2L248.1,230.1Z" fill="#3d4e8a"/><path d="M174.5,232.1L179.2,233.7L175.6,230.9L170.9,230.0Z" fill="#38588c"/><path d="M166.2,231.6L170.9,230.0L167.3,228.2L162.5,230.6Z" fill="#38588c"/><path d="M202.0,251.7L206.7,258.8L203.1,256.9L198.4,249.8Z" fill="#424086"/><path d="M292.6,280.5L297.3,282.1L293.7,285.1L288.9,284.4Z" fill="#471365"/><path d="M254.5,278.8L259.2,283.0L255.6,284.3L250.9,281.2Z" fill="#48186a"/><path d="M247.8,174.6L252.5,156.5L248.9,171.7L244.2,187.8Z" fill="#1f9e89"/><path d="M318.7,273.0L323.4,272.6L319.8,278.4L315.1,279.0Z" fill="#481d6f"/><path d="M377.8,233.4L382.6,231.2L378.9,231.5L374.2,235.0Z" fill="#38588c"/><path d="M262.8,280.4L267.6,283.9L263.9,285.3L259.2,283.0Z" fill="#471365"/><path d="M302.8,229.8L307.6,229.9L303.9,207.6L299.2,207.1Z" fill="#38588c"/><path d="M246.2,276.1L250.9,281.2L247.3,282.5L242.6,278.2Z" fill="#481d6f"/><path d="M245.6,204.9L250.3,181.5L246.7,186.3L242.0,208.4Z" fill="#2a778e"/><path d="M394.5,236.8L399.2,237.9L395.6,232.8L390.9,232.4Z" fill="#3a538b"/><path d="M161.4,235.4L166.2,231.6L162.5,230.6L157.8,235.0Z" fill="#3a538b"/><path d="M271.2,280.7L275.9,283.8L272.3,285.7L267.6,283.9Z" fill="#471365"/><path d="M336.5,263.2L341.2,261.0L337.6,267.9L332.8,270.1Z" fill="#46327e"/><path d="M267.3,248.9L272.0,234.2L268.4,218.9L263.7,236.5Z" fill="#443b84"/><path d="M373.1,236.2L377.8,233.4L374.2,235.0L369.5,239.0Z" fill="#38588c"/><path d="M398.1,242.5L402.8,243.9L399.2,237.9L394.5,236.8Z" fill="#3d4e8a"/><path d="M190.1,241.8L194.8,247.4L191.2,244.5L186.4,239.3Z" fill="#3d4e8a"/><path d="M275.6,249.3L280.3,237.3L276.7,219.3L272.0,234.2Z" fill="#443b84"/><path d="M237.8,272.2L242.6,278.2L238.9,279.4L234.2,273.8Z" fill="#482374"/><path d="M288.7,245.1L293.4,237.7L289.8,216.7L285.1,226.0Z" fill="#404588"/><path d="M401.7,248.9L406.5,250.4L402.8,243.9L398.1,242.5Z" fill="#404588"/><path d="M386.2,232.8L390.9,232.4L387.3,229.6L382.6,231.2Z" fill="#365c8d"/><path d="M178.1,234.3L182.8,236.6L179.2,233.7L174.5,232.1Z" fill="#38588c"/><path d="M279.5,280.0L284.2,282.8L280.6,285.5L275.9,283.8Z" fill="#48186a"/><path d="M368.4,239.4L373.1,236.2L369.5,239.0L364.8,243.2Z" fill="#3a538b"/><path d="M298.1,232.4L302.8,229.8L299.2,207.1L294.5,210.2Z" fill="#38588c"/><path d="M217.6,261.2L222.3,268.5L218.7,268.3L213.9,261.0Z" fill="#453781"/><path d="M169.8,233.0L174.5,232.1L170.9,230.0L166.2,231.6Z" fill="#365c8d"/><path d="M246.7,186.3L251.4,164.5L247.8,174.6L243.1,194.7Z" fill="#218e8d"/><path d="M300.9,276.9L305.6,278.3L302.0,282.9L297.3,282.1Z" fill="#481d6f"/><path d="M205.6,253.1L210.3,260.2L206.7,258.8L202.0,251.7Z" fill="#424086"/><path d="M331.7,264.7L336.5,263.2L332.8,270.1L328.1,271.7Z" fill="#472d7b"/><path d="M293.4,237.7L298.1,232.4L294.5,210.2L289.8,216.7Z" fill="#3d4e8a"/><path d="M314.0,272.8L318.7,273.0L315.1,279.0L310.3,278.9Z" fill="#482374"/><path d="M363.7,242.7L368.4,239.4L364.8,243.2L360.1,247.4Z" fill="#3d4e8a"/><path d="M271.4,129.4L276.2,136.7L272.5,153.5L267.8,147.1Z" fill="#81d34d"/><path d="M229.5,267.0L234.2,273.8L230.6,274.7L225.9,268.0Z" fill="#472d7b"/><path d="M359.0,246.0L363.7,242.7L360.1,247.4L355.3,251.4Z" fill="#3e4989"/><path d="M389.8,236.3L394.5,236.8L390.9,232.4L386.2,232.8Z" fill="#38588c"/><path d="M287.8,278.1L292.6,280.5L288.9,284.4L284.2,282.8Z" fill="#481d6f"/><path d="M193.7,244.0L198.4,249.8L194.8,247.4L190.1,241.8Z" fill="#3d4e8a"/><path d="M381.5,233.9L386.2,232.8L382.6,231.2L377.8,233.4Z" fill="#365c8d"/><path d="M165.0,236.2L169.8,233.0L166.2,231.6L161.4,235.4Z" fill="#38588c"/><path d="M181.7,236.4L186.4,239.3L182.8,236.6L178.1,234.3Z" fill="#38588c"/><path d="M288.1,130.2L292.8,148.3L289.2,154.3L284.5,137.1Z" fill="#81d34d"/><path d="M354.2,249.2L359.0,246.0L355.3,251.4L350.6,255.1Z" fill="#404588"/><path d="M306.2,177.4L310.9,191.0L307.3,174.5L302.6,158.8Z" fill="#1f9e89"/><path d="M263.7,236.5L268.4,218.9L264.8,204.7L260.1,224.9Z" fill="#3a538b"/><path d="M393.4,241.4L398.1,242.5L394.5,236.8L389.8,236.3Z" fill="#3d4e8a"/><path d="M327.0,265.7L331.7,264.7L328.1,271.7L323.4,272.6Z" fill="#46327e"/><path d="M258.1,275.6L262.8,280.4L259.2,283.0L254.5,278.8Z" fill="#482374"/><path d="M303.9,207.6L308.7,211.6L305.1,189.1L300.3,183.9Z" fill="#2a778e"/><path d="M173.4,234.5L178.1,234.3L174.5,232.1L169.8,233.0Z" fill="#365c8d"/><path d="M397.0,247.6L401.7,248.9L398.1,242.5L393.4,241.4Z" fill="#3e4989"/><path d="M249.8,273.4L254.5,278.8L250.9,281.2L246.2,276.1Z" fill="#482374"/><path d="M266.5,276.5L271.2,280.7L267.6,283.9L262.8,280.4Z" fill="#481d6f"/><path d="M249.2,204.7L253.9,180.9L250.3,181.5L245.6,204.9Z" fill="#297b8e"/><path d="M349.5,252.0L354.2,249.2L350.6,255.1L345.9,258.3Z" fill="#404588"/><path d="M376.7,235.5L381.5,233.9L377.8,233.4L373.1,236.2Z" fill="#365c8d"/><path d="M209.2,254.0L213.9,261.0L210.3,260.2L205.6,253.1Z" fill="#424086"/><path d="M252.5,156.5L257.3,141.8L253.7,158.6L248.9,171.7Z" fill="#35b779"/><path d="M309.2,272.0L314.0,272.8L310.3,278.9L305.6,278.3Z" fill="#482878"/><path d="M280.3,237.3L285.1,226.0L281.4,205.5L276.7,219.3Z" fill="#3a538b"/><path d="M221.2,261.0L225.9,268.0L222.3,268.5L217.6,261.2Z" fill="#453781"/><path d="M296.2,275.0L300.9,276.9L297.3,282.1L292.6,280.5Z" fill="#482374"/><path d="M241.4,270.0L246.2,276.1L242.6,278.2L237.8,272.2Z" fill="#472d7b"/><path d="M197.3,245.9L202.0,251.7L198.4,249.8L193.7,244.0Z" fill="#3d4e8a"/><path d="M274.8,276.3L279.5,280.0L275.9,283.8L271.2,280.7Z" fill="#482374"/><path d="M385.1,236.4L389.8,236.3L386.2,232.8L381.5,233.9Z" fill="#38588c"/><path d="M185.3,238.5L190.1,241.8L186.4,239.3L181.7,236.4Z" fill="#38588c"/><path d="M279.8,123.8L284.5,137.1L280.9,148.8L276.2,136.7Z" fill="#95d840"/><path d="M344.8,254.4L349.5,252.0L345.9,258.3L341.2,261.0Z" fill="#424086"/><path d="M168.7,237.3L173.4,234.5L169.8,233.0L165.0,236.2Z" fill="#38588c"/><path d="M305.1,189.1L309.8,197.8L306.2,177.4L301.4,166.8Z" fill="#218e8d"/><path d="M372.0,237.6L376.7,235.5L373.1,236.2L368.4,239.4Z" fill="#38588c"/><path d="M272.0,234.2L276.7,219.3L273.1,201.2L268.4,218.9Z" fill="#38588c"/><path d="M322.3,266.1L327.0,265.7L323.4,272.6L318.7,273.0Z" fill="#46327e"/><path d="M260.1,224.9L264.8,204.7L261.2,193.0L256.4,215.1Z" fill="#32648e"/><path d="M177.0,236.2L181.7,236.4L178.1,234.3L173.4,234.5Z" fill="#365c8d"/><path d="M233.1,265.5L237.8,272.2L234.2,273.8L229.5,267.0Z" fill="#46327e"/><path d="M283.1,274.9L287.8,278.1L284.2,282.8L279.5,280.0Z" fill="#482374"/><path d="M388.7,240.7L393.4,241.4L389.8,236.3L385.1,236.4Z" fill="#3a538b"/><path d="M266.7,127.7L271.4,129.4L267.8,147.1L263.1,145.8Z" fill="#8bd646"/><path d="M252.8,208.2L257.6,184.8L253.9,180.9L249.2,204.7Z" fill="#2a778e"/><path d="M367.3,239.9L372.0,237.6L368.4,239.4L363.7,242.7Z" fill="#38588c"/><path d="M340.1,256.4L344.8,254.4L341.2,261.0L336.5,263.2Z" fill="#424086"/><path d="M392.3,246.6L397.0,247.6L393.4,241.4L388.7,240.7Z" fill="#3d4e8a"/><path d="M380.3,237.0L385.1,236.4L381.5,233.9L376.7,235.5Z" fill="#365c8d"/><path d="M256.4,215.1L261.2,193.0L257.6,184.8L252.8,208.2Z" fill="#2d708e"/><path d="M200.9,247.4L205.6,253.1L202.0,251.7L197.3,245.9Z" fill="#3d4e8a"/><path d="M212.8,254.5L217.6,261.2L213.9,261.0L209.2,254.0Z" fill="#404588"/><path d="M188.9,240.5L193.7,244.0L190.1,241.8L185.3,238.5Z" fill="#38588c"/><path d="M304.5,270.6L309.2,272.0L305.6,278.3L300.9,276.9Z" fill="#472d7b"/><path d="M299.2,207.1L303.9,207.6L300.3,183.9L295.6,182.9Z" fill="#297b8e"/><path d="M257.3,141.8L262.0,131.9L258.4,149.7L253.7,158.6Z" fill="#5ac864"/><path d="M285.1,226.0L289.8,216.7L286.2,194.2L281.4,205.5Z" fill="#32648e"/><path d="M362.6,242.4L367.3,239.9L363.7,242.7L359.0,246.0Z" fill="#3a538b"/><path d="M302.6,158.8L307.3,174.5L303.7,160.9L298.9,143.8Z" fill="#35b779"/><path d="M172.3,238.5L177.0,236.2L173.4,234.5L168.7,237.3Z" fill="#38588c"/><path d="M317.6,266.0L322.3,266.1L318.7,273.0L314.0,272.8Z" fill="#453781"/><path d="M224.8,260.2L229.5,267.0L225.9,268.0L221.2,261.0Z" fill="#443b84"/><path d="M291.5,272.4L296.2,275.0L292.6,280.5L287.8,278.1Z" fill="#472d7b"/><path d="M291.7,128.9L296.4,147.3L292.8,148.3L288.1,130.2Z" fill="#8bd646"/><path d="M335.3,258.0L340.1,256.4L336.5,263.2L331.7,264.7Z" fill="#424086"/><path d="M250.3,181.5L255.0,158.5L251.4,164.5L246.7,186.3Z" fill="#1f9a8a"/><path d="M262.0,131.9L266.7,127.7L263.1,145.8L258.4,149.7Z" fill="#81d34d"/><path d="M180.6,237.9L185.3,238.5L181.7,236.4L177.0,236.2Z" fill="#365c8d"/><path d="M261.7,271.6L266.5,276.5L262.8,280.4L258.1,275.6Z" fill="#472d7b"/><path d="M253.4,270.0L258.1,275.6L254.5,278.8L249.8,273.4Z" fill="#472d7b"/><path d="M251.4,164.5L256.2,144.7L252.5,156.5L247.8,174.6Z" fill="#2ab07f"/><path d="M384.0,240.6L388.7,240.7L385.1,236.4L380.3,237.0Z" fill="#38588c"/><path d="M375.6,238.1L380.3,237.0L376.7,235.5L372.0,237.6Z" fill="#365c8d"/><path d="M357.8,244.9L362.6,242.4L359.0,246.0L354.2,249.2Z" fill="#3a538b"/><path d="M270.1,272.0L274.8,276.3L271.2,280.7L266.5,276.5Z" fill="#472d7b"/><path d="M245.1,267.3L249.8,273.4L246.2,276.1L241.4,270.0Z" fill="#46327e"/><path d="M289.8,216.7L294.5,210.2L290.9,186.4L286.2,194.2Z" fill="#2d708e"/><path d="M294.5,210.2L299.2,207.1L295.6,182.9L290.9,186.4Z" fill="#2a778e"/><path d="M192.6,242.3L197.3,245.9L193.7,244.0L188.9,240.5Z" fill="#38588c"/><path d="M387.6,245.9L392.3,246.6L388.7,240.7L384.0,240.6Z" fill="#3d4e8a"/><path d="M204.5,248.5L209.2,254.0L205.6,253.1L200.9,247.4Z" fill="#3d4e8a"/><path d="M353.1,247.2L357.8,244.9L354.2,249.2L349.5,252.0Z" fill="#3d4e8a"/><path d="M268.4,218.9L273.1,201.2L269.5,184.6L264.8,204.7Z" fill="#2f6c8e"/><path d="M330.6,259.0L335.3,258.0L331.7,264.7L327.0,265.7Z" fill="#424086"/><path d="M236.7,263.6L241.4,270.0L237.8,272.2L233.1,265.5Z" fill="#443b84"/><path d="M278.4,271.2L283.1,274.9L279.5,280.0L274.8,276.3Z" fill="#472d7b"/><path d="M298.9,143.8L303.7,160.9L300.0,151.6L295.3,133.5Z" fill="#5ac864"/><path d="M370.9,239.5L375.6,238.1L372.0,237.6L367.3,239.9Z" fill="#365c8d"/><path d="M216.4,254.6L221.2,261.0L217.6,261.2L212.8,254.5Z" fill="#404588"/><path d="M175.9,239.9L180.6,237.9L177.0,236.2L172.3,238.5Z" fill="#38588c"/><path d="M295.3,133.5L300.0,151.6L296.4,147.3L291.7,128.9Z" fill="#81d34d"/><path d="M276.7,219.3L281.4,205.5L277.8,185.0L273.1,201.2Z" fill="#2f6c8e"/><path d="M299.8,268.7L304.5,270.6L300.9,276.9L296.2,275.0Z" fill="#46327e"/><path d="M184.2,239.6L188.9,240.5L185.3,238.5L180.6,237.9Z" fill="#365c8d"/><path d="M312.8,265.3L317.6,266.0L314.0,272.8L309.2,272.0Z" fill="#453781"/><path d="M379.2,240.9L384.0,240.6L380.3,237.0L375.6,238.1Z" fill="#38588c"/><path d="M348.4,249.3L353.1,247.2L349.5,252.0L344.8,254.4Z" fill="#3d4e8a"/><path d="M300.3,183.9L305.1,189.1L301.4,166.8L296.7,160.5Z" fill="#1f9a8a"/><path d="M228.4,259.2L233.1,265.5L229.5,267.0L224.8,260.2Z" fill="#424086"/><path d="M366.2,241.2L370.9,239.5L367.3,239.9L362.6,242.4Z" fill="#38588c"/><path d="M196.2,243.8L200.9,247.4L197.3,245.9L192.6,242.3Z" fill="#38588c"/><path d="M286.7,269.3L291.5,272.4L287.8,278.1L283.1,274.9Z" fill="#46327e"/><path d="M301.4,166.8L306.2,177.4L302.6,158.8L297.8,146.7Z" fill="#2ab07f"/><path d="M325.9,259.5L330.6,259.0L327.0,265.7L322.3,266.1Z" fill="#424086"/><path d="M382.8,245.6L387.6,245.9L384.0,240.6L379.2,240.9Z" fill="#3a538b"/><path d="M275.0,115.7L279.8,123.8L276.2,136.7L271.4,129.4Z" fill="#c0df25"/><path d="M208.1,249.3L212.8,254.5L209.2,254.0L204.5,248.5Z" fill="#3d4e8a"/><path d="M343.7,251.1L348.4,249.3L344.8,254.4L340.1,256.4Z" fill="#3d4e8a"/><path d="M179.5,241.4L184.2,239.6L180.6,237.9L175.9,239.9Z" fill="#38588c"/><path d="M253.9,180.9L258.7,157.5L255.0,158.5L250.3,181.5Z" fill="#1f9e89"/><path d="M374.5,241.5L379.2,240.9L375.6,238.1L370.9,239.5Z" fill="#38588c"/><path d="M187.8,241.3L192.6,242.3L188.9,240.5L184.2,239.6Z" fill="#365c8d"/><path d="M283.4,116.1L288.1,130.2L284.5,137.1L279.8,123.8Z" fill="#c0df25"/><path d="M361.5,242.9L366.2,241.2L362.6,242.4L357.8,244.9Z" fill="#38588c"/><path d="M257.0,266.3L261.7,271.6L258.1,275.6L253.4,270.0Z" fill="#443b84"/><path d="M264.8,204.7L269.5,184.6L265.9,171.1L261.2,193.0Z" fill="#277f8e"/><path d="M220.1,254.4L224.8,260.2L221.2,261.0L216.4,254.6Z" fill="#3e4989"/><path d="M308.1,264.2L312.8,265.3L309.2,272.0L304.5,270.6Z" fill="#443b84"/><path d="M248.7,264.4L253.4,270.0L249.8,273.4L245.1,267.3Z" fill="#443b84"/><path d="M265.3,267.3L270.1,272.0L266.5,276.5L261.7,271.6Z" fill="#453781"/><path d="M295.1,266.4L299.8,268.7L296.2,275.0L291.5,272.4Z" fill="#443b84"/><path d="M339.0,252.6L343.7,251.1L340.1,256.4L335.3,258.0Z" fill="#3d4e8a"/><path d="M256.2,144.7L260.9,128.9L257.3,141.8L252.5,156.5Z" fill="#5ac864"/><path d="M199.8,245.2L204.5,248.5L200.9,247.4L196.2,243.8Z" fill="#38588c"/><path d="M321.2,259.6L325.9,259.5L322.3,266.1L317.6,266.0Z" fill="#404588"/><path d="M378.1,245.7L382.8,245.6L379.2,240.9L374.5,241.5Z" fill="#3a538b"/><path d="M240.3,261.5L245.1,267.3L241.4,270.0L236.7,263.6Z" fill="#424086"/><path d="M273.7,267.1L278.4,271.2L274.8,276.3L270.1,272.0Z" fill="#443b84"/><path d="M281.4,205.5L286.2,194.2L282.6,171.9L277.8,185.0Z" fill="#277f8e"/><path d="M356.7,244.7L361.5,242.9L357.8,244.9L353.1,247.2Z" fill="#38588c"/><path d="M369.8,242.4L374.5,241.5L370.9,239.5L366.2,241.2Z" fill="#365c8d"/><path d="M183.1,243.1L187.8,241.3L184.2,239.6L179.5,241.4Z" fill="#38588c"/><path d="M257.6,184.8L262.3,161.8L258.7,157.5L253.9,180.9Z" fill="#1f9a8a"/><path d="M261.2,193.0L265.9,171.1L262.3,161.8L257.6,184.8Z" fill="#218e8d"/><path d="M191.4,242.9L196.2,243.8L192.6,242.3L187.8,241.3Z" fill="#365c8d"/><path d="M211.7,250.0L216.4,254.6L212.8,254.5L208.1,249.3Z" fill="#3a538b"/><path d="M295.6,182.9L300.3,183.9L296.7,160.5L292.0,159.1Z" fill="#1f9e89"/><path d="M232.0,257.9L236.7,263.6L233.1,265.5L228.4,259.2Z" fill="#3e4989"/><path d="M282.0,265.9L286.7,269.3L283.1,274.9L278.4,271.2Z" fill="#443b84"/><path d="M255.0,158.5L259.8,137.8L256.2,144.7L251.4,164.5Z" fill="#3bbb75"/><path d="M334.2,253.7L339.0,252.6L335.3,258.0L330.6,259.0Z" fill="#3d4e8a"/><path d="M273.1,201.2L277.8,185.0L274.2,166.5L269.5,184.6Z" fill="#24868e"/><path d="M352.0,246.4L356.7,244.7L353.1,247.2L348.4,249.3Z" fill="#38588c"/><path d="M365.1,243.6L369.8,242.4L366.2,241.2L361.5,242.9Z" fill="#365c8d"/><path d="M373.4,246.1L378.1,245.7L374.5,241.5L369.8,242.4Z" fill="#38588c"/><path d="M303.4,262.7L308.1,264.2L304.5,270.6L299.8,268.7Z" fill="#424086"/><path d="M316.5,259.4L321.2,259.6L317.6,266.0L312.8,265.3Z" fill="#404588"/><path d="M203.4,246.4L208.1,249.3L204.5,248.5L199.8,245.2Z" fill="#38588c"/><path d="M286.2,194.2L290.9,186.4L287.3,163.0L282.6,171.9Z" fill="#218e8d"/><path d="M223.7,254.1L228.4,259.2L224.8,260.2L220.1,254.4Z" fill="#3d4e8a"/><path d="M297.8,146.7L302.6,158.8L298.9,143.8L294.2,130.4Z" fill="#5ac864"/><path d="M270.3,113.7L275.0,115.7L271.4,129.4L266.7,127.7Z" fill="#cae11f"/><path d="M290.9,186.4L295.6,182.9L292.0,159.1L287.3,163.0Z" fill="#1f9a8a"/><path d="M186.7,244.8L191.4,242.9L187.8,241.3L183.1,243.1Z" fill="#38588c"/><path d="M347.3,248.0L352.0,246.4L348.4,249.3L343.7,251.1Z" fill="#38588c"/><path d="M290.3,263.9L295.1,266.4L291.5,272.4L286.7,269.3Z" fill="#424086"/><path d="M195.1,244.6L199.8,245.2L196.2,243.8L191.4,242.9Z" fill="#365c8d"/><path d="M260.9,128.9L265.6,118.2L262.0,131.9L257.3,141.8Z" fill="#95d840"/><path d="M329.5,254.4L334.2,253.7L330.6,259.0L325.9,259.5Z" fill="#3d4e8a"/><path d="M287.0,114.5L291.7,128.9L288.1,130.2L283.4,116.1Z" fill="#cae11f"/><path d="M360.3,244.8L365.1,243.6L361.5,242.9L356.7,244.7Z" fill="#365c8d"/><path d="M252.3,261.5L257.0,266.3L253.4,270.0L248.7,264.4Z" fill="#404588"/><path d="M260.6,262.8L265.3,267.3L261.7,271.6L257.0,266.3Z" fill="#404588"/><path d="M215.3,250.4L220.1,254.4L216.4,254.6L211.7,250.0Z" fill="#3a538b"/><path d="M296.7,160.5L301.4,166.8L297.8,146.7L293.1,139.4Z" fill="#3bbb75"/><path d="M368.7,246.7L373.4,246.1L369.8,242.4L365.1,243.6Z" fill="#38588c"/><path d="M243.9,259.4L248.7,264.4L245.1,267.3L240.3,261.5Z" fill="#3e4989"/><path d="M265.6,118.2L270.3,113.7L266.7,127.7L262.0,131.9Z" fill="#c0df25"/><path d="M269.0,263.2L273.7,267.1L270.1,272.0L265.3,267.3Z" fill="#404588"/><path d="M342.6,249.3L347.3,248.0L343.7,251.1L339.0,252.6Z" fill="#38588c"/><path d="M235.6,256.7L240.3,261.5L236.7,263.6L232.0,257.9Z" fill="#3d4e8a"/><path d="M207.0,247.6L211.7,250.0L208.1,249.3L203.4,246.4Z" fill="#38588c"/><path d="M311.7,258.8L316.5,259.4L312.8,265.3L308.1,264.2Z" fill="#3e4989"/><path d="M190.3,246.6L195.1,244.6L191.4,242.9L186.7,244.8Z" fill="#38588c"/><path d="M355.6,246.2L360.3,244.8L356.7,244.7L352.0,246.4Z" fill="#365c8d"/><path d="M277.3,262.6L282.0,265.9L278.4,271.2L273.7,267.1Z" fill="#404588"/><path d="M298.7,261.1L303.4,262.7L299.8,268.7L295.1,266.4Z" fill="#3e4989"/><path d="M294.2,130.4L298.9,143.8L295.3,133.5L290.6,119.4Z" fill="#95d840"/><path d="M198.7,246.2L203.4,246.4L199.8,245.2L195.1,244.6Z" fill="#365c8d"/><path d="M324.8,254.9L329.5,254.4L325.9,259.5L321.2,259.6Z" fill="#3d4e8a"/><path d="M269.5,184.6L274.2,166.5L270.6,151.4L265.9,171.1Z" fill="#1f9e89"/><path d="M227.3,253.7L232.0,257.9L228.4,259.2L223.7,254.1Z" fill="#3a538b"/><path d="M290.6,119.4L295.3,133.5L291.7,128.9L287.0,114.5Z" fill="#c0df25"/><path d="M364.0,247.6L368.7,246.7L365.1,243.6L360.3,244.8Z" fill="#38588c"/><path d="M278.7,107.5L283.4,116.1L279.8,123.8L275.0,115.7Z" fill="#eae51a"/><path d="M258.7,157.5L263.4,136.5L259.8,137.8L255.0,158.5Z" fill="#42be71"/><path d="M277.8,185.0L282.6,171.9L278.9,151.8L274.2,166.5Z" fill="#1f9e89"/><path d="M337.8,250.5L342.6,249.3L339.0,252.6L334.2,253.7Z" fill="#38588c"/><path d="M285.6,261.3L290.3,263.9L286.7,269.3L282.0,265.9Z" fill="#3e4989"/><path d="M218.9,250.9L223.7,254.1L220.1,254.4L215.3,250.4Z" fill="#38588c"/><path d="M350.9,247.5L355.6,246.2L352.0,246.4L347.3,248.0Z" fill="#365c8d"/><path d="M259.8,137.8L264.5,121.2L260.9,128.9L256.2,144.7Z" fill="#81d34d"/><path d="M193.9,248.5L198.7,246.2L195.1,244.6L190.3,246.6Z" fill="#38588c"/><path d="M210.6,248.8L215.3,250.4L211.7,250.0L207.0,247.6Z" fill="#38588c"/><path d="M359.2,248.6L364.0,247.6L360.3,244.8L355.6,246.2Z" fill="#38588c"/><path d="M307.0,258.0L311.7,258.8L308.1,264.2L303.4,262.7Z" fill="#3d4e8a"/><path d="M320.1,255.1L324.8,254.9L321.2,259.6L316.5,259.4Z" fill="#3a538b"/><path d="M202.3,247.9L207.0,247.6L203.4,246.4L198.7,246.2Z" fill="#365c8d"/><path d="M265.9,171.1L270.6,151.4L267.0,141.1L262.3,161.8Z" fill="#2ab07f"/><path d="M255.9,258.9L260.6,262.8L257.0,266.3L252.3,261.5Z" fill="#3d4e8a"/><path d="M292.0,159.1L296.7,160.5L293.1,139.4L288.4,137.7Z" fill="#42be71"/><path d="M247.6,257.5L252.3,261.5L248.7,264.4L243.9,259.4Z" fill="#3d4e8a"/><path d="M333.1,251.5L337.8,250.5L334.2,253.7L329.5,254.4Z" fill="#38588c"/><path d="M262.3,161.8L267.0,141.1L263.4,136.5L258.7,157.5Z" fill="#3bbb75"/><path d="M264.2,259.7L269.0,263.2L265.3,267.3L260.6,262.8Z" fill="#3d4e8a"/><path d="M294.0,259.4L298.7,261.1L295.1,266.4L290.3,263.9Z" fill="#3d4e8a"/><path d="M346.2,248.8L350.9,247.5L347.3,248.0L342.6,249.3Z" fill="#365c8d"/><path d="M239.2,255.6L243.9,259.4L240.3,261.5L235.6,256.7Z" fill="#3a538b"/><path d="M230.9,253.5L235.6,256.7L232.0,257.9L227.3,253.7Z" fill="#38588c"/><path d="M282.6,171.9L287.3,163.0L283.7,141.9L278.9,151.8Z" fill="#2ab07f"/><path d="M272.6,259.7L277.3,262.6L273.7,267.1L269.0,263.2Z" fill="#3d4e8a"/><path d="M293.1,139.4L297.8,146.7L294.2,130.4L289.5,122.4Z" fill="#81d34d"/><path d="M354.5,249.7L359.2,248.6L355.6,246.2L350.9,247.5Z" fill="#38588c"/><path d="M197.6,250.6L202.3,247.9L198.7,246.2L193.9,248.5Z" fill="#38588c"/><path d="M222.6,251.5L227.3,253.7L223.7,254.1L218.9,250.9Z" fill="#38588c"/><path d="M287.3,163.0L292.0,159.1L288.4,137.7L283.7,141.9Z" fill="#3bbb75"/><path d="M315.3,255.2L320.1,255.1L316.5,259.4L311.7,258.8Z" fill="#3a538b"/><path d="M214.2,250.1L218.9,250.9L215.3,250.4L210.6,248.8Z" fill="#365c8d"/><path d="M205.9,249.7L210.6,248.8L207.0,247.6L202.3,247.9Z" fill="#365c8d"/><path d="M328.4,252.4L333.1,251.5L329.5,254.4L324.8,254.9Z" fill="#38588c"/><path d="M341.5,250.0L346.2,248.8L342.6,249.3L337.8,250.5Z" fill="#365c8d"/><path d="M280.9,259.1L285.6,261.3L282.0,265.9L277.3,262.6Z" fill="#3d4e8a"/><path d="M273.9,105.4L278.7,107.5L275.0,115.7L270.3,113.7Z" fill="#f4e61e"/><path d="M302.3,257.2L307.0,258.0L303.4,262.7L298.7,261.1Z" fill="#3a538b"/><path d="M282.3,105.8L287.0,114.5L283.4,116.1L278.7,107.5Z" fill="#f4e61e"/><path d="M264.5,121.2L269.2,110.1L265.6,118.2L260.9,128.9Z" fill="#c0df25"/><path d="M274.2,166.5L278.9,151.8L275.3,135.5L270.6,151.4Z" fill="#35b779"/><path d="M349.8,250.9L354.5,249.7L350.9,247.5L346.2,248.8Z" fill="#38588c"/><path d="M201.2,252.9L205.9,249.7L202.3,247.9L197.6,250.6Z" fill="#38588c"/><path d="M289.2,258.0L294.0,259.4L290.3,263.9L285.6,261.3Z" fill="#3a538b"/><path d="M336.7,251.3L341.5,250.0L337.8,250.5L333.1,251.5Z" fill="#365c8d"/><path d="M251.2,256.3L255.9,258.9L252.3,261.5L247.6,257.5Z" fill="#3a538b"/><path d="M242.8,255.0L247.6,257.5L243.9,259.4L239.2,255.6Z" fill="#38588c"/><path d="M263.4,136.5L268.1,119.6L264.5,121.2L259.8,137.8Z" fill="#8bd646"/><path d="M269.2,110.1L273.9,105.4L270.3,113.7L265.6,118.2Z" fill="#eae51a"/><path d="M323.7,253.1L328.4,252.4L324.8,254.9L320.1,255.1Z" fill="#38588c"/><path d="M259.5,257.1L264.2,259.7L260.6,262.8L255.9,258.9Z" fill="#3a538b"/><path d="M234.5,253.6L239.2,255.6L235.6,256.7L230.9,253.5Z" fill="#38588c"/><path d="M209.5,251.7L214.2,250.1L210.6,248.8L205.9,249.7Z" fill="#38588c"/><path d="M310.6,255.2L315.3,255.2L311.7,258.8L307.0,258.0Z" fill="#38588c"/><path d="M289.5,122.4L294.2,130.4L290.6,119.4L285.9,110.9Z" fill="#c0df25"/><path d="M226.2,252.3L230.9,253.5L227.3,253.7L222.6,251.5Z" fill="#365c8d"/><path d="M217.8,251.6L222.6,251.5L218.9,250.9L214.2,250.1Z" fill="#365c8d"/><path d="M345.1,252.3L349.8,250.9L346.2,248.8L341.5,250.0Z" fill="#38588c"/><path d="M267.8,257.5L272.6,259.7L269.0,263.2L264.2,259.7Z" fill="#3a538b"/><path d="M285.9,110.9L290.6,119.4L287.0,114.5L282.3,105.8Z" fill="#eae51a"/><path d="M297.6,256.6L302.3,257.2L298.7,261.1L294.0,259.4Z" fill="#38588c"/><path d="M204.8,255.5L209.5,251.7L205.9,249.7L201.2,252.9Z" fill="#3a538b"/><path d="M276.2,257.4L280.9,259.1L277.3,262.6L272.6,259.7Z" fill="#3a538b"/><path d="M288.4,137.7L293.1,139.4L289.5,122.4L284.8,120.4Z" fill="#8bd646"/><path d="M332.0,252.5L336.7,251.3L333.1,251.5L328.4,252.4Z" fill="#365c8d"/><path d="M270.6,151.4L275.3,135.5L271.7,124.5L267.0,141.1Z" fill="#5ac864"/><path d="M319.0,253.9L323.7,253.1L320.1,255.1L315.3,255.2Z" fill="#38588c"/><path d="M267.0,141.1L271.7,124.5L268.1,119.6L263.4,136.5Z" fill="#81d34d"/><path d="M278.9,151.8L283.7,141.9L280.1,124.9L275.3,135.5Z" fill="#5ac864"/><path d="M340.3,253.7L345.1,252.3L341.5,250.0L336.7,251.3Z" fill="#38588c"/><path d="M213.1,254.0L217.8,251.6L214.2,250.1L209.5,251.7Z" fill="#38588c"/><path d="M284.5,257.0L289.2,258.0L285.6,261.3L280.9,259.1Z" fill="#38588c"/><path d="M305.9,255.4L310.6,255.2L307.0,258.0L302.3,257.2Z" fill="#38588c"/><path d="M221.4,253.4L226.2,252.3L222.6,251.5L217.8,251.6Z" fill="#365c8d"/><path d="M229.8,253.6L234.5,253.6L230.9,253.5L226.2,252.3Z" fill="#365c8d"/><path d="M238.1,254.3L242.8,255.0L239.2,255.6L234.5,253.6Z" fill="#365c8d"/><path d="M283.7,141.9L288.4,137.7L284.8,120.4L280.1,124.9Z" fill="#81d34d"/><path d="M208.4,258.3L213.1,254.0L209.5,251.7L204.8,255.5Z" fill="#3a538b"/><path d="M246.5,255.1L251.2,256.3L247.6,257.5L242.8,255.0Z" fill="#38588c"/><path d="M327.3,253.8L332.0,252.5L328.4,252.4L323.7,253.1Z" fill="#365c8d"/><path d="M277.5,103.6L282.3,105.8L278.7,107.5L273.9,105.4Z" fill="#fde725"/><path d="M254.8,255.9L259.5,257.1L255.9,258.9L251.2,256.3Z" fill="#38588c"/><path d="M292.8,256.4L297.6,256.6L294.0,259.4L289.2,258.0Z" fill="#38588c"/><path d="M268.1,119.6L272.8,108.4L269.2,110.1L264.5,121.2Z" fill="#cae11f"/><path d="M263.1,256.4L267.8,257.5L264.2,259.7L259.5,257.1Z" fill="#38588c"/><path d="M335.6,255.2L340.3,253.7L336.7,251.3L332.0,252.5Z" fill="#38588c"/><path d="M314.2,254.8L319.0,253.9L315.3,255.2L310.6,255.2Z" fill="#365c8d"/><path d="M216.7,256.6L221.4,253.4L217.8,251.6L213.1,254.0Z" fill="#38588c"/><path d="M271.5,256.6L276.2,257.4L272.6,259.7L267.8,257.5Z" fill="#38588c"/><path d="M284.8,120.4L289.5,122.4L285.9,110.9L281.2,108.8Z" fill="#cae11f"/><path d="M212.0,261.6L216.7,256.6L213.1,254.0L208.4,258.3Z" fill="#3d4e8a"/><path d="M301.2,255.9L305.9,255.4L302.3,257.2L297.6,256.6Z" fill="#365c8d"/><path d="M272.8,108.4L277.5,103.6L273.9,105.4L269.2,110.1Z" fill="#f4e61e"/><path d="M225.1,255.8L229.8,253.6L226.2,252.3L221.4,253.4Z" fill="#38588c"/><path d="M322.6,255.2L327.3,253.8L323.7,253.1L319.0,253.9Z" fill="#365c8d"/><path d="M279.8,256.7L284.5,257.0L280.9,259.1L276.2,257.4Z" fill="#38588c"/><path d="M275.3,135.5L280.1,124.9L276.4,113.4L271.7,124.5Z" fill="#95d840"/><path d="M330.9,256.9L335.6,255.2L332.0,252.5L327.3,253.8Z" fill="#38588c"/><path d="M233.4,255.5L238.1,254.3L234.5,253.6L229.8,253.6Z" fill="#365c8d"/><path d="M281.2,108.8L285.9,110.9L282.3,105.8L277.5,103.6Z" fill="#f4e61e"/><path d="M241.7,255.7L246.5,255.1L242.8,255.0L238.1,254.3Z" fill="#365c8d"/><path d="M271.7,124.5L276.4,113.4L272.8,108.4L268.1,119.6Z" fill="#c0df25"/><path d="M309.5,255.9L314.2,254.8L310.6,255.2L305.9,255.4Z" fill="#365c8d"/><path d="M220.3,259.7L225.1,255.8L221.4,253.4L216.7,256.6Z" fill="#3a538b"/><path d="M288.1,256.7L292.8,256.4L289.2,258.0L284.5,257.0Z" fill="#365c8d"/><path d="M250.1,256.1L254.8,255.9L251.2,256.3L246.5,255.1Z" fill="#365c8d"/><path d="M215.6,265.1L220.3,259.7L216.7,256.6L212.0,261.6Z" fill="#3d4e8a"/><path d="M280.1,124.9L284.8,120.4L281.2,108.8L276.4,113.4Z" fill="#c0df25"/><path d="M258.4,256.5L263.1,256.4L259.5,257.1L254.8,255.9Z" fill="#365c8d"/><path d="M317.8,256.8L322.6,255.2L319.0,253.9L314.2,254.8Z" fill="#38588c"/><path d="M326.2,258.8L330.9,256.9L327.3,253.8L322.6,255.2Z" fill="#38588c"/><path d="M228.7,258.6L233.4,255.5L229.8,253.6L225.1,255.8Z" fill="#38588c"/><path d="M266.7,256.9L271.5,256.6L267.8,257.5L263.1,256.4Z" fill="#365c8d"/><path d="M296.5,256.8L301.2,255.9L297.6,256.6L292.8,256.4Z" fill="#365c8d"/><path d="M276.4,113.4L281.2,108.8L277.5,103.6L272.8,108.4Z" fill="#eae51a"/><path d="M237.0,258.1L241.7,255.7L238.1,254.3L233.4,255.5Z" fill="#38588c"/><path d="M275.1,257.3L279.8,256.7L276.2,257.4L271.5,256.6Z" fill="#365c8d"/><path d="M224.0,263.3L228.7,258.6L225.1,255.8L220.3,259.7Z" fill="#3d4e8a"/><path d="M219.2,269.1L224.0,263.3L220.3,259.7L215.6,265.1Z" fill="#3e4989"/><path d="M304.8,257.4L309.5,255.9L305.9,255.4L301.2,255.9Z" fill="#365c8d"/><path d="M245.3,258.0L250.1,256.1L246.5,255.1L241.7,255.7Z" fill="#38588c"/><path d="M283.4,257.7L288.1,256.7L284.5,257.0L279.8,256.7Z" fill="#365c8d"/><path d="M313.1,258.7L317.8,256.8L314.2,254.8L309.5,255.9Z" fill="#38588c"/><path d="M321.5,261.0L326.2,258.8L322.6,255.2L317.8,256.8Z" fill="#3a538b"/><path d="M253.7,258.1L258.4,256.5L254.8,255.9L250.1,256.1Z" fill="#365c8d"/><path d="M232.3,262.1L237.0,258.1L233.4,255.5L228.7,258.6Z" fill="#3a538b"/><path d="M222.8,273.3L227.6,267.3L224.0,263.3L219.2,269.1Z" fill="#404588"/><path d="M291.7,258.3L296.5,256.8L292.8,256.4L288.1,256.7Z" fill="#365c8d"/><path d="M227.6,267.3L232.3,262.1L228.7,258.6L224.0,263.3Z" fill="#3d4e8a"/><path d="M262.0,258.5L266.7,256.9L263.1,256.4L258.4,256.5Z" fill="#365c8d"/><path d="M240.6,261.4L245.3,258.0L241.7,255.7L237.0,258.1Z" fill="#38588c"/><path d="M300.1,259.3L304.8,257.4L301.2,255.9L296.5,256.8Z" fill="#38588c"/><path d="M270.3,258.9L275.1,257.3L271.5,256.6L266.7,256.9Z" fill="#365c8d"/><path d="M316.7,263.5L321.5,261.0L317.8,256.8L313.1,258.7Z" fill="#3a538b"/><path d="M308.4,261.0L313.1,258.7L309.5,255.9L304.8,257.4Z" fill="#38588c"/><path d="M226.5,277.8L231.2,271.8L227.6,267.3L222.8,273.3Z" fill="#443b84"/><path d="M235.9,266.1L240.6,261.4L237.0,258.1L232.3,262.1Z" fill="#3d4e8a"/><path d="M249.0,261.2L253.7,258.1L250.1,256.1L245.3,258.0Z" fill="#38588c"/><path d="M278.7,259.5L283.4,257.7L279.8,256.7L275.1,257.3Z" fill="#38588c"/><path d="M231.2,271.8L235.9,266.1L232.3,262.1L227.6,267.3Z" fill="#404588"/><path d="M287.0,260.5L291.7,258.3L288.1,256.7L283.4,257.7Z" fill="#38588c"/><path d="M257.3,261.3L262.0,258.5L258.4,256.5L253.7,258.1Z" fill="#38588c"/><path d="M230.1,282.4L234.8,276.5L231.2,271.8L226.5,277.8Z" fill="#453781"/><path d="M312.0,266.3L316.7,263.5L313.1,258.7L308.4,261.0Z" fill="#3d4e8a"/><path d="M244.2,265.4L249.0,261.2L245.3,258.0L240.6,261.4Z" fill="#3a538b"/><path d="M295.3,261.8L300.1,259.3L296.5,256.8L291.7,258.3Z" fill="#38588c"/><path d="M303.7,263.7L308.4,261.0L304.8,257.4L300.1,259.3Z" fill="#3a538b"/><path d="M234.8,276.5L239.5,270.7L235.9,266.1L231.2,271.8Z" fill="#424086"/><path d="M265.6,261.6L270.3,258.9L266.7,256.9L262.0,258.5Z" fill="#38588c"/><path d="M239.5,270.7L244.2,265.4L240.6,261.4L235.9,266.1Z" fill="#3e4989"/><path d="M274.0,262.3L278.7,259.5L275.1,257.3L270.3,258.9Z" fill="#38588c"/><path d="M252.6,265.2L257.3,261.3L253.7,258.1L249.0,261.2Z" fill="#3a538b"/><path d="M233.7,286.9L238.4,281.4L234.8,276.5L230.1,282.4Z" fill="#46327e"/><path d="M307.3,269.5L312.0,266.3L308.4,261.0L303.7,263.7Z" fill="#3d4e8a"/><path d="M238.4,281.4L243.1,275.7L239.5,270.7L234.8,276.5Z" fill="#443b84"/><path d="M282.3,263.4L287.0,260.5L283.4,257.7L278.7,259.5Z" fill="#38588c"/><path d="M247.8,270.1L252.6,265.2L249.0,261.2L244.2,265.4Z" fill="#3e4989"/><path d="M243.1,275.7L247.8,270.1L244.2,265.4L239.5,270.7Z" fill="#404588"/><path d="M299.0,266.8L303.7,263.7L300.1,259.3L295.3,261.8Z" fill="#3d4e8a"/><path d="M290.6,264.8L295.3,261.8L291.7,258.3L287.0,260.5Z" fill="#3a538b"/><path d="M260.9,265.4L265.6,261.6L262.0,258.5L257.3,261.3Z" fill="#3a538b"/><path d="M237.3,291.2L242.0,286.3L238.4,281.4L233.7,286.9Z" fill="#472d7b"/><path d="M269.2,266.0L274.0,262.3L270.3,258.9L265.6,261.6Z" fill="#3a538b"/><path d="M242.0,286.3L246.7,280.9L243.1,275.7L238.4,281.4Z" fill="#453781"/><path d="M302.6,273.0L307.3,269.5L303.7,263.7L299.0,266.8Z" fill="#3e4989"/><path d="M256.2,270.1L260.9,265.4L257.3,261.3L252.6,265.2Z" fill="#3d4e8a"/><path d="M246.7,280.9L251.5,275.3L247.8,270.1L243.1,275.7Z" fill="#443b84"/><path d="M251.5,275.3L256.2,270.1L252.6,265.2L247.8,270.1Z" fill="#404588"/><path d="M277.6,267.0L282.3,263.4L278.7,259.5L274.0,262.3Z" fill="#3a538b"/><path d="M294.2,270.5L299.0,266.8L295.3,261.8L290.6,264.8Z" fill="#3d4e8a"/><path d="M285.9,268.5L290.6,264.8L287.0,260.5L282.3,263.4Z" fill="#3d4e8a"/><path d="M264.5,270.5L269.2,266.0L265.6,261.6L260.9,265.4Z" fill="#3d4e8a"/><path d="M245.6,290.9L250.3,286.1L246.7,280.9L242.0,286.3Z" fill="#472d7b"/><path d="M297.8,276.9L302.6,273.0L299.0,266.8L294.2,270.5Z" fill="#404588"/><path d="M250.3,286.1L255.1,280.8L251.5,275.3L246.7,280.9Z" fill="#453781"/><path d="M240.9,295.1L245.6,290.9L242.0,286.3L237.3,291.2Z" fill="#482878"/><path d="M259.8,275.5L264.5,270.5L260.9,265.4L256.2,270.1Z" fill="#404588"/><path d="M255.1,280.8L259.8,275.5L256.2,270.1L251.5,275.3Z" fill="#443b84"/><path d="M272.8,271.3L277.6,267.0L274.0,262.3L269.2,266.0Z" fill="#3e4989"/><path d="M289.5,274.5L294.2,270.5L290.6,264.8L285.9,268.5Z" fill="#404588"/><path d="M281.2,272.7L285.9,268.5L282.3,263.4L277.6,267.0Z" fill="#3e4989"/><path d="M293.1,281.0L297.8,276.9L294.2,270.5L289.5,274.5Z" fill="#443b84"/><path d="M268.1,276.1L272.8,271.3L269.2,266.0L264.5,270.5Z" fill="#404588"/><path d="M258.7,286.2L263.4,281.2L259.8,275.5L255.1,280.8Z" fill="#453781"/><path d="M263.4,281.2L268.1,276.1L264.5,270.5L259.8,275.5Z" fill="#443b84"/><path d="M254.0,291.0L258.7,286.2L255.1,280.8L250.3,286.1Z" fill="#472d7b"/><path d="M284.8,278.9L289.5,274.5L285.9,268.5L281.2,272.7Z" fill="#424086"/><path d="M276.5,277.3L281.2,272.7L277.6,267.0L272.8,271.3Z" fill="#404588"/><path d="M249.2,295.1L254.0,291.0L250.3,286.1L245.6,290.9Z" fill="#482878"/><path d="M288.4,285.2L293.1,281.0L289.5,274.5L284.8,278.9Z" fill="#453781"/><path d="M271.7,282.1L276.5,277.3L272.8,271.3L268.1,276.1Z" fill="#443b84"/><path d="M280.1,283.4L284.8,278.9L281.2,272.7L276.5,277.3Z" fill="#443b84"/><path d="M267.0,286.9L271.7,282.1L268.1,276.1L263.4,281.2Z" fill="#453781"/><path d="M262.3,291.4L267.0,286.9L263.4,281.2L258.7,286.2Z" fill="#472d7b"/><path d="M244.5,298.4L249.2,295.1L245.6,290.9L240.9,295.1Z" fill="#482878"/><path d="M275.3,287.9L280.1,283.4L276.5,277.3L271.7,282.1Z" fill="#453781"/><path d="M283.7,289.3L288.4,285.2L284.8,278.9L280.1,283.4Z" fill="#46327e"/><path d="M257.6,295.4L262.3,291.4L258.7,286.2L254.0,291.0Z" fill="#482878"/><path d="M270.6,292.1L275.3,287.9L271.7,282.1L267.0,286.9Z" fill="#472d7b"/><path d="M279.0,293.2L283.7,289.3L280.1,283.4L275.3,287.9Z" fill="#472d7b"/><path d="M265.9,295.9L270.6,292.1L267.0,286.9L262.3,291.4Z" fill="#482878"/><path d="M252.8,298.6L257.6,295.4L254.0,291.0L249.2,295.1Z" fill="#482878"/><path d="M274.2,296.7L279.0,293.2L275.3,287.9L270.6,292.1Z" fill="#482878"/><path d="M261.2,299.0L265.9,295.9L262.3,291.4L257.6,295.4Z" fill="#482878"/><path d="M248.1,300.9L252.8,298.6L249.2,295.1L244.5,298.4Z" fill="#482374"/><path d="M269.5,299.6L274.2,296.7L270.6,292.1L265.9,295.9Z" fill="#482878"/><path d="M256.5,301.3L261.2,299.0L257.6,295.4L252.8,298.6Z" fill="#482374"/><path d="M264.8,301.7L269.5,299.6L265.9,295.9L261.2,299.0Z" fill="#482374"/><path d="M251.7,302.6L256.5,301.3L252.8,298.6L248.1,300.9Z" fill="#482374"/><path d="M260.1,303.0L264.8,301.7L261.2,299.0L256.5,301.3Z" fill="#482374"/><path d="M255.4,303.4L260.1,303.0L256.5,301.3L251.7,302.6Z" fill="#482878"/></g><path d="M69.2,275.8L69.2,93.8" stroke="#262626" stroke-width="1" fill="none"/><path d="M69.2,275.8L249.8,359.2" stroke="#262626" stroke-width="1" fill="none"/><path d="M249.8,359.2L485.9,295.5" stroke="#262626" stroke-width="1" fill="none"/><path d="M69.2,275.8L60.1,271.6" stroke="#262626" stroke-width="1" fill="none"/><path d="M69.2,249.8L60.1,245.6" stroke="#262626" stroke-width="1" fill="none"/><path d="M69.2,223.8L60.1,219.6" stroke="#262626" stroke-width="1" fill="none"/><path d="M69.2,197.8L60.1,193.6" stroke="#262626" stroke-width="1" fill="none"/><path d="M69.2,171.8L60.1,167.6" stroke="#262626" stroke-width="1" fill="none"/><path d="M69.2,145.8L60.1,141.6" stroke="#262626" stroke-width="1" fill="none"/><path d="M69.2,119.8L60.1,115.6" stroke="#262626" stroke-width="1" fill="none"/><path d="M69.2,93.8L60.1,89.6" stroke="#262626" stroke-width="1" fill="none"/><path d="M249.8,359.2L240.1,361.8" stroke="#262626" stroke-width="1" fill="none"/><path d="M249.8,359.2L258.9,363.4" stroke="#262626" stroke-width="1" fill="none"/><path d="M204.6,338.4L195.0,341.0" stroke="#262626" stroke-width="1" fill="none"/><path d="M308.8,343.3L317.9,347.5" stroke="#262626" stroke-width="1" fill="none"/><path d="M159.5,317.5L149.8,320.1" stroke="#262626" stroke-width="1" fill="none"/><path d="M367.8,327.4L376.9,331.5" stroke="#262626" stroke-width="1" fill="none"/><path d="M114.3,296.7L104.7,299.3" stroke="#262626" stroke-width="1" fill="none"/><path d="M426.9,311.4L436.0,315.6" stroke="#262626" stroke-width="1" fill="none"/><path d="M69.2,275.8L59.5,278.4" stroke="#262626" stroke-width="1" fill="none"/><path d="M485.9,295.5L495.0,299.7" stroke="#262626" stroke-width="1" fill="none"/><g font-family="Liberation Sans, sans-serif" font-size="9.7" fill="#4a4a4a"><text x="54.6" y="269.1" text-anchor="end">-0.4</text><text x="54.6" y="243.1" text-anchor="end">-0.2</text><text x="54.6" y="217.1" text-anchor="end">0</text><text x="54.6" y="191.1" text-anchor="end">0.2</text><text x="54.6" y="165.1" text-anchor="end">0.4</text><text x="54.6" y="139.1" text-anchor="end">0.6</text><text x="54.6" y="113.1" text-anchor="end">0.8</text><text x="54.6" y="87.1" text-anchor="end">1</text><text x="234.9" y="371.3" text-anchor="end">-10</text><text x="264.2" y="373.4" text-anchor="start">-10</text><text x="189.8" y="350.5" text-anchor="end">-5</text><text x="323.2" y="357.5" text-anchor="start">-5</text><text x="144.6" y="329.6" text-anchor="end">0</text><text x="382.2" y="341.5" text-anchor="start">0</text><text x="99.5" y="308.8" text-anchor="end">5</text><text x="441.3" y="325.6" text-anchor="start">5</text><text x="54.3" y="287.9" text-anchor="end">10</text><text x="500.3" y="309.7" text-anchor="start">10</text></g></svg><div class="t " style="left:9.00px;top:499px;height:20px;line-height:20px;letter-spacing:-0.248px;">(7.2248, 5.5732)</div></div>
</div></body></html>
